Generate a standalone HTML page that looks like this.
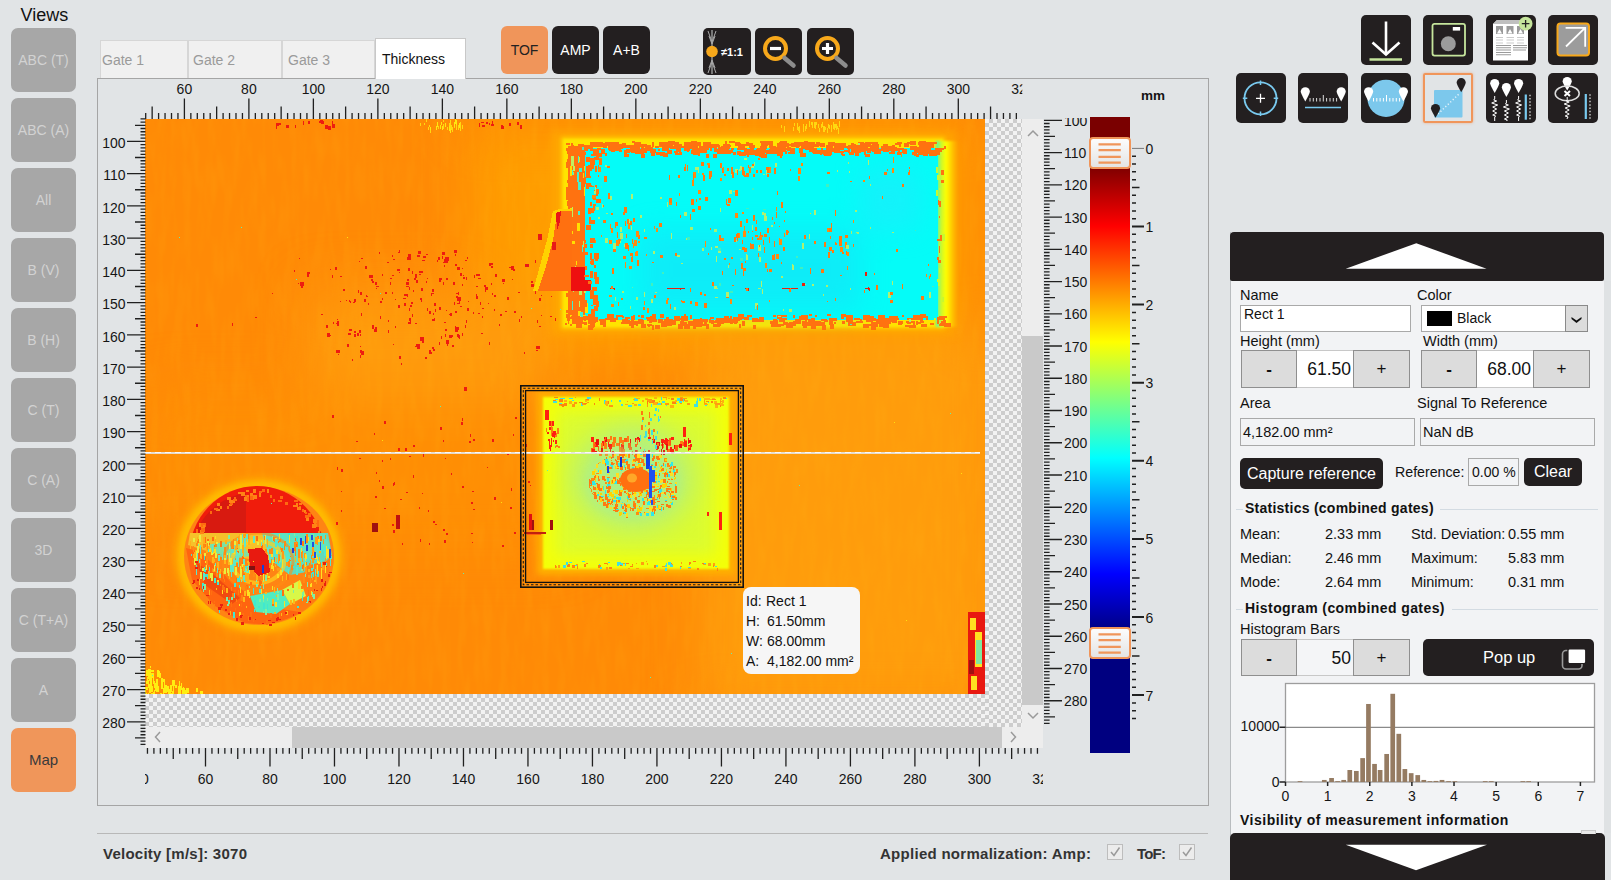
<!DOCTYPE html><html><head><meta charset="utf-8"><style>html,body{margin:0;padding:0}body{width:1611px;height:880px;overflow:hidden;position:relative;background:#e1e4e6;font-family:"Liberation Sans", sans-serif;color:#111}.a{position:absolute}.vb{position:absolute;left:11px;width:65px;height:64px;border-radius:7px;background:#a7a7a7;color:#d2d2d2;font-size:14px;text-align:center;line-height:64px}.tab{position:absolute;top:40px;height:38px;background:#f0f0f0;border:1px solid #d6d6d6;border-bottom:none;box-sizing:border-box;color:#9a9a9a;font-size:14px;line-height:38px;padding-left:1px}.dbtn{position:absolute;background:#231f20;border-radius:6px;color:#fff;text-align:center}svg text{font-family:"Liberation Sans",sans-serif;font-size:14px;fill:#151515}.lbl{position:absolute;font-size:14.5px;color:#111;white-space:nowrap}.box{position:absolute;box-sizing:border-box;border:1px solid #a9a9a9}.sp{position:absolute;box-sizing:border-box;background:#dcdcdc;border:1px solid #8f8f8f;font-size:17px;text-align:center;color:#111}</style></head><body>
<div class="a" style="left:20.5px;top:5px;font-size:18px;color:#111">Views</div>
<div class="vb" style="top:28px">ABC (T)</div>
<div class="vb" style="top:98px">ABC (A)</div>
<div class="vb" style="top:168px">All</div>
<div class="vb" style="top:238px">B (V)</div>
<div class="vb" style="top:308px">B (H)</div>
<div class="vb" style="top:378px">C (T)</div>
<div class="vb" style="top:448px">C (A)</div>
<div class="vb" style="top:518px">3D</div>
<div class="vb" style="top:588px">C (T+A)</div>
<div class="vb" style="top:658px">A</div>
<div class="vb" style="top:728px;background:#f0965a;color:#3a3a3a;font-size:15px">Map</div>
<div class="tab" style="left:100px;width:88px">Gate 1</div>
<div class="tab" style="left:188px;width:94px;padding-left:4px">Gate 2</div>
<div class="tab" style="left:282px;width:93px;padding-left:5px">Gate 3</div>
<div class="tab" style="left:375px;top:38px;height:41px;width:91px;background:#fff;border-color:#c8c8c8;color:#111;line-height:41px;padding-left:6px;z-index:2">Thickness</div>
<div class="a" style="left:97px;top:78px;width:1110px;height:726px;border:1px solid #a5a5a5;box-sizing:content-box"></div>
<div class="a" style="left:501px;top:26px;width:47px;height:48px;border-radius:6px;background:#f0955a;color:#222;font-size:14px;text-align:center;line-height:48px">TOF</div>
<div class="dbtn" style="left:552px;top:26px;width:47px;height:48px;font-size:14px;line-height:48px">AMP</div>
<div class="dbtn" style="left:603px;top:26px;width:47px;height:48px;font-size:14px;line-height:48px">A+B</div>
<div style="position:absolute;left:703px;top:28px;width:48px;height:47px;background:#231f20;border-radius:5px;"><svg width="48" height="47" viewBox="0 0 48 47" style="position:absolute;left:0;top:0"><path d="M9 2 L9 46" stroke="#777" stroke-width="2"/><path d="M5 3 L9 14 L13 3 M6 8 L9 16 L12 8 M5 45 L9 34 L13 45 M6 40 L9 32 L12 40" stroke="#aaa" stroke-width="1" fill="none"/><circle cx="9" cy="23.5" r="5.8" fill="#f7a81b"/><text x="18" y="27.5" style="font-size:11px;font-weight:bold;fill:#fff">≠1:1</text></svg></div>
<div style="position:absolute;left:755px;top:28px;width:47px;height:47px;background:#231f20;border-radius:5px;"><svg width="47" height="47" viewBox="0 0 47 47" style="position:absolute;left:0;top:0"><circle cx="20.5" cy="20.5" r="10.5" stroke="#f7a81b" stroke-width="4" fill="none"/><path d="M29.5 30 L38.5 37.5" stroke="#8d8d8d" stroke-width="4.5" stroke-linecap="round"/><path d="M15 20.5H26" stroke="#fff" stroke-width="3.2"/></svg></div>
<div style="position:absolute;left:807px;top:28px;width:47px;height:47px;background:#231f20;border-radius:5px;"><svg width="47" height="47" viewBox="0 0 47 47" style="position:absolute;left:0;top:0"><circle cx="20.5" cy="20.5" r="10.5" stroke="#f7a81b" stroke-width="4" fill="none"/><path d="M29.5 30 L38.5 37.5" stroke="#8d8d8d" stroke-width="4.5" stroke-linecap="round"/><path d="M15 20.5H26 M20.5 15V26" stroke="#fff" stroke-width="3.2"/></svg></div>
<div class="a" style="left:985px;top:119px;width:37px;height:608px;background-color:#f2f2f2;background-image:linear-gradient(45deg,#cdcdcd 25%,transparent 25%,transparent 75%,#cdcdcd 75%),linear-gradient(45deg,#cdcdcd 25%,transparent 25%,transparent 75%,#cdcdcd 75%);background-size:8px 8px;background-position:0 0,4px 4px"></div>
<div class="a" style="left:145px;top:694px;width:840px;height:33px;background-color:#f2f2f2;background-image:linear-gradient(45deg,#cdcdcd 25%,transparent 25%,transparent 75%,#cdcdcd 75%),linear-gradient(45deg,#cdcdcd 25%,transparent 25%,transparent 75%,#cdcdcd 75%);background-size:8px 8px;background-position:0 0,4px 4px"></div>
<svg style="position:absolute;left:145px;top:119px" width="840" height="575" viewBox="145 119 840 575" shape-rendering="crispEdges">
<defs><filter id="b1" color-interpolation-filters="sRGB" x="-20%" y="-20%" width="140%" height="140%"><feGaussianBlur stdDeviation="1"/></filter><filter id="b2" color-interpolation-filters="sRGB" x="-20%" y="-20%" width="140%" height="140%"><feGaussianBlur stdDeviation="2"/></filter><filter id="b3" color-interpolation-filters="sRGB" x="-20%" y="-20%" width="140%" height="140%"><feGaussianBlur stdDeviation="3"/></filter><filter id="b5" color-interpolation-filters="sRGB" x="-20%" y="-20%" width="140%" height="140%"><feGaussianBlur stdDeviation="5"/></filter><filter id="b8" color-interpolation-filters="sRGB" x="-30%" y="-30%" width="160%" height="160%"><feGaussianBlur stdDeviation="8"/></filter><filter id="b14" color-interpolation-filters="sRGB" x="-50%" y="-50%" width="200%" height="200%"><feGaussianBlur stdDeviation="14"/></filter><filter id="b25" color-interpolation-filters="sRGB" x="-50%" y="-50%" width="200%" height="200%"><feGaussianBlur stdDeviation="25"/></filter></defs>
<rect x="145" y="119" width="840" height="575" fill="#ff8a06"/>
<filter id="tex" color-interpolation-filters="sRGB" x="0" y="0" width="100%" height="100%"><feTurbulence type="fractalNoise" baseFrequency="0.12 0.025" numOctaves="2" seed="4"/><feColorMatrix type="matrix" values="0 0 0 0 1  0 0 0 0 0.78  0 0 0 0 0.1  1.2 0 0 0 -0.45"/></filter>
<g filter="url(#b25)" shape-rendering="auto"><rect x="470" y="125" width="500" height="230" fill="#ff9c00"/><rect x="150" y="390" width="420" height="160" fill="#ff8e04"/><rect x="310" y="290" width="240" height="110" fill="#ff9a0c"/><rect x="700" y="330" width="300" height="380" fill="#ff9c0c"/></g>
<rect x="145" y="119" width="840" height="575" filter="url(#tex)" opacity="0.18" shape-rendering="auto"/>
<g shape-rendering="auto">
<rect x="552" y="132" width="402" height="202" fill="#ffa600" filter="url(#b5)"/>
<rect x="561" y="137" width="384" height="192" fill="#ffcc00" filter="url(#b2)"/>
<rect x="563" y="139" width="380" height="188" fill="#ffe400" filter="url(#b1)"/>
<linearGradient id="rg" x1="0" x2="1" y1="0" y2="0"><stop offset="0" stop-color="#40f8c0"/><stop offset="0.2" stop-color="#c8f830"/><stop offset="0.42" stop-color="#ffff00"/><stop offset="0.7" stop-color="#ffc000"/><stop offset="1" stop-color="#ffa000" stop-opacity="0"/></linearGradient>
<rect x="936" y="141" width="24" height="186" fill="url(#rg)" filter="url(#b1)"/>
</g>
<rect x="585" y="148" width="353" height="172" fill="#04fcf8"/>
<g filter="url(#b14)" shape-rendering="auto" opacity="0.35"><rect x="640" y="230" width="220" height="80" fill="#20d0f8"/><rect x="860" y="170" width="60" height="60" fill="#30e0ff"/></g>
<rect x="568" y="146" width="17" height="178" fill="#ff7210"/>
<rect x="568" y="246" width="5" height="5" fill="#ff7210"/><rect x="565" y="237" width="3" height="2" fill="#ff7210"/><rect x="566" y="162" width="2" height="6" fill="#ff7210"/><rect x="572" y="262" width="3" height="6" fill="#ff7210"/><rect x="571" y="157" width="2" height="3" fill="#ff7210"/><rect x="569" y="285" width="4" height="5" fill="#ff7210"/><rect x="568" y="260" width="5" height="2" fill="#ff7210"/><rect x="568" y="196" width="2" height="7" fill="#ff7210"/><rect x="567" y="187" width="4" height="2" fill="#ff7210"/><rect x="569" y="165" width="2" height="8" fill="#ff7210"/><rect x="567" y="317" width="2" height="3" fill="#ff7210"/><rect x="571" y="155" width="5" height="7" fill="#ff7210"/><rect x="567" y="247" width="3" height="8" fill="#ff7210"/><rect x="567" y="201" width="2" height="5" fill="#ff7210"/><rect x="565" y="272" width="2" height="2" fill="#ff7210"/><rect x="570" y="178" width="3" height="5" fill="#ff7210"/><rect x="572" y="283" width="5" height="7" fill="#ff7210"/><rect x="565" y="221" width="3" height="2" fill="#ff7210"/><rect x="571" y="320" width="4" height="2" fill="#ff7210"/><rect x="565" y="323" width="2" height="2" fill="#ff7210"/><rect x="566" y="192" width="4" height="8" fill="#ff7210"/><rect x="567" y="159" width="3" height="6" fill="#ff7210"/><rect x="564" y="212" width="5" height="3" fill="#ff7210"/><rect x="571" y="170" width="5" height="3" fill="#ff7210"/><rect x="566" y="187" width="3" height="7" fill="#ff7210"/><rect x="565" y="258" width="3" height="7" fill="#ff7210"/><rect x="571" y="253" width="5" height="2" fill="#ff7210"/><rect x="565" y="237" width="4" height="3" fill="#ff7210"/><rect x="566" y="293" width="5" height="4" fill="#ff7210"/><rect x="571" y="320" width="3" height="3" fill="#ff7210"/><rect x="568" y="298" width="2" height="4" fill="#ff7210"/><rect x="571" y="182" width="2" height="2" fill="#ff7210"/><rect x="567" y="190" width="2" height="3" fill="#ff7210"/><rect x="567" y="248" width="3" height="2" fill="#ff7210"/><rect x="565" y="226" width="4" height="7" fill="#ff7210"/><rect x="569" y="310" width="5" height="4" fill="#ff7210"/><rect x="572" y="150" width="2" height="5" fill="#ff7210"/><rect x="570" y="203" width="2" height="2" fill="#ff7210"/><rect x="568" y="277" width="3" height="8" fill="#ff7210"/><rect x="567" y="268" width="2" height="8" fill="#ff7210"/><rect x="572" y="151" width="5" height="6" fill="#ff7210"/><rect x="569" y="214" width="2" height="6" fill="#ff7210"/><rect x="565" y="260" width="4" height="5" fill="#ff7210"/><rect x="567" y="277" width="5" height="5" fill="#ff7210"/><rect x="571" y="161" width="2" height="4" fill="#ff7210"/><rect x="568" y="187" width="2" height="5" fill="#ff7210"/><rect x="566" y="148" width="4" height="3" fill="#ff7210"/><rect x="568" y="280" width="4" height="7" fill="#ff7210"/><rect x="568" y="189" width="5" height="7" fill="#ff7210"/><rect x="566" y="223" width="3" height="3" fill="#ff7210"/><rect x="566" y="310" width="3" height="3" fill="#ff7210"/><rect x="568" y="295" width="2" height="7" fill="#ff7210"/><rect x="572" y="195" width="3" height="2" fill="#ff7210"/><rect x="568" y="311" width="5" height="5" fill="#ff7210"/><rect x="569" y="273" width="5" height="4" fill="#ff7210"/><rect x="571" y="196" width="2" height="7" fill="#ff7210"/><rect x="569" y="201" width="2" height="7" fill="#ff7210"/><rect x="567" y="180" width="4" height="3" fill="#ff7210"/><rect x="570" y="321" width="2" height="5" fill="#ff7210"/><rect x="569" y="263" width="4" height="2" fill="#ff7210"/>
<rect x="572" y="231" width="1" height="3" fill="#ffe000"/><rect x="578" y="156" width="1" height="7" fill="#40f0d0"/><rect x="578" y="311" width="3" height="5" fill="#ffe000"/><rect x="583" y="269" width="1" height="4" fill="#ffe000"/><rect x="584" y="273" width="1" height="10" fill="#ffe000"/><rect x="572" y="301" width="1" height="9" fill="#40f0d0"/><rect x="576" y="261" width="1" height="4" fill="#ffe000"/><rect x="572" y="303" width="1" height="7" fill="#40f0d0"/><rect x="573" y="272" width="1" height="8" fill="#ffe000"/><rect x="570" y="208" width="2" height="7" fill="#ffe000"/><rect x="584" y="187" width="1" height="9" fill="#ffe000"/><rect x="572" y="207" width="1" height="10" fill="#c0f060"/><rect x="585" y="303" width="3" height="10" fill="#ffe000"/><rect x="578" y="267" width="1" height="10" fill="#40f0d0"/><rect x="582" y="245" width="1" height="7" fill="#40f0d0"/><rect x="580" y="312" width="3" height="6" fill="#40f0d0"/><rect x="583" y="315" width="3" height="7" fill="#ffe000"/><rect x="572" y="241" width="3" height="3" fill="#ffe000"/><rect x="569" y="315" width="3" height="9" fill="#ffe000"/><rect x="577" y="267" width="1" height="10" fill="#ffe000"/><rect x="584" y="286" width="2" height="7" fill="#c0f060"/><rect x="577" y="172" width="2" height="10" fill="#40f0d0"/><rect x="571" y="221" width="1" height="7" fill="#c0f060"/><rect x="580" y="316" width="1" height="6" fill="#c0f060"/><rect x="573" y="267" width="2" height="8" fill="#c0f060"/><rect x="579" y="168" width="3" height="4" fill="#40f0d0"/><rect x="580" y="269" width="2" height="3" fill="#ffe000"/><rect x="579" y="290" width="3" height="5" fill="#c0f060"/><rect x="583" y="241" width="1" height="6" fill="#c0f060"/><rect x="573" y="276" width="2" height="5" fill="#40f0d0"/><rect x="579" y="301" width="1" height="6" fill="#c0f060"/><rect x="583" y="173" width="1" height="5" fill="#ffe000"/><rect x="573" y="166" width="2" height="5" fill="#c0f060"/><rect x="575" y="266" width="1" height="4" fill="#c0f060"/><rect x="578" y="211" width="2" height="4" fill="#40f0d0"/><rect x="577" y="267" width="1" height="4" fill="#ffe000"/><rect x="571" y="156" width="3" height="10" fill="#c0f060"/><rect x="572" y="170" width="1" height="5" fill="#40f0d0"/><rect x="584" y="166" width="1" height="5" fill="#ffe000"/><rect x="570" y="166" width="2" height="10" fill="#ffe000"/><rect x="577" y="223" width="3" height="8" fill="#ffe000"/><rect x="579" y="157" width="1" height="5" fill="#ffe000"/><rect x="576" y="276" width="2" height="6" fill="#c0f060"/><rect x="571" y="285" width="2" height="4" fill="#ffe000"/><rect x="578" y="182" width="3" height="8" fill="#40f0d0"/>
<path d="M533 291 L541 262 L548 236 L553 211 L560 209 L572 209 L572 291Z" fill="#ffd200"/>
<path d="M538 291 L545 270 L553 240 L557 214 L561 211 L572 211 L572 291Z" fill="#ff7010"/>
<path d="M556 213 L561 211 L560 222 L557 230Z" fill="#e81818"/><rect x="552" y="242" width="4" height="8" fill="#e81818"/>
<rect x="538" y="234" width="4" height="6" fill="#e81818"/><rect x="525" y="264" width="4" height="3" fill="#e81818"/>
<rect x="571" y="267" width="14" height="24" fill="#ee1010"/><rect x="585" y="280" width="6" height="11" fill="#ee1010"/>
<rect x="672" y="142" width="7" height="3" fill="#ff7210"/><rect x="616" y="144" width="6" height="4" fill="#ff7210"/><rect x="855" y="145" width="7" height="3" fill="#ff7210"/><rect x="867" y="144" width="2" height="2" fill="#ff7210"/><rect x="940" y="149" width="2" height="3" fill="#ff7210"/><rect x="923" y="147" width="4" height="3" fill="#ff7210"/><rect x="781" y="146" width="5" height="5" fill="#ff7210"/><rect x="831" y="148" width="6" height="2" fill="#ff7210"/><rect x="799" y="148" width="4" height="5" fill="#ff7210"/><rect x="757" y="148" width="7" height="5" fill="#ff7210"/><rect x="603" y="143" width="4" height="5" fill="#ff7210"/><rect x="807" y="148" width="2" height="2" fill="#ff7210"/><rect x="918" y="142" width="5" height="3" fill="#ff7210"/><rect x="771" y="146" width="5" height="5" fill="#ff7210"/><rect x="674" y="145" width="4" height="4" fill="#ff7210"/><rect x="749" y="143" width="4" height="4" fill="#ff7210"/><rect x="571" y="143" width="2" height="3" fill="#ff7210"/><rect x="851" y="145" width="4" height="5" fill="#ff7210"/><rect x="786" y="148" width="4" height="2" fill="#ff7210"/><rect x="728" y="145" width="3" height="2" fill="#ff7210"/><rect x="920" y="148" width="5" height="3" fill="#ff7210"/><rect x="794" y="142" width="6" height="5" fill="#ff7210"/><rect x="611" y="149" width="4" height="3" fill="#ff7210"/><rect x="703" y="142" width="5" height="5" fill="#ff7210"/><rect x="808" y="147" width="4" height="3" fill="#ff7210"/><rect x="844" y="143" width="2" height="4" fill="#ff7210"/><rect x="670" y="146" width="7" height="3" fill="#ff7210"/><rect x="851" y="143" width="3" height="3" fill="#ff7210"/><rect x="804" y="141" width="4" height="5" fill="#ff7210"/><rect x="802" y="142" width="6" height="4" fill="#ff7210"/><rect x="852" y="149" width="3" height="3" fill="#ff7210"/><rect x="749" y="144" width="4" height="4" fill="#ff7210"/><rect x="848" y="149" width="2" height="2" fill="#ff7210"/><rect x="872" y="147" width="3" height="5" fill="#ff7210"/><rect x="848" y="145" width="3" height="4" fill="#ff7210"/><rect x="813" y="150" width="4" height="4" fill="#ff7210"/><rect x="728" y="144" width="2" height="5" fill="#ff7210"/><rect x="596" y="142" width="6" height="5" fill="#ff7210"/><rect x="679" y="148" width="2" height="4" fill="#ff7210"/><rect x="910" y="146" width="7" height="4" fill="#ff7210"/><rect x="840" y="147" width="4" height="3" fill="#ff7210"/><rect x="701" y="148" width="4" height="2" fill="#ff7210"/><rect x="834" y="146" width="7" height="4" fill="#ff7210"/><rect x="766" y="150" width="5" height="4" fill="#ff7210"/><rect x="717" y="149" width="6" height="3" fill="#ff7210"/><rect x="703" y="144" width="4" height="5" fill="#ff7210"/><rect x="867" y="148" width="4" height="5" fill="#ff7210"/><rect x="882" y="146" width="3" height="2" fill="#ff7210"/><rect x="899" y="144" width="2" height="3" fill="#ff7210"/><rect x="772" y="146" width="2" height="5" fill="#ff7210"/><rect x="786" y="144" width="6" height="2" fill="#ff7210"/><rect x="597" y="148" width="4" height="2" fill="#ff7210"/><rect x="806" y="142" width="7" height="5" fill="#ff7210"/><rect x="835" y="145" width="6" height="4" fill="#ff7210"/><rect x="715" y="144" width="4" height="3" fill="#ff7210"/><rect x="750" y="148" width="2" height="2" fill="#ff7210"/><rect x="852" y="150" width="4" height="2" fill="#ff7210"/><rect x="881" y="149" width="6" height="2" fill="#ff7210"/><rect x="834" y="148" width="5" height="5" fill="#ff7210"/><rect x="659" y="142" width="7" height="5" fill="#ff7210"/><rect x="687" y="145" width="6" height="4" fill="#ff7210"/><rect x="933" y="142" width="4" height="2" fill="#ff7210"/><rect x="811" y="148" width="3" height="2" fill="#ff7210"/><rect x="572" y="145" width="2" height="4" fill="#ff7210"/><rect x="641" y="144" width="6" height="3" fill="#ff7210"/><rect x="791" y="143" width="3" height="4" fill="#ff7210"/><rect x="631" y="148" width="4" height="5" fill="#ff7210"/><rect x="749" y="145" width="4" height="2" fill="#ff7210"/><rect x="892" y="145" width="3" height="3" fill="#ff7210"/><rect x="935" y="148" width="4" height="2" fill="#ff7210"/><rect x="903" y="149" width="4" height="5" fill="#ff7210"/><rect x="836" y="146" width="3" height="5" fill="#ff7210"/><rect x="858" y="142" width="6" height="3" fill="#ff7210"/><rect x="761" y="141" width="6" height="3" fill="#ff7210"/><rect x="643" y="149" width="3" height="3" fill="#ff7210"/><rect x="699" y="147" width="6" height="2" fill="#ff7210"/><rect x="828" y="142" width="7" height="4" fill="#ff7210"/><rect x="864" y="145" width="7" height="2" fill="#ff7210"/><rect x="645" y="146" width="6" height="5" fill="#ff7210"/><rect x="924" y="150" width="4" height="4" fill="#ff7210"/><rect x="595" y="144" width="5" height="2" fill="#ff7210"/><rect x="594" y="142" width="7" height="5" fill="#ff7210"/><rect x="848" y="148" width="2" height="5" fill="#ff7210"/><rect x="892" y="147" width="5" height="3" fill="#ff7210"/><rect x="779" y="145" width="2" height="3" fill="#ff7210"/><rect x="676" y="144" width="6" height="4" fill="#ff7210"/><rect x="851" y="146" width="2" height="4" fill="#ff7210"/><rect x="642" y="148" width="4" height="4" fill="#ff7210"/><rect x="779" y="148" width="4" height="5" fill="#ff7210"/><rect x="601" y="142" width="2" height="3" fill="#ff7210"/><rect x="634" y="145" width="5" height="2" fill="#ff7210"/><rect x="652" y="142" width="2" height="5" fill="#ff7210"/><rect x="858" y="144" width="5" height="3" fill="#ff7210"/><rect x="856" y="148" width="5" height="5" fill="#ff7210"/><rect x="914" y="147" width="7" height="5" fill="#ff7210"/><rect x="937" y="148" width="7" height="2" fill="#ff7210"/><rect x="691" y="144" width="7" height="5" fill="#ff7210"/><rect x="777" y="143" width="4" height="4" fill="#ff7210"/><rect x="797" y="142" width="6" height="4" fill="#ff7210"/><rect x="699" y="146" width="3" height="3" fill="#ff7210"/><rect x="780" y="141" width="7" height="3" fill="#ff7210"/><rect x="618" y="145" width="5" height="4" fill="#ff7210"/><rect x="601" y="149" width="4" height="5" fill="#ff7210"/><rect x="737" y="148" width="3" height="2" fill="#ff7210"/><rect x="630" y="148" width="4" height="3" fill="#ff7210"/><rect x="919" y="141" width="7" height="4" fill="#ff7210"/><rect x="853" y="144" width="3" height="3" fill="#ff7210"/><rect x="738" y="145" width="7" height="3" fill="#ff7210"/><rect x="852" y="149" width="5" height="2" fill="#ff7210"/><rect x="641" y="145" width="3" height="5" fill="#ff7210"/><rect x="781" y="143" width="6" height="3" fill="#ff7210"/><rect x="658" y="149" width="2" height="2" fill="#ff7210"/><rect x="718" y="145" width="2" height="5" fill="#ff7210"/><rect x="722" y="147" width="7" height="5" fill="#ff7210"/><rect x="750" y="150" width="7" height="5" fill="#ff7210"/><rect x="610" y="142" width="6" height="4" fill="#ff7210"/><rect x="725" y="141" width="2" height="4" fill="#ff7210"/><rect x="843" y="146" width="4" height="2" fill="#ff7210"/><rect x="613" y="145" width="6" height="5" fill="#ff7210"/><rect x="746" y="142" width="3" height="4" fill="#ff7210"/><rect x="921" y="149" width="7" height="4" fill="#ff7210"/><rect x="779" y="142" width="7" height="5" fill="#ff7210"/><rect x="907" y="142" width="3" height="2" fill="#ff7210"/><rect x="566" y="143" width="4" height="2" fill="#ff7210"/><rect x="631" y="145" width="5" height="5" fill="#ff7210"/><rect x="701" y="146" width="2" height="4" fill="#ff7210"/><rect x="738" y="144" width="4" height="5" fill="#ff7210"/><rect x="919" y="150" width="5" height="3" fill="#ff7210"/><rect x="678" y="149" width="2" height="3" fill="#ff7210"/><rect x="883" y="144" width="5" height="2" fill="#ff7210"/><rect x="806" y="147" width="6" height="3" fill="#ff7210"/><rect x="638" y="149" width="2" height="2" fill="#ff7210"/><rect x="840" y="144" width="4" height="5" fill="#ff7210"/><rect x="693" y="150" width="5" height="5" fill="#ff7210"/><rect x="630" y="149" width="2" height="3" fill="#ff7210"/><rect x="634" y="143" width="7" height="4" fill="#ff7210"/><rect x="707" y="147" width="2" height="3" fill="#ff7210"/><rect x="904" y="143" width="3" height="4" fill="#ff7210"/><rect x="808" y="142" width="2" height="5" fill="#ff7210"/><rect x="767" y="141" width="6" height="4" fill="#ff7210"/><rect x="726" y="146" width="3" height="4" fill="#ff7210"/><rect x="659" y="144" width="6" height="2" fill="#ff7210"/><rect x="865" y="142" width="2" height="5" fill="#ff7210"/><rect x="567" y="149" width="2" height="3" fill="#ff7210"/><rect x="776" y="147" width="4" height="4" fill="#ff7210"/><rect x="862" y="146" width="6" height="3" fill="#ff7210"/><rect x="608" y="145" width="7" height="5" fill="#ff7210"/><rect x="863" y="148" width="3" height="4" fill="#ff7210"/><rect x="772" y="149" width="6" height="5" fill="#ff7210"/><rect x="579" y="146" width="7" height="2" fill="#ff7210"/><rect x="896" y="143" width="3" height="2" fill="#ff7210"/><rect x="871" y="146" width="7" height="4" fill="#ff7210"/><rect x="593" y="149" width="6" height="3" fill="#ff7210"/><rect x="586" y="145" width="7" height="4" fill="#ff7210"/><rect x="855" y="145" width="7" height="3" fill="#ff7210"/><rect x="662" y="142" width="7" height="5" fill="#ff7210"/><rect x="685" y="145" width="7" height="3" fill="#ff7210"/><rect x="615" y="148" width="6" height="3" fill="#ff7210"/><rect x="847" y="146" width="2" height="2" fill="#ff7210"/><rect x="721" y="146" width="2" height="5" fill="#ff7210"/><rect x="744" y="149" width="2" height="3" fill="#ff7210"/><rect x="662" y="146" width="3" height="5" fill="#ff7210"/><rect x="599" y="143" width="4" height="4" fill="#ff7210"/><rect x="581" y="145" width="7" height="2" fill="#ff7210"/><rect x="780" y="149" width="6" height="3" fill="#ff7210"/><rect x="891" y="149" width="3" height="5" fill="#ff7210"/><rect x="861" y="143" width="4" height="3" fill="#ff7210"/><rect x="866" y="148" width="5" height="3" fill="#ff7210"/><rect x="647" y="145" width="4" height="5" fill="#ff7210"/><rect x="751" y="147" width="3" height="5" fill="#ff7210"/><rect x="770" y="145" width="2" height="4" fill="#ff7210"/><rect x="925" y="147" width="6" height="3" fill="#ff7210"/><rect x="760" y="146" width="7" height="3" fill="#ff7210"/><rect x="605" y="142" width="7" height="4" fill="#ff7210"/><rect x="855" y="148" width="2" height="2" fill="#ff7210"/><rect x="883" y="145" width="5" height="4" fill="#ff7210"/><rect x="857" y="146" width="2" height="4" fill="#ff7210"/><rect x="796" y="145" width="3" height="3" fill="#ff7210"/><rect x="578" y="144" width="5" height="5" fill="#ff7210"/><rect x="761" y="146" width="4" height="5" fill="#ff7210"/><rect x="622" y="143" width="4" height="5" fill="#ff7210"/><rect x="618" y="146" width="4" height="3" fill="#ff7210"/><rect x="676" y="144" width="3" height="3" fill="#ff7210"/><rect x="887" y="148" width="5" height="2" fill="#ff7210"/><rect x="816" y="142" width="3" height="4" fill="#ff7210"/><rect x="927" y="149" width="3" height="4" fill="#ff7210"/><rect x="868" y="142" width="5" height="2" fill="#ff7210"/><rect x="711" y="144" width="5" height="4" fill="#ff7210"/><rect x="626" y="145" width="5" height="3" fill="#ff7210"/><rect x="817" y="143" width="2" height="4" fill="#ff7210"/><rect x="870" y="145" width="4" height="4" fill="#ff7210"/><rect x="907" y="142" width="2" height="5" fill="#ff7210"/><rect x="587" y="145" width="6" height="4" fill="#ff7210"/><rect x="838" y="149" width="2" height="2" fill="#ff7210"/><rect x="697" y="149" width="6" height="4" fill="#ff7210"/><rect x="874" y="149" width="7" height="5" fill="#ff7210"/><rect x="799" y="150" width="4" height="2" fill="#ff7210"/><rect x="858" y="147" width="6" height="5" fill="#ff7210"/><rect x="590" y="142" width="5" height="5" fill="#ff7210"/><rect x="931" y="144" width="3" height="4" fill="#ff7210"/><rect x="753" y="145" width="2" height="3" fill="#ff7210"/><rect x="668" y="143" width="3" height="3" fill="#ff7210"/><rect x="916" y="150" width="2" height="3" fill="#ff7210"/><rect x="887" y="148" width="2" height="4" fill="#ff7210"/><rect x="697" y="149" width="4" height="3" fill="#ff7210"/><rect x="826" y="150" width="3" height="3" fill="#ff7210"/><rect x="801" y="145" width="6" height="4" fill="#ff7210"/><rect x="723" y="144" width="7" height="5" fill="#ff7210"/><rect x="810" y="144" width="7" height="3" fill="#ff7210"/><rect x="898" y="150" width="2" height="4" fill="#ff7210"/><rect x="887" y="146" width="7" height="5" fill="#ff7210"/><rect x="627" y="149" width="5" height="2" fill="#ff7210"/><rect x="662" y="146" width="7" height="5" fill="#ff7210"/><rect x="837" y="143" width="7" height="4" fill="#ff7210"/><rect x="692" y="148" width="6" height="3" fill="#ff7210"/><rect x="808" y="142" width="7" height="4" fill="#ff7210"/><rect x="613" y="144" width="7" height="4" fill="#ff7210"/><rect x="812" y="150" width="5" height="3" fill="#ff7210"/><rect x="826" y="145" width="7" height="5" fill="#ff7210"/><rect x="919" y="150" width="2" height="3" fill="#ff7210"/><rect x="895" y="143" width="4" height="2" fill="#ff7210"/><rect x="691" y="141" width="6" height="5" fill="#ff7210"/><rect x="707" y="144" width="7" height="4" fill="#ff7210"/><rect x="714" y="147" width="3" height="5" fill="#ff7210"/><rect x="772" y="148" width="3" height="5" fill="#ff7210"/><rect x="881" y="146" width="4" height="5" fill="#ff7210"/><rect x="611" y="144" width="2" height="4" fill="#ff7210"/><rect x="669" y="145" width="4" height="3" fill="#ff7210"/><rect x="748" y="144" width="4" height="2" fill="#ff7210"/><rect x="590" y="149" width="4" height="2" fill="#ff7210"/><rect x="635" y="145" width="3" height="5" fill="#ff7210"/><rect x="578" y="144" width="6" height="5" fill="#ff7210"/><rect x="647" y="147" width="6" height="4" fill="#ff7210"/><rect x="637" y="144" width="3" height="5" fill="#ff7210"/><rect x="632" y="141" width="3" height="2" fill="#ff7210"/><rect x="668" y="141" width="6" height="4" fill="#ff7210"/><rect x="760" y="141" width="3" height="2" fill="#ff7210"/><rect x="570" y="146" width="3" height="5" fill="#ff7210"/><rect x="682" y="146" width="7" height="2" fill="#ff7210"/><rect x="718" y="147" width="4" height="2" fill="#ff7210"/><rect x="784" y="143" width="5" height="4" fill="#ff7210"/><rect x="872" y="144" width="7" height="5" fill="#ff7210"/><rect x="684" y="142" width="7" height="4" fill="#ff7210"/><rect x="666" y="143" width="3" height="3" fill="#ff7210"/><rect x="847" y="146" width="7" height="3" fill="#ff7210"/><rect x="697" y="142" width="4" height="4" fill="#ff7210"/><rect x="729" y="141" width="6" height="2" fill="#ff7210"/><rect x="602" y="150" width="3" height="2" fill="#ff7210"/><rect x="687" y="148" width="2" height="4" fill="#ff7210"/><rect x="745" y="149" width="5" height="5" fill="#ff7210"/><rect x="873" y="142" width="5" height="4" fill="#ff7210"/><rect x="860" y="146" width="2" height="3" fill="#ff7210"/><rect x="910" y="141" width="6" height="4" fill="#ff7210"/><rect x="890" y="147" width="6" height="2" fill="#ff7210"/><rect x="883" y="147" width="5" height="5" fill="#ff7210"/><rect x="725" y="144" width="3" height="5" fill="#ff7210"/><rect x="761" y="141" width="7" height="5" fill="#ff7210"/><rect x="673" y="141" width="2" height="4" fill="#ff7210"/><rect x="769" y="144" width="4" height="4" fill="#ff7210"/><rect x="844" y="150" width="5" height="2" fill="#ff7210"/><rect x="851" y="149" width="2" height="3" fill="#ff7210"/><rect x="884" y="147" width="3" height="2" fill="#ff7210"/><rect x="759" y="150" width="2" height="3" fill="#ff7210"/><rect x="835" y="143" width="4" height="5" fill="#ff7210"/><rect x="769" y="149" width="3" height="5" fill="#ff7210"/><rect x="930" y="143" width="2" height="5" fill="#ff7210"/><rect x="897" y="142" width="5" height="2" fill="#ff7210"/><rect x="867" y="142" width="4" height="3" fill="#ff7210"/><rect x="692" y="149" width="3" height="4" fill="#ff7210"/><rect x="723" y="147" width="2" height="5" fill="#ff7210"/><rect x="593" y="150" width="3" height="4" fill="#ff7210"/><rect x="778" y="150" width="5" height="2" fill="#ff7210"/><rect x="831" y="149" width="4" height="3" fill="#ff7210"/><rect x="634" y="142" width="7" height="5" fill="#ff7210"/><rect x="615" y="142" width="4" height="4" fill="#ff7210"/><rect x="640" y="150" width="7" height="3" fill="#ff7210"/><rect x="895" y="148" width="3" height="3" fill="#ff7210"/><rect x="805" y="145" width="6" height="5" fill="#ff7210"/><rect x="739" y="146" width="2" height="4" fill="#ff7210"/><rect x="655" y="146" width="4" height="2" fill="#ff7210"/><rect x="926" y="142" width="7" height="5" fill="#ff7210"/><rect x="919" y="144" width="7" height="5" fill="#ff7210"/><rect x="735" y="142" width="5" height="4" fill="#ff7210"/><rect x="787" y="147" width="4" height="4" fill="#ff7210"/><rect x="820" y="143" width="5" height="4" fill="#ff7210"/><rect x="790" y="149" width="5" height="5" fill="#ff7210"/><rect x="695" y="148" width="6" height="2" fill="#ff7210"/><rect x="737" y="143" width="4" height="2" fill="#ff7210"/><rect x="577" y="146" width="7" height="4" fill="#ff7210"/><rect x="818" y="142" width="2" height="4" fill="#ff7210"/><rect x="742" y="144" width="7" height="2" fill="#ff7210"/><rect x="935" y="150" width="5" height="5" fill="#ff7210"/><rect x="812" y="147" width="2" height="2" fill="#ff7210"/><rect x="814" y="148" width="3" height="3" fill="#ff7210"/><rect x="706" y="142" width="5" height="2" fill="#ff7210"/><rect x="567" y="150" width="7" height="4" fill="#ff7210"/><rect x="859" y="142" width="5" height="3" fill="#ff7210"/><rect x="706" y="144" width="2" height="2" fill="#ff7210"/><rect x="722" y="146" width="2" height="2" fill="#ff7210"/><rect x="944" y="146" width="2" height="3" fill="#ff7210"/>
<rect x="819" y="151" width="4" height="3" fill="#ff7210"/><rect x="859" y="149" width="5" height="3" fill="#ff7210"/><rect x="934" y="152" width="3" height="4" fill="#ff7210"/><rect x="747" y="153" width="2" height="4" fill="#ff7210"/><rect x="636" y="151" width="3" height="3" fill="#ff7210"/><rect x="731" y="148" width="3" height="2" fill="#ff7210"/><rect x="640" y="151" width="2" height="3" fill="#ff7210"/><rect x="759" y="153" width="6" height="4" fill="#ff7210"/><rect x="723" y="150" width="3" height="3" fill="#ff7210"/><rect x="817" y="151" width="5" height="2" fill="#ff7210"/><rect x="785" y="151" width="2" height="3" fill="#ff7210"/><rect x="679" y="152" width="3" height="3" fill="#ff7210"/><rect x="737" y="151" width="4" height="4" fill="#ff7210"/><rect x="703" y="149" width="4" height="4" fill="#ff7210"/><rect x="643" y="150" width="4" height="3" fill="#ff7210"/><rect x="823" y="152" width="2" height="3" fill="#ff7210"/><rect x="756" y="149" width="6" height="3" fill="#ff7210"/><rect x="717" y="152" width="2" height="2" fill="#ff7210"/><rect x="924" y="150" width="6" height="4" fill="#ff7210"/><rect x="882" y="149" width="6" height="2" fill="#ff7210"/><rect x="650" y="149" width="4" height="2" fill="#ff7210"/><rect x="660" y="152" width="5" height="4" fill="#ff7210"/><rect x="727" y="150" width="2" height="2" fill="#ff7210"/><rect x="932" y="153" width="4" height="2" fill="#ff7210"/><rect x="638" y="149" width="4" height="4" fill="#ff7210"/><rect x="605" y="153" width="2" height="3" fill="#ff7210"/><rect x="780" y="154" width="2" height="4" fill="#ff7210"/><rect x="790" y="148" width="5" height="3" fill="#ff7210"/><rect x="825" y="154" width="2" height="2" fill="#ff7210"/><rect x="741" y="153" width="5" height="3" fill="#ff7210"/><rect x="868" y="151" width="2" height="2" fill="#ff7210"/><rect x="820" y="151" width="2" height="4" fill="#ff7210"/><rect x="725" y="152" width="6" height="2" fill="#ff7210"/><rect x="619" y="150" width="3" height="2" fill="#ff7210"/><rect x="893" y="151" width="2" height="3" fill="#ff7210"/><rect x="656" y="152" width="5" height="3" fill="#ff7210"/><rect x="828" y="150" width="5" height="2" fill="#ff7210"/><rect x="858" y="150" width="2" height="3" fill="#ff7210"/><rect x="815" y="150" width="6" height="4" fill="#ff7210"/><rect x="745" y="152" width="5" height="3" fill="#ff7210"/><rect x="755" y="154" width="4" height="2" fill="#ff7210"/><rect x="667" y="150" width="5" height="4" fill="#ff7210"/><rect x="676" y="148" width="4" height="3" fill="#ff7210"/><rect x="838" y="151" width="6" height="2" fill="#ff7210"/><rect x="929" y="153" width="5" height="3" fill="#ff7210"/><rect x="626" y="149" width="6" height="2" fill="#ff7210"/><rect x="762" y="149" width="4" height="4" fill="#ff7210"/><rect x="780" y="150" width="3" height="3" fill="#ff7210"/><rect x="869" y="149" width="3" height="2" fill="#ff7210"/><rect x="889" y="152" width="4" height="2" fill="#ff7210"/><rect x="855" y="151" width="4" height="4" fill="#ff7210"/><rect x="713" y="154" width="4" height="4" fill="#ff7210"/><rect x="624" y="150" width="3" height="4" fill="#ff7210"/><rect x="821" y="150" width="6" height="2" fill="#ff7210"/><rect x="756" y="150" width="4" height="3" fill="#ff7210"/><rect x="893" y="149" width="6" height="2" fill="#ff7210"/><rect x="777" y="152" width="6" height="4" fill="#ff7210"/><rect x="693" y="151" width="4" height="4" fill="#ff7210"/><rect x="755" y="152" width="4" height="4" fill="#ff7210"/><rect x="918" y="151" width="6" height="4" fill="#ff7210"/><rect x="898" y="148" width="6" height="2" fill="#ff7210"/><rect x="692" y="148" width="6" height="2" fill="#ff7210"/><rect x="934" y="150" width="3" height="2" fill="#ff7210"/><rect x="635" y="150" width="3" height="4" fill="#ff7210"/><rect x="739" y="152" width="2" height="4" fill="#ff7210"/><rect x="801" y="154" width="2" height="3" fill="#ff7210"/><rect x="757" y="148" width="5" height="2" fill="#ff7210"/><rect x="633" y="150" width="4" height="2" fill="#ff7210"/><rect x="916" y="154" width="3" height="3" fill="#ff7210"/><rect x="800" y="153" width="6" height="4" fill="#ff7210"/><rect x="914" y="149" width="6" height="2" fill="#ff7210"/><rect x="624" y="150" width="4" height="2" fill="#ff7210"/><rect x="596" y="153" width="6" height="4" fill="#ff7210"/><rect x="585" y="148" width="3" height="3" fill="#ff7210"/><rect x="729" y="150" width="4" height="3" fill="#ff7210"/><rect x="902" y="149" width="2" height="4" fill="#ff7210"/><rect x="771" y="150" width="4" height="3" fill="#ff7210"/><rect x="914" y="150" width="3" height="2" fill="#ff7210"/><rect x="674" y="151" width="4" height="2" fill="#ff7210"/><rect x="824" y="152" width="6" height="4" fill="#ff7210"/><rect x="787" y="148" width="4" height="2" fill="#ff7210"/><rect x="691" y="150" width="3" height="4" fill="#ff7210"/><rect x="864" y="151" width="2" height="4" fill="#ff7210"/><rect x="741" y="148" width="6" height="2" fill="#ff7210"/><rect x="821" y="148" width="2" height="3" fill="#ff7210"/><rect x="733" y="152" width="3" height="3" fill="#ff7210"/><rect x="719" y="150" width="6" height="4" fill="#ff7210"/><rect x="753" y="153" width="2" height="2" fill="#ff7210"/><rect x="597" y="154" width="5" height="2" fill="#ff7210"/><rect x="609" y="149" width="5" height="2" fill="#ff7210"/><rect x="706" y="154" width="3" height="4" fill="#ff7210"/><rect x="919" y="149" width="3" height="4" fill="#ff7210"/><rect x="897" y="152" width="5" height="3" fill="#ff7210"/><rect x="842" y="154" width="3" height="2" fill="#ff7210"/><rect x="841" y="152" width="2" height="3" fill="#ff7210"/><rect x="650" y="149" width="6" height="4" fill="#ff7210"/><rect x="854" y="151" width="2" height="2" fill="#ff7210"/><rect x="591" y="154" width="6" height="2" fill="#ff7210"/><rect x="926" y="152" width="2" height="3" fill="#ff7210"/><rect x="865" y="154" width="5" height="3" fill="#ff7210"/><rect x="749" y="149" width="5" height="4" fill="#ff7210"/><rect x="740" y="152" width="6" height="2" fill="#ff7210"/><rect x="642" y="149" width="3" height="2" fill="#ff7210"/><rect x="663" y="153" width="5" height="4" fill="#ff7210"/><rect x="749" y="149" width="2" height="2" fill="#ff7210"/><rect x="928" y="150" width="6" height="4" fill="#ff7210"/><rect x="828" y="150" width="4" height="2" fill="#ff7210"/><rect x="636" y="151" width="6" height="3" fill="#ff7210"/><rect x="776" y="151" width="4" height="3" fill="#ff7210"/><rect x="824" y="152" width="3" height="3" fill="#ff7210"/><rect x="855" y="154" width="4" height="2" fill="#ff7210"/><rect x="641" y="154" width="4" height="4" fill="#ff7210"/><rect x="809" y="148" width="5" height="4" fill="#ff7210"/><rect x="761" y="154" width="6" height="4" fill="#ff7210"/><rect x="827" y="152" width="5" height="3" fill="#ff7210"/><rect x="788" y="152" width="5" height="2" fill="#ff7210"/><rect x="698" y="152" width="2" height="4" fill="#ff7210"/><rect x="927" y="150" width="5" height="2" fill="#ff7210"/><rect x="684" y="148" width="6" height="3" fill="#ff7210"/><rect x="675" y="153" width="6" height="2" fill="#ff7210"/><rect x="710" y="148" width="2" height="3" fill="#ff7210"/><rect x="638" y="150" width="6" height="4" fill="#ff7210"/><rect x="912" y="152" width="5" height="3" fill="#ff7210"/><rect x="827" y="153" width="4" height="3" fill="#ff7210"/><rect x="627" y="151" width="3" height="2" fill="#ff7210"/><rect x="923" y="152" width="5" height="4" fill="#ff7210"/><rect x="914" y="152" width="2" height="4" fill="#ff7210"/><rect x="624" y="154" width="5" height="3" fill="#ff7210"/><rect x="651" y="152" width="4" height="4" fill="#ff7210"/><rect x="849" y="152" width="5" height="3" fill="#ff7210"/>
<rect x="863" y="324" width="6" height="4" fill="#ff7210"/><rect x="808" y="319" width="5" height="4" fill="#ff7210"/><rect x="575" y="316" width="3" height="3" fill="#ff7210"/><rect x="829" y="320" width="4" height="5" fill="#ff7210"/><rect x="827" y="314" width="4" height="2" fill="#ff7210"/><rect x="690" y="315" width="2" height="4" fill="#ff7210"/><rect x="930" y="323" width="4" height="2" fill="#ff7210"/><rect x="648" y="325" width="2" height="2" fill="#ff7210"/><rect x="892" y="320" width="5" height="3" fill="#ff7210"/><rect x="641" y="320" width="3" height="5" fill="#ff7210"/><rect x="717" y="318" width="4" height="4" fill="#ff7210"/><rect x="647" y="324" width="5" height="2" fill="#ff7210"/><rect x="728" y="319" width="5" height="4" fill="#ff7210"/><rect x="943" y="320" width="3" height="3" fill="#ff7210"/><rect x="799" y="316" width="4" height="4" fill="#ff7210"/><rect x="856" y="321" width="7" height="2" fill="#ff7210"/><rect x="589" y="325" width="5" height="3" fill="#ff7210"/><rect x="902" y="315" width="2" height="2" fill="#ff7210"/><rect x="742" y="321" width="3" height="5" fill="#ff7210"/><rect x="783" y="322" width="5" height="3" fill="#ff7210"/><rect x="584" y="322" width="3" height="3" fill="#ff7210"/><rect x="782" y="318" width="5" height="2" fill="#ff7210"/><rect x="842" y="321" width="3" height="3" fill="#ff7210"/><rect x="939" y="324" width="7" height="2" fill="#ff7210"/><rect x="681" y="316" width="7" height="5" fill="#ff7210"/><rect x="895" y="316" width="2" height="2" fill="#ff7210"/><rect x="735" y="318" width="5" height="3" fill="#ff7210"/><rect x="730" y="316" width="2" height="5" fill="#ff7210"/><rect x="801" y="315" width="7" height="5" fill="#ff7210"/><rect x="815" y="321" width="6" height="5" fill="#ff7210"/><rect x="846" y="317" width="7" height="5" fill="#ff7210"/><rect x="646" y="317" width="6" height="2" fill="#ff7210"/><rect x="779" y="318" width="5" height="4" fill="#ff7210"/><rect x="664" y="321" width="3" height="5" fill="#ff7210"/><rect x="942" y="316" width="5" height="2" fill="#ff7210"/><rect x="786" y="323" width="7" height="5" fill="#ff7210"/><rect x="789" y="322" width="4" height="4" fill="#ff7210"/><rect x="661" y="322" width="6" height="5" fill="#ff7210"/><rect x="939" y="316" width="6" height="4" fill="#ff7210"/><rect x="670" y="320" width="6" height="5" fill="#ff7210"/><rect x="629" y="321" width="5" height="5" fill="#ff7210"/><rect x="909" y="325" width="7" height="3" fill="#ff7210"/><rect x="795" y="319" width="6" height="5" fill="#ff7210"/><rect x="926" y="318" width="2" height="2" fill="#ff7210"/><rect x="680" y="322" width="7" height="4" fill="#ff7210"/><rect x="710" y="317" width="4" height="2" fill="#ff7210"/><rect x="716" y="318" width="4" height="3" fill="#ff7210"/><rect x="633" y="315" width="2" height="2" fill="#ff7210"/><rect x="666" y="319" width="7" height="2" fill="#ff7210"/><rect x="891" y="316" width="7" height="4" fill="#ff7210"/><rect x="693" y="324" width="3" height="5" fill="#ff7210"/><rect x="576" y="324" width="6" height="4" fill="#ff7210"/><rect x="650" y="316" width="6" height="4" fill="#ff7210"/><rect x="811" y="324" width="5" height="5" fill="#ff7210"/><rect x="879" y="324" width="7" height="3" fill="#ff7210"/><rect x="700" y="322" width="3" height="4" fill="#ff7210"/><rect x="747" y="315" width="5" height="2" fill="#ff7210"/><rect x="856" y="321" width="6" height="2" fill="#ff7210"/><rect x="688" y="321" width="5" height="5" fill="#ff7210"/><rect x="866" y="319" width="7" height="3" fill="#ff7210"/><rect x="583" y="316" width="7" height="4" fill="#ff7210"/><rect x="743" y="317" width="6" height="2" fill="#ff7210"/><rect x="660" y="314" width="4" height="4" fill="#ff7210"/><rect x="572" y="318" width="5" height="3" fill="#ff7210"/><rect x="631" y="316" width="2" height="5" fill="#ff7210"/><rect x="684" y="324" width="6" height="5" fill="#ff7210"/><rect x="722" y="318" width="6" height="4" fill="#ff7210"/><rect x="734" y="320" width="3" height="4" fill="#ff7210"/><rect x="678" y="318" width="7" height="2" fill="#ff7210"/><rect x="674" y="316" width="6" height="5" fill="#ff7210"/><rect x="847" y="319" width="5" height="3" fill="#ff7210"/><rect x="594" y="317" width="4" height="5" fill="#ff7210"/><rect x="581" y="317" width="4" height="2" fill="#ff7210"/><rect x="571" y="316" width="5" height="2" fill="#ff7210"/><rect x="779" y="324" width="5" height="2" fill="#ff7210"/><rect x="592" y="322" width="3" height="5" fill="#ff7210"/><rect x="920" y="321" width="4" height="2" fill="#ff7210"/><rect x="649" y="321" width="3" height="2" fill="#ff7210"/><rect x="854" y="318" width="6" height="2" fill="#ff7210"/><rect x="665" y="323" width="7" height="3" fill="#ff7210"/><rect x="588" y="314" width="7" height="3" fill="#ff7210"/><rect x="806" y="322" width="5" height="4" fill="#ff7210"/><rect x="907" y="322" width="4" height="2" fill="#ff7210"/><rect x="920" y="314" width="6" height="4" fill="#ff7210"/><rect x="898" y="321" width="5" height="3" fill="#ff7210"/><rect x="753" y="325" width="3" height="4" fill="#ff7210"/><rect x="913" y="321" width="2" height="4" fill="#ff7210"/><rect x="829" y="318" width="7" height="2" fill="#ff7210"/><rect x="919" y="318" width="2" height="2" fill="#ff7210"/><rect x="752" y="318" width="6" height="4" fill="#ff7210"/><rect x="610" y="318" width="6" height="4" fill="#ff7210"/><rect x="713" y="324" width="7" height="3" fill="#ff7210"/><rect x="755" y="319" width="7" height="3" fill="#ff7210"/><rect x="638" y="322" width="2" height="2" fill="#ff7210"/><rect x="638" y="319" width="5" height="5" fill="#ff7210"/><rect x="854" y="322" width="2" height="4" fill="#ff7210"/><rect x="622" y="316" width="2" height="2" fill="#ff7210"/><rect x="897" y="318" width="2" height="2" fill="#ff7210"/><rect x="886" y="321" width="2" height="2" fill="#ff7210"/><rect x="674" y="316" width="2" height="5" fill="#ff7210"/><rect x="594" y="320" width="2" height="3" fill="#ff7210"/><rect x="721" y="318" width="7" height="2" fill="#ff7210"/><rect x="568" y="317" width="6" height="2" fill="#ff7210"/><rect x="871" y="324" width="5" height="5" fill="#ff7210"/><rect x="771" y="324" width="3" height="3" fill="#ff7210"/><rect x="868" y="324" width="7" height="2" fill="#ff7210"/><rect x="666" y="317" width="3" height="2" fill="#ff7210"/><rect x="803" y="324" width="4" height="4" fill="#ff7210"/><rect x="777" y="315" width="5" height="4" fill="#ff7210"/><rect x="944" y="323" width="7" height="4" fill="#ff7210"/><rect x="664" y="319" width="2" height="3" fill="#ff7210"/><rect x="730" y="320" width="3" height="4" fill="#ff7210"/><rect x="638" y="319" width="2" height="4" fill="#ff7210"/><rect x="704" y="322" width="3" height="4" fill="#ff7210"/><rect x="710" y="321" width="7" height="2" fill="#ff7210"/><rect x="566" y="314" width="4" height="4" fill="#ff7210"/><rect x="941" y="321" width="2" height="5" fill="#ff7210"/><rect x="869" y="316" width="5" height="5" fill="#ff7210"/><rect x="667" y="320" width="3" height="4" fill="#ff7210"/><rect x="770" y="321" width="7" height="3" fill="#ff7210"/><rect x="799" y="316" width="2" height="5" fill="#ff7210"/><rect x="885" y="320" width="3" height="4" fill="#ff7210"/><rect x="706" y="324" width="3" height="5" fill="#ff7210"/><rect x="824" y="320" width="4" height="2" fill="#ff7210"/><rect x="809" y="314" width="3" height="2" fill="#ff7210"/><rect x="788" y="323" width="3" height="4" fill="#ff7210"/><rect x="601" y="322" width="4" height="2" fill="#ff7210"/><rect x="820" y="322" width="5" height="3" fill="#ff7210"/><rect x="822" y="325" width="4" height="5" fill="#ff7210"/><rect x="805" y="319" width="2" height="5" fill="#ff7210"/><rect x="888" y="319" width="6" height="3" fill="#ff7210"/><rect x="588" y="315" width="6" height="4" fill="#ff7210"/><rect x="940" y="323" width="4" height="2" fill="#ff7210"/><rect x="796" y="319" width="4" height="5" fill="#ff7210"/><rect x="917" y="322" width="4" height="2" fill="#ff7210"/><rect x="584" y="318" width="2" height="3" fill="#ff7210"/><rect x="622" y="319" width="6" height="3" fill="#ff7210"/><rect x="734" y="317" width="4" height="5" fill="#ff7210"/><rect x="841" y="314" width="3" height="5" fill="#ff7210"/><rect x="616" y="315" width="7" height="2" fill="#ff7210"/><rect x="647" y="319" width="6" height="2" fill="#ff7210"/><rect x="920" y="318" width="3" height="5" fill="#ff7210"/><rect x="607" y="314" width="7" height="4" fill="#ff7210"/><rect x="718" y="324" width="3" height="2" fill="#ff7210"/><rect x="744" y="317" width="5" height="3" fill="#ff7210"/><rect x="724" y="316" width="5" height="3" fill="#ff7210"/><rect x="589" y="319" width="2" height="3" fill="#ff7210"/><rect x="885" y="320" width="6" height="4" fill="#ff7210"/><rect x="631" y="320" width="3" height="4" fill="#ff7210"/><rect x="693" y="319" width="7" height="3" fill="#ff7210"/><rect x="590" y="320" width="3" height="3" fill="#ff7210"/><rect x="878" y="319" width="7" height="5" fill="#ff7210"/><rect x="641" y="315" width="3" height="3" fill="#ff7210"/><rect x="600" y="320" width="6" height="5" fill="#ff7210"/><rect x="655" y="325" width="5" height="4" fill="#ff7210"/><rect x="811" y="318" width="4" height="4" fill="#ff7210"/><rect x="885" y="318" width="7" height="2" fill="#ff7210"/><rect x="711" y="320" width="3" height="4" fill="#ff7210"/><rect x="806" y="322" width="7" height="2" fill="#ff7210"/><rect x="860" y="319" width="2" height="2" fill="#ff7210"/><rect x="830" y="324" width="4" height="5" fill="#ff7210"/><rect x="681" y="319" width="3" height="4" fill="#ff7210"/><rect x="638" y="315" width="2" height="2" fill="#ff7210"/><rect x="658" y="319" width="5" height="4" fill="#ff7210"/><rect x="579" y="319" width="4" height="4" fill="#ff7210"/><rect x="702" y="324" width="7" height="2" fill="#ff7210"/><rect x="695" y="321" width="3" height="2" fill="#ff7210"/><rect x="634" y="321" width="4" height="4" fill="#ff7210"/><rect x="905" y="325" width="5" height="2" fill="#ff7210"/><rect x="616" y="317" width="2" height="3" fill="#ff7210"/><rect x="871" y="322" width="7" height="5" fill="#ff7210"/><rect x="875" y="322" width="3" height="4" fill="#ff7210"/><rect x="732" y="319" width="6" height="4" fill="#ff7210"/><rect x="605" y="318" width="5" height="2" fill="#ff7210"/><rect x="773" y="315" width="3" height="2" fill="#ff7210"/><rect x="667" y="322" width="6" height="3" fill="#ff7210"/><rect x="690" y="321" width="5" height="5" fill="#ff7210"/><rect x="663" y="321" width="2" height="3" fill="#ff7210"/><rect x="780" y="320" width="5" height="2" fill="#ff7210"/><rect x="882" y="318" width="3" height="5" fill="#ff7210"/><rect x="633" y="322" width="5" height="3" fill="#ff7210"/><rect x="704" y="319" width="2" height="2" fill="#ff7210"/><rect x="885" y="324" width="2" height="3" fill="#ff7210"/><rect x="811" y="322" width="4" height="5" fill="#ff7210"/><rect x="576" y="323" width="5" height="4" fill="#ff7210"/><rect x="624" y="320" width="6" height="4" fill="#ff7210"/><rect x="774" y="324" width="7" height="3" fill="#ff7210"/><rect x="577" y="317" width="4" height="2" fill="#ff7210"/><rect x="863" y="315" width="7" height="5" fill="#ff7210"/><rect x="633" y="315" width="2" height="5" fill="#ff7210"/><rect x="636" y="323" width="2" height="3" fill="#ff7210"/><rect x="709" y="319" width="2" height="4" fill="#ff7210"/><rect x="737" y="318" width="5" height="2" fill="#ff7210"/><rect x="919" y="315" width="4" height="4" fill="#ff7210"/><rect x="631" y="325" width="3" height="3" fill="#ff7210"/><rect x="739" y="324" width="2" height="4" fill="#ff7210"/><rect x="599" y="319" width="6" height="2" fill="#ff7210"/><rect x="678" y="324" width="5" height="5" fill="#ff7210"/><rect x="791" y="323" width="2" height="5" fill="#ff7210"/><rect x="719" y="321" width="5" height="3" fill="#ff7210"/><rect x="590" y="315" width="5" height="4" fill="#ff7210"/><rect x="717" y="320" width="4" height="4" fill="#ff7210"/><rect x="738" y="314" width="6" height="5" fill="#ff7210"/><rect x="601" y="321" width="2" height="4" fill="#ff7210"/><rect x="625" y="317" width="5" height="2" fill="#ff7210"/><rect x="702" y="319" width="6" height="3" fill="#ff7210"/><rect x="724" y="318" width="6" height="5" fill="#ff7210"/><rect x="696" y="322" width="6" height="5" fill="#ff7210"/><rect x="821" y="319" width="6" height="2" fill="#ff7210"/><rect x="793" y="315" width="2" height="3" fill="#ff7210"/><rect x="621" y="322" width="5" height="2" fill="#ff7210"/><rect x="876" y="319" width="4" height="3" fill="#ff7210"/><rect x="898" y="323" width="4" height="2" fill="#ff7210"/><rect x="834" y="322" width="2" height="2" fill="#ff7210"/><rect x="733" y="317" width="3" height="2" fill="#ff7210"/><rect x="919" y="315" width="5" height="3" fill="#ff7210"/><rect x="775" y="320" width="3" height="4" fill="#ff7210"/><rect x="721" y="319" width="5" height="3" fill="#ff7210"/><rect x="921" y="324" width="6" height="3" fill="#ff7210"/><rect x="641" y="324" width="5" height="4" fill="#ff7210"/><rect x="684" y="314" width="2" height="3" fill="#ff7210"/><rect x="815" y="315" width="2" height="2" fill="#ff7210"/><rect x="773" y="319" width="4" height="5" fill="#ff7210"/><rect x="848" y="322" width="6" height="4" fill="#ff7210"/><rect x="846" y="315" width="4" height="3" fill="#ff7210"/><rect x="652" y="325" width="2" height="5" fill="#ff7210"/><rect x="780" y="315" width="7" height="2" fill="#ff7210"/><rect x="715" y="320" width="5" height="2" fill="#ff7210"/><rect x="889" y="316" width="4" height="5" fill="#ff7210"/><rect x="588" y="325" width="5" height="5" fill="#ff7210"/><rect x="923" y="316" width="5" height="2" fill="#ff7210"/><rect x="567" y="318" width="3" height="3" fill="#ff7210"/><rect x="650" y="319" width="7" height="3" fill="#ff7210"/><rect x="819" y="322" width="3" height="4" fill="#ff7210"/><rect x="700" y="318" width="2" height="4" fill="#ff7210"/><rect x="887" y="320" width="2" height="5" fill="#ff7210"/><rect x="871" y="325" width="5" height="5" fill="#ff7210"/><rect x="793" y="321" width="3" height="4" fill="#ff7210"/><rect x="590" y="321" width="4" height="5" fill="#ff7210"/><rect x="790" y="323" width="6" height="3" fill="#ff7210"/><rect x="906" y="321" width="7" height="2" fill="#ff7210"/><rect x="913" y="315" width="6" height="5" fill="#ff7210"/><rect x="670" y="322" width="2" height="4" fill="#ff7210"/><rect x="847" y="315" width="6" height="5" fill="#ff7210"/><rect x="869" y="318" width="7" height="3" fill="#ff7210"/><rect x="652" y="314" width="4" height="5" fill="#ff7210"/><rect x="694" y="323" width="6" height="4" fill="#ff7210"/><rect x="591" y="318" width="4" height="3" fill="#ff7210"/><rect x="846" y="315" width="3" height="3" fill="#ff7210"/><rect x="883" y="325" width="6" height="3" fill="#ff7210"/><rect x="802" y="321" width="3" height="5" fill="#ff7210"/><rect x="759" y="317" width="5" height="5" fill="#ff7210"/><rect x="844" y="314" width="2" height="3" fill="#ff7210"/><rect x="680" y="321" width="4" height="3" fill="#ff7210"/><rect x="907" y="318" width="6" height="2" fill="#ff7210"/><rect x="603" y="324" width="3" height="3" fill="#ff7210"/><rect x="878" y="315" width="7" height="5" fill="#ff7210"/><rect x="753" y="319" width="4" height="2" fill="#ff7210"/><rect x="916" y="321" width="2" height="4" fill="#ff7210"/><rect x="831" y="318" width="6" height="3" fill="#ff7210"/>
<rect x="590" y="292" width="4" height="7" fill="#ff7210"/><rect x="588" y="281" width="4" height="3" fill="#ff7210"/><rect x="595" y="166" width="2" height="6" fill="#ff7210"/><rect x="584" y="177" width="2" height="7" fill="#ff7210"/><rect x="591" y="312" width="4" height="4" fill="#ff7210"/><rect x="584" y="152" width="2" height="3" fill="#ff7210"/><rect x="591" y="220" width="4" height="4" fill="#ff7210"/><rect x="590" y="167" width="2" height="4" fill="#ff7210"/><rect x="586" y="171" width="4" height="7" fill="#ff7210"/><rect x="586" y="176" width="5" height="2" fill="#ff7210"/><rect x="590" y="158" width="4" height="3" fill="#ff7210"/><rect x="585" y="266" width="2" height="4" fill="#ff7210"/><rect x="594" y="157" width="5" height="3" fill="#ff7210"/><rect x="584" y="240" width="2" height="3" fill="#ff7210"/><rect x="584" y="275" width="5" height="2" fill="#ff7210"/><rect x="590" y="290" width="4" height="2" fill="#ff7210"/><rect x="590" y="271" width="3" height="7" fill="#ff7210"/><rect x="586" y="183" width="5" height="4" fill="#ff7210"/><rect x="590" y="164" width="4" height="5" fill="#ff7210"/><rect x="590" y="158" width="5" height="7" fill="#ff7210"/><rect x="596" y="189" width="2" height="7" fill="#ff7210"/><rect x="595" y="185" width="2" height="3" fill="#ff7210"/><rect x="589" y="208" width="5" height="5" fill="#ff7210"/><rect x="595" y="151" width="4" height="3" fill="#ff7210"/><rect x="591" y="259" width="3" height="6" fill="#ff7210"/><rect x="589" y="217" width="2" height="7" fill="#ff7210"/><rect x="592" y="287" width="5" height="3" fill="#ff7210"/><rect x="594" y="287" width="3" height="4" fill="#ff7210"/><rect x="586" y="225" width="5" height="5" fill="#ff7210"/><rect x="596" y="199" width="5" height="4" fill="#ff7210"/><rect x="594" y="307" width="4" height="4" fill="#ff7210"/><rect x="596" y="301" width="3" height="6" fill="#ff7210"/><rect x="588" y="319" width="5" height="5" fill="#ff7210"/><rect x="593" y="295" width="5" height="6" fill="#ff7210"/><rect x="593" y="311" width="2" height="6" fill="#ff7210"/><rect x="594" y="265" width="2" height="3" fill="#ff7210"/><rect x="590" y="261" width="2" height="3" fill="#ff7210"/><rect x="594" y="253" width="5" height="6" fill="#ff7210"/><rect x="594" y="306" width="2" height="2" fill="#ff7210"/><rect x="588" y="165" width="3" height="6" fill="#ff7210"/><rect x="586" y="157" width="4" height="5" fill="#ff7210"/><rect x="589" y="185" width="5" height="2" fill="#ff7210"/><rect x="593" y="298" width="3" height="7" fill="#ff7210"/><rect x="588" y="208" width="3" height="6" fill="#ff7210"/><rect x="595" y="277" width="4" height="7" fill="#ff7210"/><rect x="586" y="183" width="3" height="6" fill="#ff7210"/><rect x="585" y="244" width="2" height="4" fill="#ff7210"/><rect x="587" y="168" width="2" height="6" fill="#ff7210"/><rect x="586" y="166" width="3" height="5" fill="#ff7210"/><rect x="585" y="300" width="2" height="7" fill="#ff7210"/><rect x="591" y="309" width="3" height="6" fill="#ff7210"/><rect x="584" y="252" width="4" height="3" fill="#ff7210"/><rect x="594" y="272" width="3" height="7" fill="#ff7210"/><rect x="586" y="169" width="3" height="6" fill="#ff7210"/><rect x="590" y="253" width="2" height="7" fill="#ff7210"/><rect x="590" y="244" width="3" height="4" fill="#ff7210"/><rect x="590" y="202" width="2" height="4" fill="#ff7210"/><rect x="590" y="238" width="5" height="5" fill="#ff7210"/><rect x="595" y="254" width="3" height="7" fill="#ff7210"/><rect x="594" y="150" width="2" height="3" fill="#ff7210"/>
<rect x="939" y="268" width="3" height="5" fill="#c8f830"/><rect x="939" y="201" width="2" height="6" fill="#ff7210"/><rect x="936" y="167" width="2" height="6" fill="#c8f830"/><rect x="938" y="282" width="2" height="4" fill="#c8f830"/><rect x="940" y="235" width="3" height="6" fill="#ff7210"/><rect x="937" y="175" width="3" height="5" fill="#c8f830"/><rect x="939" y="216" width="1" height="2" fill="#ff7210"/><rect x="937" y="279" width="3" height="3" fill="#c8f830"/><rect x="942" y="234" width="3" height="7" fill="#c8f830"/><rect x="939" y="246" width="1" height="7" fill="#ff7210"/><rect x="937" y="317" width="2" height="7" fill="#ff7210"/><rect x="937" y="257" width="2" height="3" fill="#ff7210"/><rect x="941" y="180" width="3" height="3" fill="#ff7210"/><rect x="939" y="188" width="2" height="2" fill="#c8f830"/><rect x="934" y="318" width="2" height="2" fill="#c8f830"/><rect x="942" y="297" width="2" height="5" fill="#c8f830"/><rect x="941" y="170" width="3" height="5" fill="#ff7210"/><rect x="940" y="253" width="2" height="3" fill="#c8f830"/><rect x="937" y="239" width="3" height="2" fill="#ff7210"/><rect x="938" y="200" width="1" height="5" fill="#ff7210"/><rect x="936" y="190" width="2" height="6" fill="#c8f830"/><rect x="938" y="260" width="3" height="3" fill="#ff7210"/>
<rect x="800" y="267" width="3" height="2" fill="#40f0c0"/><rect x="662" y="272" width="2" height="2" fill="#40f0c0"/><rect x="796" y="256" width="2" height="2" fill="#40f0c0"/><rect x="718" y="248" width="3" height="3" fill="#40f0c0"/><rect x="778" y="316" width="3" height="1" fill="#a8f070"/><rect x="701" y="165" width="3" height="1" fill="#40f0c0"/><rect x="932" y="286" width="2" height="1" fill="#40f0c0"/><rect x="573" y="172" width="1" height="3" fill="#a8f070"/><rect x="714" y="229" width="3" height="3" fill="#a8f070"/><rect x="789" y="309" width="3" height="3" fill="#a8f070"/><rect x="746" y="208" width="3" height="1" fill="#40f0c0"/><rect x="915" y="230" width="1" height="1" fill="#40f0c0"/><rect x="851" y="231" width="1" height="3" fill="#a8f070"/><rect x="601" y="186" width="1" height="2" fill="#40f0c0"/><rect x="826" y="184" width="3" height="3" fill="#40f0c0"/><rect x="850" y="324" width="2" height="1" fill="#40f0c0"/><rect x="738" y="235" width="1" height="2" fill="#a8f070"/><rect x="847" y="323" width="1" height="1" fill="#a8f070"/><rect x="582" y="147" width="2" height="3" fill="#40f0c0"/><rect x="690" y="227" width="3" height="3" fill="#a8f070"/><rect x="734" y="240" width="3" height="2" fill="#a8f070"/><rect x="573" y="291" width="1" height="1" fill="#a8f070"/><rect x="636" y="245" width="2" height="1" fill="#40f0c0"/><rect x="730" y="291" width="3" height="2" fill="#40f0c0"/><rect x="857" y="232" width="2" height="2" fill="#a8f070"/><rect x="719" y="283" width="2" height="3" fill="#40f0c0"/><rect x="686" y="238" width="2" height="2" fill="#a8f070"/><rect x="858" y="143" width="2" height="2" fill="#a8f070"/><rect x="739" y="249" width="2" height="1" fill="#a8f070"/><rect x="687" y="237" width="3" height="3" fill="#40f0c0"/><rect x="763" y="209" width="3" height="1" fill="#40f0c0"/><rect x="752" y="188" width="2" height="2" fill="#40f0c0"/><rect x="596" y="207" width="3" height="3" fill="#a8f070"/><rect x="715" y="297" width="3" height="1" fill="#a8f070"/><rect x="909" y="319" width="2" height="3" fill="#a8f070"/><rect x="855" y="233" width="1" height="1" fill="#40f0c0"/><rect x="592" y="185" width="3" height="1" fill="#40f0c0"/><rect x="758" y="288" width="3" height="1" fill="#a8f070"/><rect x="651" y="283" width="2" height="3" fill="#40f0c0"/><rect x="740" y="258" width="3" height="3" fill="#40f0c0"/>
<rect x="693" y="174" width="3" height="4" fill="#ff7a10"/>
<rect x="798" y="168" width="3" height="6" fill="#ff8a10"/>
<rect x="742" y="171" width="3" height="4" fill="#ff7a10"/>
<rect x="731" y="167" width="2" height="6" fill="#ff7a10"/>
<rect x="722" y="171" width="2" height="2" fill="#ff7a10"/>
<rect x="731" y="173" width="2" height="2" fill="#b0f070"/>
<rect x="685" y="164" width="1" height="6" fill="#ff8a10"/>
<rect x="774" y="168" width="2" height="6" fill="#ff7a10"/>
<rect x="720" y="178" width="2" height="3" fill="#ff8a10"/>
<rect x="752" y="164" width="2" height="2" fill="#ff7a10"/>
<rect x="721" y="164" width="1" height="2" fill="#ff7a10"/>
<rect x="748" y="165" width="1" height="3" fill="#ff7a10"/>
<rect x="768" y="167" width="3" height="6" fill="#ff8a10"/>
<rect x="751" y="166" width="3" height="2" fill="#b0f070"/>
<rect x="746" y="173" width="3" height="4" fill="#ff7a10"/>
<rect x="693" y="172" width="3" height="6" fill="#ff8a10"/>
<rect x="720" y="163" width="2" height="5" fill="#ff7a10"/>
<rect x="687" y="165" width="1" height="6" fill="#ff7a10"/>
<rect x="742" y="167" width="2" height="5" fill="#ff7a10"/>
<rect x="769" y="169" width="1" height="3" fill="#ff8a10"/>
<rect x="701" y="162" width="3" height="4" fill="#ff7a10"/>
<rect x="723" y="167" width="1" height="4" fill="#ff8a10"/>
<rect x="727" y="168" width="2" height="3" fill="#ff7a10"/>
<rect x="709" y="174" width="2" height="5" fill="#ff7a10"/>
<rect x="708" y="164" width="2" height="4" fill="#ff7a10"/>
<rect x="753" y="174" width="2" height="3" fill="#ff7a10"/>
<rect x="740" y="166" width="2" height="4" fill="#b0f070"/>
<rect x="743" y="173" width="1" height="3" fill="#ff7a10"/>
<rect x="731" y="170" width="2" height="4" fill="#ff7a10"/>
<rect x="669" y="175" width="1" height="5" fill="#ff7a10"/>
<rect x="801" y="163" width="2" height="3" fill="#ff8a10"/>
<rect x="735" y="169" width="3" height="4" fill="#b0f070"/>
<rect x="739" y="169" width="2" height="2" fill="#b0f070"/>
<rect x="790" y="169" width="1" height="2" fill="#ff7a10"/>
<rect x="766" y="167" width="3" height="6" fill="#ff7a10"/>
<rect x="678" y="175" width="2" height="3" fill="#ff7a10"/>
<rect x="684" y="167" width="2" height="4" fill="#ff7a10"/>
<rect x="744" y="175" width="3" height="2" fill="#ff7a10"/>
<rect x="707" y="163" width="3" height="2" fill="#ff8a10"/>
<rect x="760" y="170" width="2" height="3" fill="#ff7a10"/>
<rect x="702" y="173" width="2" height="2" fill="#ff8a10"/>
<rect x="744" y="158" width="3" height="2" fill="#b0f070"/>
<rect x="756" y="170" width="2" height="3" fill="#ff7a10"/>
<rect x="709" y="171" width="3" height="6" fill="#ff7a10"/>
<rect x="737" y="170" width="1" height="5" fill="#ff7a10"/>
<rect x="749" y="167" width="2" height="6" fill="#ff8a10"/>
<rect x="775" y="163" width="2" height="4" fill="#b0f070"/>
<rect x="695" y="167" width="3" height="3" fill="#b0f070"/>
<rect x="798" y="176" width="2" height="5" fill="#ff8a10"/>
<rect x="766" y="170" width="1" height="5" fill="#b0f070"/>
<rect x="732" y="172" width="2" height="6" fill="#ff7a10"/>
<rect x="724" y="174" width="2" height="2" fill="#ff7a10"/>
<rect x="703" y="175" width="2" height="6" fill="#ff7a10"/>
<rect x="698" y="167" width="1" height="6" fill="#b0f070"/>
<rect x="754" y="162" width="1" height="4" fill="#b0f070"/>
<rect x="620" y="227" width="2" height="5" fill="#b0f070"/>
<rect x="629" y="266" width="3" height="3" fill="#ff8a10"/>
<rect x="635" y="252" width="3" height="4" fill="#ff8a10"/>
<rect x="631" y="194" width="2" height="5" fill="#b0f070"/>
<rect x="627" y="219" width="3" height="5" fill="#ff7a10"/>
<rect x="623" y="256" width="3" height="3" fill="#ff7a10"/>
<rect x="601" y="235" width="1" height="2" fill="#ff8a10"/>
<rect x="629" y="223" width="1" height="5" fill="#ff7a10"/>
<rect x="612" y="268" width="2" height="6" fill="#ff7a10"/>
<rect x="640" y="215" width="2" height="3" fill="#b0f070"/>
<rect x="636" y="233" width="3" height="3" fill="#b0f070"/>
<rect x="630" y="253" width="2" height="3" fill="#ff7a10"/>
<rect x="612" y="268" width="1" height="3" fill="#ff7a10"/>
<rect x="623" y="212" width="2" height="3" fill="#ff7a10"/>
<rect x="615" y="222" width="3" height="4" fill="#ff7a10"/>
<rect x="625" y="243" width="3" height="6" fill="#ff7a10"/>
<rect x="646" y="254" width="1" height="2" fill="#ff8a10"/>
<rect x="637" y="260" width="2" height="6" fill="#ff7a10"/>
<rect x="615" y="225" width="1" height="3" fill="#ff7a10"/>
<rect x="653" y="251" width="2" height="3" fill="#b0f070"/>
<rect x="626" y="234" width="1" height="4" fill="#ff7a10"/>
<rect x="625" y="221" width="1" height="5" fill="#ff7a10"/>
<rect x="636" y="251" width="1" height="4" fill="#ff7a10"/>
<rect x="620" y="233" width="3" height="6" fill="#b0f070"/>
<rect x="609" y="240" width="3" height="4" fill="#ff8a10"/>
<rect x="618" y="239" width="2" height="5" fill="#ff7a10"/>
<rect x="628" y="223" width="2" height="6" fill="#ff8a10"/>
<rect x="644" y="229" width="1" height="3" fill="#b0f070"/>
<rect x="656" y="228" width="2" height="4" fill="#ff8a10"/>
<rect x="660" y="255" width="3" height="3" fill="#ff7a10"/>
<rect x="602" y="204" width="1" height="4" fill="#b0f070"/>
<rect x="631" y="226" width="1" height="4" fill="#b0f070"/>
<rect x="616" y="240" width="3" height="6" fill="#ff8a10"/>
<rect x="610" y="224" width="1" height="5" fill="#ff8a10"/>
<rect x="620" y="239" width="1" height="3" fill="#ff8a10"/>
<rect x="636" y="251" width="2" height="5" fill="#ff8a10"/>
<rect x="671" y="233" width="1" height="6" fill="#b0f070"/>
<rect x="625" y="262" width="1" height="6" fill="#ff8a10"/>
<rect x="624" y="207" width="3" height="6" fill="#ff7a10"/>
<rect x="630" y="221" width="2" height="4" fill="#ff7a10"/>
<rect x="633" y="243" width="1" height="5" fill="#ff8a10"/>
<rect x="633" y="218" width="2" height="4" fill="#ff7a10"/>
<rect x="638" y="235" width="2" height="4" fill="#ff7a10"/>
<rect x="611" y="228" width="2" height="5" fill="#ff8a10"/>
<rect x="629" y="219" width="1" height="4" fill="#b0f070"/>
<rect x="638" y="241" width="2" height="2" fill="#ff8a10"/>
<rect x="632" y="239" width="1" height="5" fill="#ff7a10"/>
<rect x="659" y="223" width="3" height="4" fill="#ff7a10"/>
<rect x="624" y="244" width="1" height="3" fill="#b0f070"/>
<rect x="617" y="232" width="1" height="6" fill="#ff7a10"/>
<rect x="613" y="246" width="3" height="6" fill="#ff7a10"/>
<rect x="620" y="241" width="1" height="2" fill="#b0f070"/>
<rect x="636" y="231" width="3" height="6" fill="#ff8a10"/>
<rect x="628" y="245" width="1" height="6" fill="#ff7a10"/>
<rect x="644" y="237" width="3" height="2" fill="#ff7a10"/>
<rect x="613" y="243" width="3" height="6" fill="#b0f070"/>
<rect x="632" y="253" width="1" height="6" fill="#ff7a10"/>
<rect x="634" y="240" width="3" height="6" fill="#ff8a10"/>
<rect x="631" y="257" width="2" height="5" fill="#ff7a10"/>
<rect x="711" y="247" width="1" height="3" fill="#b0f070"/>
<rect x="743" y="271" width="1" height="5" fill="#ff7a10"/>
<rect x="728" y="198" width="3" height="5" fill="#ff7a10"/>
<rect x="774" y="241" width="1" height="6" fill="#ff7a10"/>
<rect x="743" y="235" width="1" height="2" fill="#ff8a10"/>
<rect x="769" y="269" width="3" height="3" fill="#ff7a10"/>
<rect x="776" y="207" width="1" height="4" fill="#ff8a10"/>
<rect x="719" y="235" width="2" height="6" fill="#ff7a10"/>
<rect x="724" y="258" width="2" height="2" fill="#ff7a10"/>
<rect x="742" y="240" width="1" height="4" fill="#ff7a10"/>
<rect x="718" y="251" width="3" height="2" fill="#b0f070"/>
<rect x="731" y="257" width="2" height="2" fill="#ff7a10"/>
<rect x="751" y="244" width="3" height="5" fill="#ff7a10"/>
<rect x="762" y="289" width="1" height="5" fill="#b0f070"/>
<rect x="722" y="271" width="1" height="4" fill="#ff7a10"/>
<rect x="752" y="225" width="1" height="5" fill="#b0f070"/>
<rect x="792" y="265" width="2" height="5" fill="#b0f070"/>
<rect x="757" y="238" width="3" height="2" fill="#ff7a10"/>
<rect x="735" y="213" width="3" height="5" fill="#ff8a10"/>
<rect x="781" y="202" width="2" height="6" fill="#ff7a10"/>
<rect x="779" y="238" width="1" height="2" fill="#ff8a10"/>
<rect x="734" y="237" width="2" height="5" fill="#ff7a10"/>
<rect x="746" y="255" width="2" height="5" fill="#b0f070"/>
<rect x="712" y="282" width="2" height="4" fill="#ff7a10"/>
<rect x="721" y="238" width="3" height="3" fill="#ff8a10"/>
<rect x="737" y="233" width="3" height="5" fill="#ff7a10"/>
<rect x="772" y="217" width="1" height="3" fill="#ff7a10"/>
<rect x="761" y="281" width="1" height="6" fill="#b0f070"/>
<rect x="769" y="237" width="1" height="6" fill="#ff7a10"/>
<rect x="764" y="247" width="1" height="6" fill="#ff7a10"/>
<rect x="755" y="227" width="2" height="4" fill="#ff7a10"/>
<rect x="777" y="191" width="1" height="4" fill="#ff7a10"/>
<rect x="804" y="235" width="2" height="4" fill="#ff7a10"/>
<rect x="779" y="239" width="3" height="6" fill="#ff8a10"/>
<rect x="746" y="254" width="1" height="5" fill="#b0f070"/>
<rect x="760" y="235" width="3" height="2" fill="#ff7a10"/>
<rect x="729" y="263" width="1" height="2" fill="#ff8a10"/>
<rect x="762" y="212" width="2" height="3" fill="#b0f070"/>
<rect x="786" y="231" width="3" height="2" fill="#ff7a10"/>
<rect x="654" y="226" width="1" height="3" fill="#ff8a10"/>
<rect x="743" y="268" width="3" height="3" fill="#ff7a10"/>
<rect x="710" y="228" width="1" height="2" fill="#ff7a10"/>
<rect x="741" y="263" width="2" height="6" fill="#ff7a10"/>
<rect x="750" y="243" width="1" height="6" fill="#ff7a10"/>
<rect x="705" y="241" width="1" height="6" fill="#ff8a10"/>
<rect x="764" y="234" width="3" height="3" fill="#ff7a10"/>
<rect x="742" y="247" width="3" height="3" fill="#ff7a10"/>
<rect x="744" y="226" width="1" height="5" fill="#ff8a10"/>
<rect x="772" y="255" width="3" height="5" fill="#ff7a10"/>
<rect x="792" y="264" width="1" height="6" fill="#b0f070"/>
<rect x="781" y="262" width="1" height="2" fill="#ff7a10"/>
<rect x="786" y="230" width="2" height="5" fill="#ff7a10"/>
<rect x="756" y="220" width="1" height="4" fill="#ff7a10"/>
<rect x="759" y="257" width="2" height="5" fill="#b0f070"/>
<rect x="737" y="235" width="1" height="6" fill="#ff7a10"/>
<rect x="771" y="225" width="2" height="2" fill="#b0f070"/>
<rect x="758" y="253" width="1" height="4" fill="#ff7a10"/>
<rect x="767" y="269" width="1" height="3" fill="#ff7a10"/>
<rect x="784" y="220" width="1" height="2" fill="#ff7a10"/>
<rect x="758" y="245" width="3" height="6" fill="#b0f070"/>
<rect x="785" y="211" width="1" height="2" fill="#ff7a10"/>
<rect x="783" y="247" width="2" height="4" fill="#ff7a10"/>
<rect x="735" y="269" width="1" height="6" fill="#ff7a10"/>
<rect x="744" y="248" width="3" height="4" fill="#ff7a10"/>
<rect x="745" y="261" width="1" height="2" fill="#ff7a10"/>
<rect x="742" y="212" width="2" height="2" fill="#ff8a10"/>
<rect x="739" y="233" width="1" height="5" fill="#ff8a10"/>
<rect x="774" y="254" width="1" height="6" fill="#ff7a10"/>
<rect x="759" y="245" width="1" height="2" fill="#ff7a10"/>
<rect x="705" y="197" width="3" height="4" fill="#ff7a10"/>
<rect x="802" y="243" width="2" height="6" fill="#b0f070"/>
<rect x="715" y="246" width="3" height="2" fill="#b0f070"/>
<rect x="736" y="234" width="2" height="4" fill="#ff7a10"/>
<rect x="764" y="216" width="3" height="5" fill="#b0f070"/>
<rect x="812" y="284" width="2" height="2" fill="#b0f070"/>
<rect x="716" y="256" width="1" height="6" fill="#b0f070"/>
<rect x="767" y="228" width="2" height="5" fill="#ff7a10"/>
<rect x="740" y="221" width="2" height="6" fill="#ff7a10"/>
<rect x="728" y="265" width="1" height="3" fill="#b0f070"/>
<rect x="814" y="210" width="2" height="5" fill="#b0f070"/>
<rect x="746" y="219" width="2" height="4" fill="#ff7a10"/>
<rect x="776" y="212" width="1" height="6" fill="#ff7a10"/>
<rect x="748" y="231" width="1" height="2" fill="#ff7a10"/>
<rect x="764" y="213" width="2" height="6" fill="#b0f070"/>
<rect x="809" y="234" width="1" height="5" fill="#b0f070"/>
<rect x="677" y="255" width="3" height="2" fill="#b0f070"/>
<rect x="765" y="263" width="2" height="5" fill="#ff8a10"/>
<rect x="824" y="242" width="2" height="5" fill="#ff7a10"/>
<rect x="752" y="237" width="1" height="3" fill="#ff7a10"/>
<rect x="810" y="268" width="1" height="6" fill="#ff7a10"/>
<rect x="714" y="286" width="3" height="3" fill="#b0f070"/>
<rect x="784" y="233" width="1" height="4" fill="#ff8a10"/>
<rect x="760" y="232" width="1" height="5" fill="#ff7a10"/>
<rect x="763" y="240" width="1" height="5" fill="#ff7a10"/>
<rect x="759" y="236" width="3" height="4" fill="#ff8a10"/>
<rect x="755" y="235" width="3" height="2" fill="#ff7a10"/>
<rect x="743" y="231" width="3" height="6" fill="#ff8a10"/>
<rect x="776" y="254" width="3" height="5" fill="#ff8a10"/>
<rect x="753" y="215" width="2" height="6" fill="#ff7a10"/>
<rect x="774" y="222" width="1" height="2" fill="#ff7a10"/>
<rect x="847" y="252" width="2" height="4" fill="#ff8a10"/>
<rect x="827" y="228" width="3" height="4" fill="#ff8a10"/>
<rect x="821" y="269" width="3" height="4" fill="#ff7a10"/>
<rect x="853" y="220" width="1" height="3" fill="#ff8a10"/>
<rect x="829" y="228" width="3" height="4" fill="#ff7a10"/>
<rect x="846" y="251" width="1" height="4" fill="#ff7a10"/>
<rect x="845" y="235" width="3" height="3" fill="#ff7a10"/>
<rect x="847" y="266" width="1" height="4" fill="#ff8a10"/>
<rect x="839" y="242" width="3" height="4" fill="#ff7a10"/>
<rect x="845" y="242" width="2" height="6" fill="#ff8a10"/>
<rect x="839" y="236" width="3" height="6" fill="#ff7a10"/>
<rect x="832" y="250" width="2" height="3" fill="#ff7a10"/>
<rect x="840" y="247" width="3" height="5" fill="#ff8a10"/>
<rect x="831" y="223" width="1" height="6" fill="#ff7a10"/>
<rect x="847" y="245" width="1" height="2" fill="#b0f070"/>
<rect x="842" y="252" width="2" height="2" fill="#ff7a10"/>
<rect x="835" y="242" width="1" height="3" fill="#ff7a10"/>
<rect x="836" y="243" width="1" height="2" fill="#ff7a10"/>
<rect x="829" y="247" width="3" height="4" fill="#ff7a10"/>
<rect x="835" y="210" width="1" height="6" fill="#ff7a10"/>
<rect x="828" y="252" width="2" height="6" fill="#ff7a10"/>
<rect x="846" y="245" width="3" height="4" fill="#b0f070"/>
<rect x="849" y="171" width="1" height="2" fill="#b0f070"/>
<rect x="909" y="167" width="1" height="2" fill="#ff7a10"/>
<rect x="869" y="176" width="1" height="3" fill="#ff7a10"/>
<rect x="892" y="168" width="2" height="5" fill="#ff8a10"/>
<rect x="893" y="157" width="1" height="6" fill="#ff8a10"/>
<rect x="827" y="172" width="3" height="2" fill="#ff7a10"/>
<rect x="884" y="172" width="3" height="3" fill="#ff7a10"/>
<rect x="902" y="184" width="2" height="3" fill="#ff7a10"/>
<rect x="909" y="170" width="1" height="5" fill="#ff7a10"/>
<rect x="837" y="170" width="1" height="2" fill="#b0f070"/>
<rect x="868" y="160" width="1" height="5" fill="#b0f070"/>
<rect x="901" y="153" width="1" height="4" fill="#ff8a10"/>
<rect x="887" y="169" width="1" height="2" fill="#ff7a10"/>
<rect x="863" y="180" width="2" height="2" fill="#ff8a10"/>
<rect x="605" y="165" width="2" height="2" fill="#b0f070"/>
<rect x="603" y="205" width="1" height="2" fill="#ff7a10"/>
<rect x="608" y="193" width="2" height="6" fill="#ff7a10"/>
<rect x="604" y="176" width="3" height="6" fill="#ff7a10"/>
<rect x="593" y="204" width="3" height="2" fill="#ff7a10"/>
<rect x="592" y="195" width="2" height="4" fill="#ff8a10"/>
<rect x="593" y="195" width="3" height="5" fill="#ff7a10"/>
<rect x="598" y="175" width="1" height="2" fill="#ff7a10"/>
<rect x="605" y="238" width="3" height="5" fill="#b0f070"/>
<rect x="598" y="167" width="3" height="5" fill="#ff8a10"/>
<rect x="599" y="158" width="3" height="3" fill="#ff8a10"/>
<rect x="603" y="220" width="3" height="3" fill="#ff7a10"/>
<rect x="610" y="196" width="2" height="4" fill="#b0f070"/>
<rect x="595" y="240" width="1" height="3" fill="#ff8a10"/>
<rect x="598" y="217" width="2" height="2" fill="#b0f070"/>
<rect x="593" y="206" width="2" height="5" fill="#ff7a10"/>
<rect x="595" y="187" width="1" height="6" fill="#b0f070"/>
<rect x="594" y="190" width="1" height="2" fill="#ff7a10"/>
<rect x="594" y="191" width="3" height="3" fill="#b0f070"/>
<rect x="599" y="159" width="3" height="6" fill="#ff7a10"/>
<rect x="596" y="189" width="3" height="5" fill="#ff7a10"/>
<rect x="598" y="165" width="1" height="4" fill="#ff7a10"/>
<rect x="607" y="166" width="3" height="2" fill="#ff7a10"/>
<rect x="593" y="195" width="3" height="3" fill="#ff8a10"/>
<rect x="618" y="302" width="1" height="4" fill="#ff8a10"/>
<rect x="700" y="292" width="2" height="3" fill="#ff7a10"/>
<rect x="755" y="303" width="1" height="6" fill="#b0f070"/>
<rect x="654" y="295" width="2" height="3" fill="#ff7a10"/>
<rect x="611" y="304" width="3" height="3" fill="#ff8a10"/>
<rect x="674" y="307" width="2" height="3" fill="#b0f070"/>
<rect x="647" y="308" width="2" height="5" fill="#ff8a10"/>
<rect x="651" y="299" width="2" height="4" fill="#b0f070"/>
<rect x="682" y="301" width="3" height="2" fill="#ff7a10"/>
<rect x="621" y="298" width="2" height="2" fill="#ff7a10"/>
<rect x="615" y="297" width="1" height="4" fill="#b0f070"/>
<rect x="609" y="295" width="3" height="2" fill="#ff8a10"/>
<rect x="704" y="294" width="2" height="2" fill="#ff7a10"/>
<rect x="769" y="300" width="1" height="2" fill="#ff8a10"/>
<rect x="704" y="303" width="3" height="5" fill="#ff7a10"/>
<rect x="695" y="302" width="3" height="4" fill="#ff8a10"/>
<rect x="730" y="299" width="2" height="5" fill="#ff8a10"/>
<rect x="726" y="294" width="3" height="4" fill="#ff7a10"/>
<rect x="681" y="300" width="1" height="2" fill="#ff7a10"/>
<rect x="726" y="292" width="3" height="5" fill="#b0f070"/>
<rect x="666" y="300" width="2" height="4" fill="#ff8a10"/>
<rect x="670" y="304" width="1" height="5" fill="#ff7a10"/>
<rect x="667" y="298" width="2" height="2" fill="#ff8a10"/>
<rect x="756" y="303" width="2" height="3" fill="#b0f070"/>
<rect x="644" y="292" width="1" height="5" fill="#b0f070"/>
<rect x="690" y="301" width="2" height="3" fill="#ff7a10"/>
<rect x="690" y="288" width="1" height="4" fill="#ff7a10"/>
<rect x="644" y="301" width="1" height="4" fill="#ff8a10"/>
<rect x="783" y="309" width="1" height="2" fill="#b0f070"/>
<rect x="757" y="305" width="1" height="5" fill="#ff7a10"/>
<rect x="926" y="274" width="1" height="3" fill="#ff8a10"/>
<rect x="890" y="300" width="3" height="3" fill="#ff7a10"/>
<rect x="888" y="292" width="3" height="6" fill="#b0f070"/>
<rect x="921" y="296" width="3" height="4" fill="#ff7a10"/>
<rect x="876" y="285" width="2" height="5" fill="#ff7a10"/>
<rect x="850" y="288" width="1" height="2" fill="#b0f070"/>
<rect x="902" y="284" width="1" height="5" fill="#ff7a10"/>
<rect x="892" y="281" width="1" height="4" fill="#b0f070"/>
<rect x="929" y="276" width="1" height="3" fill="#ff8a10"/>
<rect x="929" y="292" width="2" height="6" fill="#b0f070"/>
<rect x="890" y="292" width="3" height="3" fill="#ff7a10"/>
<rect x="684" y="212" width="3" height="4" fill="#b0f070"/>
<rect x="698" y="206" width="3" height="4" fill="#ff7a10"/>
<rect x="690" y="214" width="1" height="6" fill="#ff7a10"/>
<rect x="667" y="202" width="1" height="5" fill="#b0f070"/>
<rect x="726" y="199" width="1" height="6" fill="#ff7a10"/>
<rect x="727" y="204" width="3" height="2" fill="#ff7a10"/>
<rect x="679" y="193" width="1" height="3" fill="#ff8a10"/>
<rect x="698" y="190" width="3" height="4" fill="#ff8a10"/>
<rect x="735" y="190" width="3" height="6" fill="#ff7a10"/>
<rect x="676" y="202" width="1" height="4" fill="#ff7a10"/>
<rect x="692" y="209" width="3" height="3" fill="#ff7a10"/>
<rect x="696" y="199" width="1" height="3" fill="#ff7a10"/>
<rect x="693" y="174" width="1" height="6" fill="#ff7a10"/>
<rect x="669" y="200" width="3" height="5" fill="#ff8a10"/>
<rect x="692" y="180" width="2" height="6" fill="#ff8a10"/>
<rect x="692" y="210" width="3" height="2" fill="#ff7a10"/>
<rect x="669" y="198" width="3" height="5" fill="#ff7a10"/>
<rect x="720" y="208" width="1" height="4" fill="#b0f070"/>
<rect x="729" y="190" width="3" height="4" fill="#b0f070"/>
<rect x="691" y="199" width="3" height="6" fill="#ff7a10"/>
<rect x="758" y="158" width="2" height="2" fill="#ff7a10"/><rect x="681" y="263" width="2" height="1" fill="#a8f070"/><rect x="699" y="198" width="2" height="2" fill="#ff7a10"/><rect x="695" y="302" width="1" height="1" fill="#ff7a10"/><rect x="870" y="184" width="1" height="2" fill="#a8f070"/><rect x="767" y="174" width="2" height="3" fill="#ff7a10"/><rect x="882" y="196" width="1" height="3" fill="#ff7a10"/><rect x="892" y="232" width="2" height="1" fill="#a8f070"/><rect x="814" y="241" width="2" height="3" fill="#ff7a10"/><rect x="680" y="215" width="1" height="3" fill="#ff7a10"/><rect x="874" y="273" width="1" height="2" fill="#ff7a10"/><rect x="908" y="172" width="1" height="3" fill="#ff7a10"/><rect x="840" y="275" width="2" height="1" fill="#ff7a10"/><rect x="655" y="292" width="2" height="1" fill="#a8f070"/><rect x="930" y="274" width="1" height="3" fill="#ff7a10"/><rect x="591" y="305" width="2" height="1" fill="#ff7a10"/><rect x="853" y="244" width="1" height="3" fill="#ff7a10"/><rect x="826" y="285" width="2" height="2" fill="#a8f070"/><rect x="896" y="249" width="2" height="3" fill="#ff7a10"/><rect x="716" y="288" width="2" height="1" fill="#a8f070"/><rect x="779" y="226" width="1" height="1" fill="#ff7a10"/><rect x="708" y="253" width="1" height="2" fill="#ff7a10"/><rect x="928" y="264" width="1" height="2" fill="#ff7a10"/><rect x="752" y="231" width="1" height="1" fill="#ff7a10"/><rect x="636" y="297" width="2" height="3" fill="#a8f070"/><rect x="781" y="276" width="2" height="2" fill="#a8f070"/><rect x="722" y="168" width="1" height="3" fill="#ff7a10"/><rect x="732" y="285" width="2" height="1" fill="#ff7a10"/><rect x="870" y="227" width="1" height="2" fill="#a8f070"/><rect x="675" y="253" width="2" height="3" fill="#ff7a10"/><rect x="823" y="294" width="1" height="2" fill="#a8f070"/><rect x="855" y="210" width="2" height="2" fill="#a8f070"/><rect x="660" y="197" width="2" height="2" fill="#a8f070"/><rect x="733" y="191" width="2" height="1" fill="#a8f070"/><rect x="622" y="291" width="2" height="2" fill="#a8f070"/><rect x="848" y="162" width="1" height="2" fill="#a8f070"/><rect x="830" y="236" width="1" height="3" fill="#ff7a10"/><rect x="856" y="232" width="1" height="1" fill="#a8f070"/><rect x="850" y="181" width="2" height="1" fill="#ff7a10"/><rect x="702" y="248" width="2" height="3" fill="#a8f070"/><rect x="835" y="298" width="1" height="3" fill="#ff7a10"/><rect x="827" y="301" width="1" height="1" fill="#ff7a10"/><rect x="643" y="307" width="2" height="3" fill="#ff7a10"/><rect x="763" y="174" width="2" height="1" fill="#a8f070"/><rect x="611" y="213" width="2" height="2" fill="#ff7a10"/><rect x="606" y="213" width="2" height="1" fill="#a8f070"/><rect x="864" y="290" width="1" height="3" fill="#ff7a10"/><rect x="630" y="306" width="1" height="3" fill="#a8f070"/><rect x="804" y="284" width="2" height="1" fill="#a8f070"/><rect x="652" y="262" width="2" height="1" fill="#ff7a10"/>
<rect x="610" y="288" width="4" height="1" fill="#e82010"/>
<rect x="614" y="288" width="1" height="2" fill="#e82010"/><rect x="611" y="286" width="2" height="3" fill="#ff7a10"/>
<rect x="667" y="288" width="18" height="1" fill="#e82010"/>
<rect x="680" y="289" width="1" height="1" fill="#e82010"/><rect x="683" y="288" width="2" height="1" fill="#e82010"/>
<rect x="745" y="288" width="4" height="1" fill="#e82010"/>
<rect x="747" y="289" width="2" height="2" fill="#e82010"/><rect x="746" y="288" width="2" height="3" fill="#ff7a10"/>
<rect x="782" y="288" width="16" height="1" fill="#e82010"/>
<rect x="790" y="288" width="1" height="2" fill="#ff7a10"/><rect x="789" y="289" width="2" height="3" fill="#ff7a10"/>
<rect x="865" y="288" width="5" height="1" fill="#e82010"/>
<rect x="869" y="288" width="1" height="3" fill="#e82010"/><rect x="868" y="287" width="1" height="3" fill="#e82010"/>
<rect x="865" y="272" width="2" height="4" fill="#e82010"/><rect x="802" y="283" width="3" height="3" fill="#e82010"/>
<g shape-rendering="auto">
<rect x="537" y="391" width="198" height="184" fill="#ffb000" filter="url(#b3)"/>
<rect x="543" y="397" width="186" height="172" fill="#f4ff08" filter="url(#b1)"/>
<rect x="556" y="410" width="160" height="146" fill="#dcfc30" filter="url(#b8)"/>
<ellipse cx="633" cy="478" rx="60" ry="52" fill="#b4f07c" filter="url(#b14)"/>
</g>
<rect x="661" y="403" width="1" height="2" fill="#ff9a10"/><rect x="666" y="404" width="1" height="2" fill="#40e0e0"/><rect x="704" y="400" width="1" height="3" fill="#ff9a10"/><rect x="555" y="399" width="3" height="1" fill="#40e0e0"/><rect x="581" y="403" width="2" height="3" fill="#40e0e0"/><rect x="575" y="397" width="1" height="1" fill="#ff9a10"/><rect x="720" y="398" width="2" height="2" fill="#ffb010"/><rect x="720" y="401" width="2" height="1" fill="#ff9a10"/><rect x="721" y="404" width="3" height="1" fill="#ffb010"/><rect x="625" y="404" width="3" height="1" fill="#ffb010"/><rect x="605" y="402" width="1" height="3" fill="#ffb010"/><rect x="564" y="400" width="3" height="2" fill="#ffb010"/><rect x="585" y="401" width="2" height="1" fill="#ffb010"/><rect x="723" y="397" width="3" height="2" fill="#ff8410"/><rect x="649" y="400" width="4" height="3" fill="#ff8410"/><rect x="632" y="403" width="2" height="1" fill="#ff9a10"/><rect x="715" y="405" width="3" height="3" fill="#ffb010"/><rect x="708" y="399" width="4" height="1" fill="#ffb010"/><rect x="703" y="397" width="1" height="1" fill="#ffb010"/><rect x="642" y="400" width="2" height="2" fill="#ffb010"/><rect x="714" y="401" width="3" height="3" fill="#ffb010"/><rect x="606" y="403" width="2" height="3" fill="#ffb010"/><rect x="726" y="398" width="1" height="1" fill="#40e0e0"/><rect x="559" y="403" width="3" height="2" fill="#40e0e0"/><rect x="666" y="398" width="1" height="2" fill="#ffb010"/><rect x="699" y="398" width="2" height="3" fill="#40e0e0"/><rect x="572" y="400" width="2" height="1" fill="#40e0e0"/><rect x="604" y="401" width="2" height="3" fill="#40e0e0"/><rect x="720" y="403" width="3" height="2" fill="#ffb010"/><rect x="604" y="400" width="2" height="1" fill="#40e0e0"/><rect x="696" y="401" width="2" height="3" fill="#40e0e0"/><rect x="704" y="398" width="4" height="2" fill="#ffb010"/><rect x="564" y="403" width="3" height="3" fill="#ff8410"/><rect x="685" y="400" width="3" height="2" fill="#ffb010"/><rect x="687" y="403" width="3" height="2" fill="#ff9a10"/><rect x="654" y="397" width="3" height="2" fill="#ffb010"/><rect x="634" y="404" width="3" height="2" fill="#ffb010"/><rect x="665" y="403" width="4" height="2" fill="#ff9a10"/><rect x="704" y="403" width="3" height="2" fill="#ff9a10"/><rect x="645" y="398" width="3" height="2" fill="#ffb010"/><rect x="673" y="403" width="4" height="1" fill="#40e0e0"/><rect x="606" y="401" width="3" height="3" fill="#ff8410"/><rect x="587" y="402" width="2" height="1" fill="#ff9a10"/><rect x="663" y="397" width="4" height="1" fill="#ff9a10"/><rect x="562" y="398" width="3" height="1" fill="#40e0e0"/><rect x="587" y="397" width="4" height="2" fill="#40e0e0"/><rect x="668" y="398" width="2" height="1" fill="#ffb010"/><rect x="553" y="400" width="3" height="2" fill="#ff8410"/><rect x="673" y="401" width="1" height="3" fill="#ffb010"/><rect x="569" y="401" width="3" height="3" fill="#ffb010"/><rect x="720" y="404" width="4" height="2" fill="#ffb010"/><rect x="634" y="398" width="4" height="3" fill="#40e0e0"/><rect x="720" y="405" width="1" height="2" fill="#ff8410"/><rect x="619" y="400" width="2" height="2" fill="#40e0e0"/><rect x="628" y="405" width="4" height="2" fill="#40e0e0"/><rect x="722" y="400" width="2" height="3" fill="#ffb010"/><rect x="682" y="399" width="3" height="2" fill="#ff8410"/><rect x="609" y="405" width="4" height="2" fill="#ff9a10"/><rect x="636" y="398" width="4" height="1" fill="#ffb010"/><rect x="560" y="398" width="4" height="1" fill="#40e0e0"/><rect x="646" y="399" width="4" height="1" fill="#ff9a10"/><rect x="638" y="404" width="3" height="2" fill="#40e0e0"/><rect x="659" y="401" width="1" height="1" fill="#ff9a10"/><rect x="605" y="401" width="3" height="3" fill="#ffb010"/><rect x="680" y="397" width="3" height="2" fill="#ff9a10"/><rect x="559" y="399" width="4" height="3" fill="#ff8410"/><rect x="708" y="401" width="1" height="2" fill="#40e0e0"/><rect x="657" y="403" width="4" height="2" fill="#40e0e0"/><rect x="621" y="404" width="2" height="2" fill="#40e0e0"/><rect x="697" y="398" width="1" height="3" fill="#40e0e0"/><rect x="654" y="402" width="4" height="2" fill="#ff9a10"/><rect x="582" y="403" width="4" height="2" fill="#ff9a10"/><rect x="627" y="401" width="1" height="1" fill="#ff9a10"/><rect x="599" y="398" width="1" height="3" fill="#ff8410"/><rect x="611" y="400" width="1" height="2" fill="#40e0e0"/><rect x="562" y="404" width="2" height="3" fill="#ff8410"/><rect x="677" y="398" width="3" height="3" fill="#40e0e0"/><rect x="579" y="402" width="4" height="1" fill="#ff8410"/><rect x="661" y="397" width="1" height="3" fill="#40e0e0"/><rect x="683" y="399" width="1" height="3" fill="#40e0e0"/><rect x="706" y="398" width="4" height="1" fill="#ffb010"/><rect x="672" y="401" width="3" height="3" fill="#ffb010"/><rect x="712" y="398" width="3" height="1" fill="#ffb010"/><rect x="711" y="401" width="2" height="2" fill="#ff8410"/><rect x="649" y="399" width="3" height="3" fill="#ff9a10"/><rect x="694" y="404" width="4" height="3" fill="#40e0e0"/><rect x="584" y="403" width="3" height="1" fill="#ff8410"/><rect x="569" y="398" width="4" height="1" fill="#40e0e0"/><rect x="706" y="401" width="3" height="1" fill="#ff8410"/><rect x="647" y="400" width="2" height="2" fill="#ff9a10"/><rect x="683" y="398" width="4" height="1" fill="#ff9a10"/><rect x="675" y="400" width="2" height="2" fill="#ffb010"/><rect x="715" y="403" width="4" height="2" fill="#ff9a10"/><rect x="679" y="400" width="3" height="3" fill="#40e0e0"/><rect x="720" y="400" width="1" height="3" fill="#ff9a10"/><rect x="682" y="400" width="1" height="1" fill="#ff8410"/><rect x="585" y="399" width="4" height="2" fill="#ffb010"/><rect x="553" y="401" width="4" height="2" fill="#40e0e0"/><rect x="633" y="399" width="2" height="1" fill="#ffb010"/><rect x="704" y="404" width="4" height="1" fill="#ffb010"/><rect x="572" y="404" width="3" height="3" fill="#ff9a10"/><rect x="559" y="404" width="3" height="2" fill="#ffb010"/><rect x="716" y="403" width="4" height="2" fill="#ff9a10"/><rect x="574" y="402" width="3" height="2" fill="#ff9a10"/><rect x="680" y="398" width="2" height="3" fill="#ff8410"/><rect x="653" y="402" width="4" height="3" fill="#ffb010"/><rect x="671" y="398" width="3" height="2" fill="#ff8410"/><rect x="680" y="403" width="2" height="1" fill="#ff9a10"/><rect x="670" y="405" width="4" height="3" fill="#ffb010"/><rect x="554" y="397" width="4" height="1" fill="#ff8410"/><rect x="559" y="404" width="3" height="1" fill="#ff8410"/><rect x="594" y="403" width="1" height="2" fill="#ff8410"/><rect x="672" y="402" width="4" height="2" fill="#ff8410"/><rect x="561" y="404" width="4" height="2" fill="#ff8410"/><rect x="705" y="405" width="2" height="1" fill="#40e0e0"/><rect x="586" y="399" width="3" height="1" fill="#ff8410"/><rect x="647" y="404" width="1" height="3" fill="#ff9a10"/><rect x="662" y="401" width="3" height="2" fill="#40e0e0"/><rect x="652" y="400" width="2" height="3" fill="#ff8410"/><rect x="712" y="399" width="4" height="1" fill="#ff8410"/>
<rect x="576" y="564" width="2" height="2" fill="#ffa010"/><rect x="575" y="565" width="2" height="1" fill="#40e0e0"/><rect x="567" y="564" width="3" height="3" fill="#ff8410"/><rect x="599" y="564" width="1" height="1" fill="#40e0e0"/><rect x="586" y="563" width="2" height="1" fill="#ff8410"/><rect x="623" y="563" width="3" height="1" fill="#ffa010"/><rect x="662" y="566" width="3" height="1" fill="#ffa010"/><rect x="577" y="566" width="1" height="3" fill="#ff8410"/><rect x="670" y="563" width="2" height="3" fill="#ff8410"/><rect x="607" y="563" width="1" height="2" fill="#ffa010"/><rect x="666" y="563" width="1" height="3" fill="#40e0e0"/><rect x="646" y="561" width="1" height="1" fill="#ffa010"/><rect x="626" y="563" width="3" height="1" fill="#ff8410"/><rect x="641" y="562" width="1" height="2" fill="#ffa010"/><rect x="555" y="565" width="1" height="3" fill="#ff8410"/><rect x="598" y="565" width="3" height="3" fill="#ff8410"/><rect x="628" y="568" width="2" height="1" fill="#ffa010"/><rect x="606" y="567" width="2" height="3" fill="#ffa010"/><rect x="582" y="561" width="3" height="1" fill="#40e0e0"/><rect x="632" y="564" width="1" height="1" fill="#ff8410"/><rect x="689" y="564" width="1" height="1" fill="#ff8410"/><rect x="558" y="565" width="2" height="3" fill="#ffa010"/><rect x="619" y="563" width="2" height="1" fill="#ffa010"/><rect x="647" y="563" width="1" height="2" fill="#ffa010"/><rect x="688" y="567" width="3" height="1" fill="#40e0e0"/><rect x="636" y="563" width="1" height="1" fill="#ffa010"/><rect x="617" y="562" width="2" height="1" fill="#40e0e0"/><rect x="600" y="567" width="2" height="2" fill="#40e0e0"/><rect x="632" y="565" width="1" height="1" fill="#ffa010"/><rect x="668" y="562" width="3" height="3" fill="#40e0e0"/><rect x="584" y="564" width="2" height="3" fill="#ff8410"/><rect x="655" y="565" width="3" height="2" fill="#40e0e0"/><rect x="670" y="564" width="3" height="3" fill="#40e0e0"/><rect x="665" y="565" width="2" height="2" fill="#40e0e0"/><rect x="556" y="566" width="1" height="2" fill="#ffa010"/><rect x="566" y="562" width="2" height="3" fill="#40e0e0"/><rect x="697" y="568" width="2" height="2" fill="#ff8410"/><rect x="599" y="566" width="1" height="1" fill="#ff8410"/><rect x="665" y="568" width="2" height="3" fill="#40e0e0"/><rect x="654" y="565" width="2" height="3" fill="#ff8410"/><rect x="703" y="563" width="3" height="2" fill="#ffa010"/><rect x="715" y="566" width="2" height="1" fill="#40e0e0"/><rect x="641" y="562" width="3" height="3" fill="#ffa010"/><rect x="618" y="562" width="3" height="3" fill="#40e0e0"/><rect x="672" y="564" width="1" height="1" fill="#ffa010"/><rect x="604" y="563" width="3" height="1" fill="#ff8410"/><rect x="566" y="564" width="1" height="1" fill="#40e0e0"/><rect x="563" y="565" width="3" height="3" fill="#40e0e0"/><rect x="621" y="563" width="2" height="3" fill="#40e0e0"/><rect x="704" y="563" width="2" height="1" fill="#40e0e0"/><rect x="702" y="563" width="2" height="1" fill="#ff8410"/><rect x="572" y="565" width="3" height="3" fill="#ff8410"/><rect x="625" y="563" width="1" height="3" fill="#40e0e0"/><rect x="608" y="562" width="2" height="1" fill="#40e0e0"/><rect x="713" y="563" width="2" height="3" fill="#ffa010"/><rect x="708" y="563" width="3" height="3" fill="#ffa010"/><rect x="693" y="561" width="3" height="1" fill="#ff8410"/><rect x="569" y="562" width="3" height="1" fill="#40e0e0"/><rect x="680" y="566" width="1" height="3" fill="#40e0e0"/><rect x="713" y="565" width="1" height="2" fill="#ff8410"/><rect x="689" y="562" width="2" height="2" fill="#ff8410"/><rect x="630" y="566" width="3" height="1" fill="#ff8410"/><rect x="620" y="565" width="2" height="1" fill="#ff8410"/><rect x="717" y="568" width="1" height="3" fill="#ff8410"/><rect x="636" y="568" width="3" height="1" fill="#ffa010"/><rect x="680" y="566" width="2" height="1" fill="#ff8410"/><rect x="688" y="568" width="3" height="1" fill="#ffa010"/><rect x="617" y="563" width="2" height="3" fill="#40e0e0"/><rect x="681" y="562" width="1" height="2" fill="#ffa010"/><rect x="609" y="567" width="3" height="2" fill="#ff8410"/>
<rect x="612" y="451" width="2" height="7" fill="#ff2010"/><rect x="605" y="451" width="3" height="5" fill="#ff7a10"/><rect x="690" y="444" width="2" height="3" fill="#ff2010"/><rect x="636" y="438" width="1" height="2" fill="#ff5a10"/><rect x="627" y="436" width="2" height="6" fill="#ff7a10"/><rect x="688" y="449" width="1" height="2" fill="#ff5a10"/><rect x="610" y="448" width="1" height="5" fill="#ff2010"/><rect x="688" y="445" width="3" height="5" fill="#ff2010"/><rect x="595" y="442" width="3" height="5" fill="#ff2010"/><rect x="612" y="442" width="3" height="5" fill="#ff7a10"/><rect x="683" y="442" width="1" height="4" fill="#ff5a10"/><rect x="621" y="439" width="1" height="4" fill="#ff5a10"/><rect x="630" y="439" width="1" height="5" fill="#e81010"/><rect x="619" y="446" width="1" height="3" fill="#ff7a10"/><rect x="598" y="446" width="1" height="5" fill="#ff5a10"/><rect x="610" y="436" width="2" height="4" fill="#ff7a10"/><rect x="604" y="440" width="2" height="6" fill="#ff2010"/><rect x="591" y="448" width="1" height="4" fill="#ff5a10"/><rect x="667" y="442" width="1" height="3" fill="#e81010"/><rect x="643" y="451" width="3" height="6" fill="#ff2010"/><rect x="619" y="438" width="2" height="4" fill="#e81010"/><rect x="628" y="443" width="3" height="5" fill="#ff5a10"/><rect x="688" y="438" width="1" height="6" fill="#ff2010"/><rect x="665" y="438" width="2" height="7" fill="#ff2010"/><rect x="591" y="448" width="2" height="3" fill="#ff5a10"/><rect x="671" y="437" width="3" height="3" fill="#ff2010"/><rect x="661" y="449" width="1" height="6" fill="#e81010"/><rect x="635" y="438" width="1" height="4" fill="#e81010"/><rect x="663" y="450" width="2" height="5" fill="#e81010"/><rect x="676" y="445" width="3" height="2" fill="#ff7a10"/><rect x="596" y="439" width="3" height="5" fill="#ff2010"/><rect x="684" y="440" width="3" height="4" fill="#ff7a10"/><rect x="604" y="441" width="2" height="2" fill="#ff5a10"/><rect x="648" y="437" width="3" height="2" fill="#ff2010"/><rect x="625" y="438" width="2" height="4" fill="#e81010"/><rect x="639" y="438" width="1" height="4" fill="#e81010"/><rect x="675" y="445" width="2" height="3" fill="#ff5a10"/><rect x="662" y="445" width="2" height="3" fill="#ff5a10"/><rect x="648" y="450" width="2" height="6" fill="#ff2010"/><rect x="591" y="437" width="3" height="5" fill="#ff2010"/><rect x="593" y="442" width="2" height="7" fill="#ff7a10"/><rect x="652" y="439" width="3" height="2" fill="#ff2010"/><rect x="663" y="445" width="1" height="2" fill="#ff7a10"/><rect x="621" y="444" width="3" height="7" fill="#ff2010"/><rect x="688" y="446" width="2" height="2" fill="#ff7a10"/><rect x="667" y="440" width="2" height="4" fill="#ff2010"/><rect x="680" y="441" width="3" height="5" fill="#ff7a10"/><rect x="629" y="446" width="2" height="4" fill="#ff5a10"/><rect x="637" y="438" width="1" height="7" fill="#ff7a10"/><rect x="635" y="444" width="2" height="3" fill="#ff5a10"/><rect x="604" y="443" width="3" height="6" fill="#ff7a10"/><rect x="685" y="441" width="1" height="3" fill="#ff7a10"/><rect x="617" y="443" width="3" height="3" fill="#ff5a10"/><rect x="658" y="442" width="2" height="4" fill="#e81010"/><rect x="653" y="439" width="2" height="4" fill="#e81010"/><rect x="640" y="447" width="1" height="2" fill="#ff2010"/><rect x="624" y="438" width="3" height="4" fill="#ff5a10"/><rect x="595" y="451" width="2" height="3" fill="#e81010"/><rect x="664" y="440" width="2" height="4" fill="#ff2010"/><rect x="622" y="440" width="2" height="5" fill="#ff7a10"/><rect x="596" y="441" width="1" height="2" fill="#ff2010"/><rect x="671" y="449" width="3" height="5" fill="#ff2010"/><rect x="637" y="437" width="2" height="2" fill="#e81010"/><rect x="656" y="446" width="2" height="4" fill="#ff2010"/><rect x="638" y="438" width="1" height="2" fill="#ff2010"/><rect x="599" y="451" width="3" height="5" fill="#ff7a10"/><rect x="602" y="441" width="2" height="5" fill="#ff2010"/><rect x="611" y="444" width="1" height="5" fill="#ff5a10"/><rect x="684" y="441" width="3" height="6" fill="#ff2010"/><rect x="604" y="437" width="3" height="5" fill="#e81010"/><rect x="635" y="450" width="3" height="7" fill="#e81010"/><rect x="619" y="447" width="2" height="5" fill="#ff7a10"/><rect x="631" y="447" width="1" height="3" fill="#ff5a10"/><rect x="637" y="450" width="1" height="5" fill="#ff5a10"/><rect x="604" y="439" width="1" height="7" fill="#ff7a10"/><rect x="616" y="443" width="3" height="3" fill="#ff7a10"/><rect x="601" y="445" width="2" height="7" fill="#e81010"/><rect x="661" y="444" width="3" height="2" fill="#ff5a10"/><rect x="668" y="441" width="3" height="5" fill="#ff7a10"/><rect x="679" y="444" width="3" height="4" fill="#e81010"/><rect x="596" y="440" width="3" height="5" fill="#e81010"/><rect x="632" y="451" width="1" height="4" fill="#ff5a10"/><rect x="667" y="447" width="1" height="5" fill="#ff5a10"/><rect x="622" y="449" width="3" height="4" fill="#ff7a10"/><rect x="674" y="445" width="2" height="4" fill="#e81010"/><rect x="663" y="445" width="1" height="3" fill="#ff7a10"/><rect x="657" y="444" width="2" height="5" fill="#e81010"/><rect x="594" y="444" width="2" height="2" fill="#ff5a10"/><rect x="607" y="439" width="3" height="3" fill="#ff7a10"/><rect x="656" y="442" width="3" height="3" fill="#e81010"/><rect x="684" y="439" width="1" height="6" fill="#ff2010"/><rect x="666" y="444" width="2" height="6" fill="#e81010"/><rect x="613" y="437" width="3" height="6" fill="#ff7a10"/><rect x="670" y="447" width="2" height="6" fill="#ff2010"/><rect x="605" y="437" width="1" height="3" fill="#ff5a10"/><rect x="601" y="443" width="2" height="5" fill="#ff7a10"/><rect x="619" y="437" width="3" height="6" fill="#ff7a10"/><rect x="675" y="445" width="3" height="6" fill="#ff5a10"/><rect x="592" y="449" width="3" height="3" fill="#ff2010"/><rect x="661" y="439" width="3" height="4" fill="#ff2010"/><rect x="608" y="442" width="1" height="5" fill="#ff2010"/><rect x="621" y="447" width="2" height="5" fill="#ff5a10"/><rect x="669" y="438" width="2" height="7" fill="#ff5a10"/><rect x="612" y="442" width="2" height="3" fill="#ff7a10"/><rect x="688" y="440" width="3" height="3" fill="#e81010"/><rect x="668" y="449" width="2" height="5" fill="#ff7a10"/><rect x="665" y="439" width="3" height="4" fill="#ff2010"/><rect x="610" y="444" width="1" height="4" fill="#ff2010"/><rect x="662" y="442" width="1" height="7" fill="#e81010"/><rect x="609" y="444" width="3" height="5" fill="#ff2010"/>
<rect x="555" y="440" width="2" height="4" fill="#ff2010"/><rect x="551" y="430" width="1" height="6" fill="#ff7a10"/><rect x="555" y="433" width="2" height="4" fill="#ff7a10"/><rect x="547" y="432" width="2" height="2" fill="#ff2010"/><rect x="551" y="421" width="1" height="6" fill="#ff7a10"/><rect x="548" y="439" width="2" height="2" fill="#ff2010"/><rect x="554" y="431" width="2" height="4" fill="#ff2010"/><rect x="549" y="440" width="1" height="6" fill="#ff2010"/><rect x="555" y="446" width="1" height="2" fill="#ff7a10"/><rect x="552" y="433" width="2" height="4" fill="#ff2010"/><rect x="551" y="438" width="1" height="6" fill="#ff2010"/><rect x="556" y="445" width="2" height="2" fill="#ff7a10"/><rect x="549" y="421" width="2" height="5" fill="#ff2010"/><rect x="558" y="446" width="2" height="2" fill="#ff7a10"/><rect x="549" y="445" width="2" height="4" fill="#ff2010"/><rect x="554" y="432" width="1" height="6" fill="#ff2010"/><rect x="557" y="428" width="2" height="6" fill="#ff7a10"/><rect x="552" y="421" width="2" height="5" fill="#ff2010"/><rect x="553" y="431" width="2" height="2" fill="#ff2010"/><rect x="546" y="428" width="1" height="4" fill="#ff7a10"/><rect x="550" y="448" width="1" height="3" fill="#ff2010"/><rect x="551" y="441" width="1" height="6" fill="#ff2010"/><rect x="553" y="440" width="1" height="2" fill="#ff2010"/><rect x="549" y="427" width="2" height="3" fill="#ff2010"/><rect x="551" y="427" width="2" height="6" fill="#ff7a10"/>
<rect x="657" y="431" width="1" height="3" fill="#40e0e0"/><rect x="649" y="416" width="1" height="2" fill="#40e0e0"/><rect x="658" y="419" width="2" height="2" fill="#40e0e0"/><rect x="648" y="422" width="2" height="3" fill="#ff7a10"/><rect x="655" y="436" width="2" height="4" fill="#40e0e0"/><rect x="644" y="449" width="1" height="5" fill="#40e0e0"/><rect x="645" y="431" width="2" height="6" fill="#40e0e0"/><rect x="642" y="419" width="1" height="3" fill="#40e0e0"/><rect x="645" y="425" width="1" height="2" fill="#40e0e0"/><rect x="642" y="417" width="2" height="3" fill="#ff7a10"/><rect x="641" y="425" width="2" height="5" fill="#ff7a10"/><rect x="641" y="411" width="2" height="4" fill="#ff7a10"/><rect x="647" y="401" width="1" height="3" fill="#ff7a10"/><rect x="660" y="416" width="1" height="2" fill="#ff7a10"/><rect x="655" y="445" width="2" height="4" fill="#40e0e0"/><rect x="648" y="439" width="2" height="2" fill="#40e0e0"/><rect x="644" y="436" width="2" height="2" fill="#40e0e0"/><rect x="649" y="412" width="1" height="6" fill="#ff7a10"/><rect x="648" y="429" width="2" height="5" fill="#ff7a10"/><rect x="654" y="400" width="1" height="2" fill="#ff7a10"/><rect x="658" y="416" width="1" height="6" fill="#40e0e0"/><rect x="640" y="435" width="1" height="6" fill="#40e0e0"/><rect x="650" y="418" width="2" height="3" fill="#40e0e0"/><rect x="649" y="434" width="1" height="3" fill="#ff7a10"/><rect x="651" y="404" width="1" height="3" fill="#40e0e0"/><rect x="653" y="429" width="2" height="3" fill="#ff7a10"/><rect x="655" y="408" width="2" height="3" fill="#40e0e0"/><rect x="653" y="435" width="1" height="6" fill="#ff7a10"/><rect x="652" y="440" width="1" height="4" fill="#40e0e0"/><rect x="659" y="450" width="1" height="4" fill="#ff7a10"/><rect x="651" y="430" width="2" height="5" fill="#40e0e0"/><rect x="657" y="443" width="2" height="3" fill="#ff7a10"/><rect x="649" y="428" width="1" height="2" fill="#ff7a10"/><rect x="658" y="409" width="1" height="3" fill="#40e0e0"/><rect x="654" y="414" width="2" height="2" fill="#40e0e0"/>
<ellipse cx="633" cy="483" rx="48" ry="36" fill="#a8ee90" opacity="0.45" filter="url(#b5)" shape-rendering="auto"/>
<rect x="615" y="459" width="1" height="2" fill="#ff7a10"/><rect x="671" y="502" width="2" height="3" fill="#30e8e8"/><rect x="594" y="476" width="2" height="4" fill="#ff7a10"/><rect x="675" y="477" width="1" height="2" fill="#ffd400"/><rect x="632" y="493" width="3" height="2" fill="#ff7a10"/><rect x="620" y="490" width="3" height="2" fill="#ffd400"/><rect x="669" y="496" width="3" height="2" fill="#ffe020"/><rect x="638" y="501" width="1" height="3" fill="#ffe020"/><rect x="654" y="466" width="2" height="2" fill="#30e8e8"/><rect x="655" y="481" width="2" height="2" fill="#30e8e8"/><rect x="675" y="472" width="1" height="2" fill="#ffe020"/><rect x="645" y="485" width="1" height="2" fill="#ff8a10"/><rect x="648" y="461" width="1" height="1" fill="#ff7a10"/><rect x="662" y="479" width="1" height="1" fill="#ff7a10"/><rect x="617" y="500" width="3" height="3" fill="#ffd400"/><rect x="651" y="512" width="3" height="4" fill="#30e8e8"/><rect x="663" y="507" width="1" height="3" fill="#ff7a10"/><rect x="606" y="486" width="2" height="3" fill="#ff7a10"/><rect x="608" y="494" width="3" height="1" fill="#30e8e8"/><rect x="638" y="508" width="1" height="3" fill="#30e8e8"/><rect x="624" y="465" width="1" height="3" fill="#30e8e8"/><rect x="616" y="500" width="1" height="3" fill="#ff7a10"/><rect x="597" y="487" width="1" height="3" fill="#ff7a10"/><rect x="592" y="493" width="1" height="1" fill="#ff8a10"/><rect x="627" y="499" width="1" height="3" fill="#ffd400"/><rect x="617" y="463" width="3" height="4" fill="#30e8e8"/><rect x="622" y="459" width="3" height="4" fill="#ff8a10"/><rect x="653" y="502" width="2" height="3" fill="#ff7a10"/><rect x="637" y="461" width="3" height="2" fill="#ffe020"/><rect x="620" y="512" width="2" height="3" fill="#ff8a10"/><rect x="595" y="478" width="1" height="4" fill="#ffd400"/><rect x="630" y="498" width="1" height="3" fill="#30e8e8"/><rect x="634" y="457" width="1" height="1" fill="#30e8e8"/><rect x="639" y="492" width="3" height="4" fill="#ffd400"/><rect x="634" y="494" width="2" height="3" fill="#ffe020"/><rect x="606" y="496" width="1" height="4" fill="#ff7a10"/><rect x="624" y="512" width="2" height="2" fill="#30e8e8"/><rect x="611" y="466" width="2" height="3" fill="#30e8e8"/><rect x="666" y="488" width="3" height="4" fill="#ff7a10"/><rect x="670" y="493" width="1" height="4" fill="#ff7a10"/><rect x="634" y="506" width="1" height="3" fill="#ff7a10"/><rect x="609" y="456" width="2" height="2" fill="#ffd400"/><rect x="673" y="492" width="1" height="4" fill="#ffd400"/><rect x="630" y="507" width="1" height="4" fill="#ff7a10"/><rect x="616" y="509" width="3" height="2" fill="#ff8a10"/><rect x="594" y="469" width="2" height="3" fill="#ffe020"/><rect x="648" y="454" width="2" height="3" fill="#ff7a10"/><rect x="657" y="505" width="3" height="4" fill="#30e8e8"/><rect x="621" y="469" width="1" height="2" fill="#30e8e8"/><rect x="654" y="510" width="2" height="1" fill="#ff7a10"/><rect x="596" y="464" width="2" height="4" fill="#ffe020"/><rect x="647" y="459" width="2" height="2" fill="#ff7a10"/><rect x="623" y="487" width="2" height="2" fill="#30e8e8"/><rect x="619" y="478" width="2" height="4" fill="#ff7a10"/><rect x="617" y="466" width="2" height="3" fill="#ff7a10"/><rect x="607" y="492" width="2" height="1" fill="#ff7a10"/><rect x="615" y="490" width="3" height="4" fill="#ffd400"/><rect x="655" y="462" width="2" height="4" fill="#ff7a10"/><rect x="675" y="469" width="3" height="1" fill="#ffe020"/><rect x="657" y="496" width="1" height="4" fill="#ff7a10"/><rect x="654" y="484" width="3" height="3" fill="#ffe020"/><rect x="650" y="500" width="1" height="3" fill="#ff8a10"/><rect x="671" y="495" width="3" height="2" fill="#ff7a10"/><rect x="647" y="499" width="3" height="3" fill="#ffe020"/><rect x="613" y="507" width="2" height="2" fill="#ffd400"/><rect x="613" y="490" width="2" height="3" fill="#ffe020"/><rect x="651" y="471" width="2" height="4" fill="#ff7a10"/><rect x="629" y="487" width="1" height="3" fill="#ffe020"/><rect x="657" y="501" width="3" height="1" fill="#ff7a10"/><rect x="641" y="513" width="1" height="3" fill="#ffd400"/><rect x="675" y="483" width="1" height="4" fill="#30e8e8"/><rect x="641" y="472" width="3" height="3" fill="#ffe020"/><rect x="634" y="498" width="1" height="1" fill="#ffd400"/><rect x="632" y="508" width="2" height="3" fill="#ff7a10"/><rect x="599" y="503" width="1" height="1" fill="#ffe020"/><rect x="622" y="460" width="1" height="2" fill="#ff8a10"/><rect x="668" y="479" width="2" height="1" fill="#ff7a10"/><rect x="597" y="484" width="3" height="2" fill="#ff7a10"/><rect x="639" y="507" width="3" height="4" fill="#ffd400"/><rect x="615" y="466" width="2" height="3" fill="#ffd400"/><rect x="668" y="489" width="1" height="2" fill="#30e8e8"/><rect x="643" y="477" width="1" height="1" fill="#ff7a10"/><rect x="622" y="454" width="2" height="4" fill="#ff7a10"/><rect x="646" y="482" width="1" height="3" fill="#ff8a10"/><rect x="660" y="482" width="2" height="1" fill="#ffe020"/><rect x="635" y="505" width="1" height="4" fill="#ff7a10"/><rect x="670" y="472" width="3" height="4" fill="#ffe020"/><rect x="675" y="473" width="1" height="1" fill="#30e8e8"/><rect x="647" y="484" width="1" height="4" fill="#ff7a10"/><rect x="626" y="504" width="1" height="3" fill="#30e8e8"/><rect x="595" y="493" width="2" height="3" fill="#ffe020"/><rect x="591" y="478" width="3" height="4" fill="#ff8a10"/><rect x="607" y="490" width="3" height="2" fill="#ff7a10"/><rect x="589" y="479" width="1" height="1" fill="#ff7a10"/><rect x="648" y="501" width="2" height="4" fill="#30e8e8"/><rect x="594" y="487" width="2" height="2" fill="#ffe020"/><rect x="639" y="485" width="3" height="1" fill="#ff8a10"/><rect x="644" y="487" width="1" height="1" fill="#ff8a10"/><rect x="630" y="508" width="1" height="2" fill="#ff8a10"/><rect x="642" y="505" width="1" height="4" fill="#ffe020"/><rect x="619" y="454" width="3" height="2" fill="#ff7a10"/><rect x="629" y="469" width="3" height="4" fill="#ff7a10"/><rect x="640" y="467" width="1" height="2" fill="#ff7a10"/><rect x="599" y="489" width="2" height="1" fill="#ffe020"/><rect x="648" y="469" width="2" height="2" fill="#ffd400"/><rect x="654" y="510" width="1" height="4" fill="#ff7a10"/><rect x="669" y="468" width="3" height="1" fill="#ff7a10"/><rect x="649" y="468" width="2" height="3" fill="#ff7a10"/><rect x="604" y="479" width="2" height="2" fill="#ff7a10"/><rect x="659" y="455" width="3" height="3" fill="#ffe020"/><rect x="599" y="498" width="2" height="1" fill="#ff7a10"/><rect x="670" y="466" width="2" height="2" fill="#ff8a10"/><rect x="629" y="486" width="3" height="3" fill="#ff7a10"/><rect x="644" y="464" width="2" height="1" fill="#ffe020"/><rect x="592" y="473" width="2" height="1" fill="#ff7a10"/><rect x="639" y="452" width="3" height="3" fill="#30e8e8"/><rect x="649" y="495" width="1" height="3" fill="#ffd400"/><rect x="658" y="481" width="2" height="1" fill="#30e8e8"/><rect x="641" y="471" width="3" height="4" fill="#ffe020"/><rect x="661" y="465" width="2" height="1" fill="#30e8e8"/><rect x="668" y="474" width="2" height="3" fill="#30e8e8"/><rect x="656" y="468" width="1" height="2" fill="#ffe020"/><rect x="595" y="475" width="1" height="3" fill="#ff7a10"/><rect x="652" y="497" width="3" height="4" fill="#ff7a10"/><rect x="598" y="470" width="2" height="2" fill="#30e8e8"/><rect x="658" y="491" width="1" height="2" fill="#ff7a10"/><rect x="674" y="475" width="1" height="2" fill="#ff8a10"/><rect x="611" y="462" width="2" height="4" fill="#ff7a10"/><rect x="642" y="469" width="1" height="3" fill="#ff7a10"/><rect x="602" y="476" width="3" height="4" fill="#ff7a10"/><rect x="614" y="454" width="2" height="2" fill="#ffe020"/><rect x="589" y="483" width="3" height="3" fill="#ff7a10"/><rect x="617" y="467" width="2" height="1" fill="#ffe020"/><rect x="614" y="481" width="3" height="3" fill="#30e8e8"/><rect x="665" y="475" width="1" height="3" fill="#ffd400"/><rect x="609" y="467" width="3" height="2" fill="#ff7a10"/><rect x="611" y="482" width="3" height="2" fill="#30e8e8"/><rect x="674" y="478" width="1" height="2" fill="#ffd400"/><rect x="603" y="501" width="1" height="1" fill="#ffd400"/><rect x="606" y="496" width="3" height="1" fill="#30e8e8"/><rect x="600" y="479" width="1" height="1" fill="#ffe020"/><rect x="651" y="480" width="3" height="2" fill="#ff7a10"/><rect x="594" y="495" width="3" height="4" fill="#ff7a10"/><rect x="605" y="494" width="2" height="4" fill="#ff7a10"/><rect x="672" y="496" width="1" height="1" fill="#ff8a10"/><rect x="597" y="494" width="2" height="2" fill="#30e8e8"/><rect x="608" y="499" width="3" height="4" fill="#ff8a10"/><rect x="626" y="482" width="2" height="3" fill="#30e8e8"/><rect x="617" y="481" width="1" height="1" fill="#ff8a10"/><rect x="647" y="503" width="3" height="1" fill="#ff7a10"/><rect x="627" y="486" width="2" height="1" fill="#ff7a10"/><rect x="636" y="505" width="2" height="2" fill="#ffe020"/><rect x="617" y="479" width="1" height="3" fill="#ff7a10"/><rect x="659" y="488" width="1" height="4" fill="#ff7a10"/><rect x="635" y="457" width="3" height="4" fill="#ff7a10"/><rect x="636" y="470" width="2" height="3" fill="#ffd400"/><rect x="611" y="494" width="3" height="3" fill="#ffd400"/><rect x="600" y="493" width="2" height="2" fill="#ffd400"/><rect x="618" y="500" width="2" height="2" fill="#ff7a10"/><rect x="609" y="471" width="1" height="2" fill="#30e8e8"/><rect x="646" y="494" width="1" height="3" fill="#ff8a10"/><rect x="626" y="493" width="3" height="1" fill="#ff7a10"/><rect x="612" y="499" width="1" height="4" fill="#ff7a10"/><rect x="606" y="504" width="3" height="4" fill="#ff7a10"/><rect x="654" y="473" width="3" height="3" fill="#ff7a10"/><rect x="622" y="506" width="2" height="3" fill="#ff7a10"/><rect x="590" y="488" width="1" height="1" fill="#ff7a10"/><rect x="618" y="497" width="3" height="3" fill="#30e8e8"/><rect x="633" y="474" width="1" height="3" fill="#30e8e8"/><rect x="652" y="458" width="2" height="3" fill="#ff7a10"/><rect x="654" y="499" width="3" height="1" fill="#ff7a10"/><rect x="606" y="461" width="3" height="3" fill="#ffe020"/><rect x="663" y="463" width="1" height="3" fill="#ff7a10"/><rect x="610" y="464" width="3" height="2" fill="#30e8e8"/><rect x="609" y="492" width="3" height="4" fill="#ffd400"/><rect x="658" y="483" width="1" height="2" fill="#ffe020"/><rect x="608" y="505" width="1" height="3" fill="#ffd400"/><rect x="635" y="466" width="3" height="4" fill="#ff7a10"/><rect x="634" y="454" width="1" height="3" fill="#ffe020"/><rect x="631" y="480" width="2" height="3" fill="#ffe020"/><rect x="631" y="508" width="1" height="1" fill="#ff7a10"/><rect x="651" y="464" width="2" height="2" fill="#30e8e8"/><rect x="602" y="499" width="2" height="2" fill="#ff7a10"/><rect x="624" y="454" width="1" height="2" fill="#ff7a10"/><rect x="650" y="474" width="2" height="2" fill="#ffd400"/><rect x="625" y="467" width="3" height="1" fill="#ffe020"/><rect x="628" y="467" width="1" height="1" fill="#ffe020"/><rect x="601" y="489" width="3" height="2" fill="#ffe020"/><rect x="649" y="506" width="2" height="2" fill="#ffe020"/><rect x="623" y="512" width="1" height="2" fill="#30e8e8"/><rect x="660" y="492" width="1" height="3" fill="#ff7a10"/><rect x="612" y="498" width="2" height="1" fill="#ffd400"/><rect x="672" y="499" width="2" height="1" fill="#ff7a10"/><rect x="598" y="486" width="2" height="3" fill="#ff7a10"/><rect x="605" y="483" width="1" height="1" fill="#ff7a10"/><rect x="625" y="459" width="3" height="3" fill="#30e8e8"/><rect x="593" y="486" width="1" height="3" fill="#ff7a10"/><rect x="621" y="503" width="1" height="4" fill="#ffe020"/><rect x="619" y="490" width="1" height="2" fill="#ff7a10"/><rect x="659" y="506" width="3" height="4" fill="#ff7a10"/><rect x="671" y="491" width="3" height="4" fill="#ff7a10"/><rect x="611" y="480" width="3" height="4" fill="#ffd400"/><rect x="674" y="495" width="2" height="3" fill="#ffd400"/><rect x="633" y="464" width="2" height="2" fill="#ffe020"/><rect x="659" y="464" width="1" height="3" fill="#ffe020"/><rect x="620" y="512" width="2" height="3" fill="#ffd400"/><rect x="644" y="489" width="2" height="3" fill="#ffd400"/><rect x="635" y="483" width="3" height="3" fill="#ffd400"/><rect x="619" y="492" width="3" height="4" fill="#ff7a10"/><rect x="646" y="475" width="1" height="3" fill="#ff7a10"/><rect x="629" y="499" width="2" height="1" fill="#ff8a10"/><rect x="605" y="461" width="2" height="2" fill="#ff7a10"/><rect x="616" y="497" width="2" height="2" fill="#30e8e8"/><rect x="648" y="475" width="3" height="1" fill="#ffe020"/><rect x="637" y="454" width="3" height="4" fill="#ffe020"/><rect x="664" y="473" width="3" height="4" fill="#ff7a10"/><rect x="670" y="464" width="1" height="3" fill="#30e8e8"/><rect x="649" y="473" width="3" height="2" fill="#ffe020"/><rect x="597" y="486" width="3" height="2" fill="#ff7a10"/><rect x="634" y="493" width="3" height="1" fill="#ffe020"/><rect x="662" y="484" width="3" height="4" fill="#ffd400"/><rect x="633" y="474" width="1" height="1" fill="#ff8a10"/><rect x="605" y="462" width="1" height="4" fill="#ff8a10"/><rect x="627" y="473" width="3" height="2" fill="#ff7a10"/><rect x="639" y="509" width="1" height="4" fill="#ff7a10"/><rect x="676" y="486" width="1" height="4" fill="#30e8e8"/><rect x="622" y="487" width="3" height="1" fill="#ffe020"/><rect x="661" y="479" width="3" height="1" fill="#ffd400"/><rect x="652" y="477" width="2" height="3" fill="#ff7a10"/><rect x="626" y="484" width="3" height="4" fill="#ff7a10"/><rect x="656" y="456" width="3" height="3" fill="#ff7a10"/><rect x="598" y="488" width="1" height="1" fill="#ffd400"/><rect x="624" y="503" width="1" height="3" fill="#ff8a10"/><rect x="597" y="487" width="2" height="3" fill="#ff7a10"/><rect x="652" y="468" width="2" height="1" fill="#ffe020"/><rect x="675" y="486" width="2" height="4" fill="#ff7a10"/><rect x="615" y="508" width="3" height="4" fill="#ff7a10"/><rect x="596" y="475" width="2" height="3" fill="#ffe020"/><rect x="613" y="477" width="3" height="4" fill="#ff7a10"/><rect x="667" y="463" width="2" height="2" fill="#ff7a10"/><rect x="596" y="473" width="3" height="1" fill="#ff8a10"/><rect x="653" y="455" width="2" height="4" fill="#ff7a10"/><rect x="620" y="466" width="3" height="4" fill="#ff7a10"/><rect x="603" y="500" width="1" height="1" fill="#ff7a10"/><rect x="620" y="459" width="2" height="2" fill="#ff7a10"/><rect x="657" y="498" width="1" height="2" fill="#30e8e8"/><rect x="610" y="507" width="2" height="2" fill="#ffe020"/><rect x="640" y="489" width="1" height="2" fill="#ff8a10"/><rect x="600" y="496" width="3" height="2" fill="#ff7a10"/><rect x="614" y="507" width="3" height="2" fill="#ff7a10"/><rect x="632" y="467" width="2" height="3" fill="#30e8e8"/><rect x="602" y="486" width="2" height="3" fill="#ffd400"/><rect x="664" y="497" width="3" height="1" fill="#ff7a10"/><rect x="609" y="501" width="3" height="3" fill="#ff7a10"/><rect x="634" y="455" width="3" height="2" fill="#ff7a10"/><rect x="638" y="476" width="2" height="1" fill="#ff7a10"/><rect x="607" y="477" width="3" height="1" fill="#ff8a10"/><rect x="667" y="486" width="3" height="1" fill="#ff7a10"/><rect x="593" y="494" width="3" height="1" fill="#ff8a10"/><rect x="659" y="470" width="3" height="2" fill="#ffd400"/><rect x="648" y="498" width="1" height="2" fill="#ffe020"/><rect x="675" y="490" width="2" height="3" fill="#ff7a10"/><rect x="665" y="472" width="3" height="2" fill="#ff7a10"/><rect x="625" y="467" width="1" height="3" fill="#ff7a10"/><rect x="599" y="462" width="2" height="1" fill="#ffd400"/><rect x="658" y="505" width="2" height="4" fill="#ffd400"/><rect x="617" y="475" width="2" height="3" fill="#ffe020"/><rect x="643" y="487" width="2" height="1" fill="#ff7a10"/><rect x="625" y="508" width="2" height="4" fill="#ff7a10"/><rect x="648" y="502" width="2" height="2" fill="#30e8e8"/><rect x="661" y="466" width="1" height="2" fill="#ff7a10"/><rect x="665" y="500" width="2" height="1" fill="#30e8e8"/><rect x="613" y="500" width="3" height="2" fill="#30e8e8"/><rect x="608" y="472" width="2" height="1" fill="#ff7a10"/><rect x="638" y="496" width="2" height="1" fill="#ff7a10"/><rect x="651" y="465" width="2" height="1" fill="#ff7a10"/><rect x="635" y="474" width="1" height="3" fill="#ff7a10"/><rect x="616" y="463" width="3" height="3" fill="#30e8e8"/><rect x="595" y="483" width="3" height="1" fill="#ff7a10"/><rect x="671" y="493" width="3" height="2" fill="#ffe020"/><rect x="630" y="477" width="3" height="4" fill="#ffe020"/><rect x="622" y="473" width="1" height="3" fill="#ff8a10"/><rect x="608" y="481" width="2" height="3" fill="#ff8a10"/><rect x="640" y="455" width="3" height="1" fill="#ffe020"/><rect x="665" y="501" width="2" height="1" fill="#ff8a10"/><rect x="629" y="491" width="1" height="1" fill="#ff8a10"/><rect x="595" y="471" width="2" height="1" fill="#ffe020"/><rect x="660" y="480" width="3" height="2" fill="#ffe020"/><rect x="605" y="497" width="3" height="3" fill="#ff7a10"/><rect x="623" y="513" width="1" height="1" fill="#ff7a10"/><rect x="632" y="460" width="3" height="2" fill="#ffd400"/><rect x="645" y="453" width="3" height="3" fill="#ff8a10"/><rect x="670" y="488" width="2" height="3" fill="#ffd400"/><rect x="633" y="501" width="2" height="3" fill="#ff8a10"/><rect x="652" y="484" width="1" height="4" fill="#ffe020"/><rect x="638" y="478" width="1" height="4" fill="#ff8a10"/><rect x="624" y="510" width="2" height="1" fill="#ff7a10"/><rect x="653" y="455" width="2" height="1" fill="#ffd400"/><rect x="671" y="495" width="3" height="4" fill="#30e8e8"/><rect x="657" y="486" width="2" height="1" fill="#ffd400"/><rect x="661" y="507" width="1" height="4" fill="#30e8e8"/><rect x="665" y="464" width="1" height="3" fill="#30e8e8"/><rect x="640" y="458" width="1" height="1" fill="#ff7a10"/><rect x="636" y="512" width="3" height="2" fill="#ff7a10"/><rect x="647" y="502" width="1" height="3" fill="#30e8e8"/><rect x="639" y="465" width="2" height="4" fill="#ff7a10"/><rect x="649" y="467" width="3" height="3" fill="#ff7a10"/><rect x="646" y="490" width="1" height="4" fill="#30e8e8"/><rect x="623" y="488" width="3" height="2" fill="#ff7a10"/><rect x="652" y="508" width="1" height="3" fill="#30e8e8"/><rect x="635" y="476" width="3" height="1" fill="#ffe020"/><rect x="607" y="474" width="2" height="1" fill="#ffe020"/><rect x="628" y="454" width="2" height="4" fill="#ff8a10"/><rect x="640" y="513" width="2" height="3" fill="#30e8e8"/><rect x="628" y="484" width="3" height="3" fill="#ff7a10"/><rect x="596" y="488" width="2" height="2" fill="#ffd400"/><rect x="652" y="508" width="2" height="3" fill="#ffd400"/><rect x="634" y="503" width="2" height="3" fill="#ff7a10"/><rect x="616" y="509" width="3" height="1" fill="#30e8e8"/><rect x="668" y="505" width="3" height="3" fill="#ff7a10"/><rect x="626" y="505" width="1" height="2" fill="#ff7a10"/><rect x="595" y="493" width="1" height="1" fill="#ff7a10"/><rect x="646" y="481" width="2" height="1" fill="#ff7a10"/><rect x="632" y="464" width="3" height="2" fill="#ff7a10"/><rect x="659" y="496" width="1" height="3" fill="#ff7a10"/><rect x="625" y="462" width="2" height="1" fill="#ff8a10"/><rect x="661" y="468" width="3" height="3" fill="#ff7a10"/><rect x="664" y="497" width="3" height="1" fill="#ffe020"/><rect x="627" y="467" width="3" height="2" fill="#ff7a10"/><rect x="669" y="483" width="3" height="1" fill="#ff8a10"/><rect x="610" y="501" width="1" height="4" fill="#ff8a10"/><rect x="640" y="467" width="3" height="3" fill="#ff7a10"/><rect x="657" y="494" width="1" height="3" fill="#ffd400"/><rect x="627" y="492" width="1" height="4" fill="#ffd400"/><rect x="611" y="457" width="1" height="2" fill="#ff7a10"/><rect x="603" y="502" width="3" height="4" fill="#ff7a10"/><rect x="649" y="483" width="3" height="3" fill="#ff7a10"/><rect x="643" y="470" width="2" height="3" fill="#ff7a10"/><rect x="663" y="492" width="2" height="2" fill="#ff7a10"/><rect x="606" y="467" width="1" height="3" fill="#ffd400"/><rect x="604" y="459" width="2" height="1" fill="#ff7a10"/><rect x="646" y="512" width="3" height="4" fill="#ffe020"/><rect x="673" y="469" width="2" height="4" fill="#30e8e8"/><rect x="664" y="458" width="3" height="4" fill="#ff8a10"/><rect x="659" y="490" width="2" height="2" fill="#ff7a10"/><rect x="612" y="504" width="1" height="1" fill="#ff8a10"/><rect x="599" y="470" width="3" height="4" fill="#ffe020"/><rect x="676" y="469" width="2" height="4" fill="#ff8a10"/><rect x="620" y="467" width="2" height="1" fill="#ff7a10"/><rect x="591" y="489" width="1" height="3" fill="#ff8a10"/><rect x="616" y="460" width="1" height="3" fill="#ff7a10"/><rect x="642" y="477" width="3" height="3" fill="#ff7a10"/><rect x="636" y="512" width="3" height="3" fill="#ff8a10"/><rect x="607" y="484" width="3" height="3" fill="#30e8e8"/><rect x="665" y="459" width="2" height="2" fill="#ffd400"/><rect x="607" y="460" width="1" height="4" fill="#ffe020"/><rect x="633" y="504" width="1" height="4" fill="#30e8e8"/><rect x="627" y="504" width="3" height="4" fill="#ffd400"/><rect x="636" y="488" width="1" height="3" fill="#ffd400"/><rect x="636" y="466" width="3" height="2" fill="#ffd400"/><rect x="645" y="513" width="1" height="1" fill="#ff7a10"/><rect x="640" y="462" width="1" height="1" fill="#ff7a10"/><rect x="635" y="471" width="3" height="4" fill="#ff8a10"/><rect x="643" y="488" width="2" height="1" fill="#ff7a10"/><rect x="635" y="461" width="1" height="1" fill="#ff7a10"/><rect x="611" y="460" width="1" height="1" fill="#ff8a10"/><rect x="647" y="492" width="2" height="3" fill="#ff7a10"/><rect x="653" y="506" width="3" height="4" fill="#ff7a10"/><rect x="598" y="479" width="2" height="2" fill="#ff8a10"/><rect x="647" y="498" width="2" height="1" fill="#30e8e8"/><rect x="675" y="497" width="2" height="3" fill="#ff7a10"/><rect x="647" y="498" width="1" height="3" fill="#ff7a10"/><rect x="605" y="464" width="1" height="1" fill="#ff7a10"/><rect x="593" y="492" width="1" height="1" fill="#ff7a10"/><rect x="652" y="454" width="1" height="3" fill="#30e8e8"/><rect x="628" y="498" width="1" height="2" fill="#30e8e8"/><rect x="672" y="496" width="3" height="2" fill="#ff7a10"/><rect x="606" y="461" width="3" height="4" fill="#30e8e8"/><rect x="606" y="457" width="1" height="4" fill="#ff7a10"/><rect x="620" y="483" width="1" height="3" fill="#ff7a10"/><rect x="592" y="471" width="3" height="4" fill="#ffd400"/><rect x="608" y="486" width="3" height="3" fill="#ff7a10"/><rect x="609" y="500" width="1" height="1" fill="#ff7a10"/><rect x="593" y="487" width="3" height="3" fill="#ff7a10"/><rect x="661" y="504" width="3" height="1" fill="#ff7a10"/><rect x="647" y="485" width="3" height="4" fill="#ff7a10"/><rect x="642" y="486" width="3" height="2" fill="#ffd400"/><rect x="652" y="486" width="3" height="2" fill="#ff7a10"/><rect x="644" y="497" width="3" height="1" fill="#ff7a10"/><rect x="667" y="481" width="1" height="2" fill="#ff7a10"/><rect x="646" y="508" width="3" height="1" fill="#ff8a10"/><rect x="607" y="500" width="2" height="4" fill="#ff7a10"/><rect x="638" y="463" width="1" height="2" fill="#30e8e8"/><rect x="613" y="510" width="2" height="1" fill="#ff7a10"/><rect x="640" y="493" width="1" height="1" fill="#ff7a10"/><rect x="645" y="478" width="3" height="4" fill="#ffe020"/><rect x="626" y="514" width="2" height="4" fill="#ff7a10"/><rect x="608" y="502" width="3" height="1" fill="#30e8e8"/><rect x="630" y="488" width="3" height="4" fill="#ffe020"/><rect x="649" y="507" width="3" height="4" fill="#ffe020"/><rect x="638" y="492" width="1" height="1" fill="#ffe020"/><rect x="665" y="492" width="1" height="3" fill="#ff8a10"/><rect x="668" y="494" width="1" height="2" fill="#ffe020"/><rect x="598" y="463" width="1" height="1" fill="#ff8a10"/><rect x="627" y="463" width="1" height="2" fill="#ffd400"/><rect x="633" y="504" width="3" height="3" fill="#ff7a10"/><rect x="655" y="502" width="1" height="1" fill="#ff7a10"/><rect x="637" y="500" width="3" height="3" fill="#ff7a10"/><rect x="622" y="502" width="1" height="1" fill="#30e8e8"/><rect x="649" y="454" width="1" height="2" fill="#ffd400"/><rect x="668" y="489" width="2" height="1" fill="#ff7a10"/><rect x="608" y="500" width="3" height="2" fill="#ff7a10"/><rect x="652" y="491" width="3" height="1" fill="#ff7a10"/><rect x="642" y="480" width="3" height="1" fill="#ff7a10"/><rect x="625" y="511" width="1" height="1" fill="#ff7a10"/><rect x="646" y="476" width="3" height="3" fill="#ff7a10"/><rect x="605" y="490" width="1" height="4" fill="#30e8e8"/><rect x="658" y="494" width="3" height="3" fill="#ff7a10"/><rect x="647" y="464" width="3" height="3" fill="#ff7a10"/><rect x="645" y="471" width="2" height="2" fill="#ff7a10"/><rect x="633" y="490" width="1" height="2" fill="#ff7a10"/><rect x="662" y="473" width="2" height="1" fill="#ffd400"/><rect x="669" y="488" width="2" height="2" fill="#ff8a10"/><rect x="667" y="472" width="3" height="1" fill="#30e8e8"/><rect x="613" y="496" width="3" height="3" fill="#ffd400"/><rect x="590" y="483" width="1" height="2" fill="#30e8e8"/><rect x="643" y="475" width="1" height="3" fill="#ff7a10"/><rect x="651" y="502" width="2" height="2" fill="#ff7a10"/><rect x="641" y="491" width="2" height="2" fill="#ff7a10"/><rect x="656" y="489" width="3" height="1" fill="#ff7a10"/><rect x="637" y="508" width="3" height="4" fill="#ffd400"/><rect x="671" y="479" width="2" height="1" fill="#ff7a10"/><rect x="655" y="465" width="2" height="1" fill="#ff7a10"/><rect x="615" y="492" width="1" height="1" fill="#ffd400"/><rect x="670" y="469" width="1" height="4" fill="#ffd400"/><rect x="600" y="498" width="2" height="4" fill="#ffd400"/><rect x="628" y="494" width="3" height="4" fill="#ff7a10"/><rect x="633" y="463" width="1" height="1" fill="#ffe020"/><rect x="612" y="479" width="1" height="4" fill="#ff7a10"/><rect x="619" y="458" width="2" height="2" fill="#ff8a10"/><rect x="610" y="500" width="1" height="3" fill="#ffe020"/><rect x="671" y="478" width="1" height="1" fill="#ffd400"/><rect x="641" y="459" width="3" height="4" fill="#ff7a10"/><rect x="611" y="464" width="3" height="1" fill="#ff7a10"/><rect x="612" y="455" width="2" height="2" fill="#ff8a10"/><rect x="616" y="473" width="3" height="4" fill="#ffe020"/><rect x="664" y="486" width="3" height="1" fill="#ffd400"/><rect x="607" y="478" width="2" height="4" fill="#30e8e8"/><rect x="646" y="490" width="2" height="2" fill="#ff7a10"/><rect x="674" y="472" width="2" height="3" fill="#ff7a10"/><rect x="660" y="485" width="2" height="2" fill="#ff7a10"/><rect x="633" y="494" width="2" height="2" fill="#ffe020"/><rect x="648" y="496" width="3" height="1" fill="#ff7a10"/><rect x="632" y="491" width="1" height="2" fill="#ff7a10"/><rect x="619" y="512" width="2" height="4" fill="#ffd400"/><rect x="640" y="483" width="2" height="2" fill="#ff7a10"/><rect x="597" y="500" width="1" height="2" fill="#ff7a10"/><rect x="627" y="481" width="1" height="2" fill="#ff7a10"/><rect x="616" y="462" width="2" height="4" fill="#ff8a10"/><rect x="649" y="495" width="3" height="2" fill="#ff7a10"/><rect x="617" y="480" width="3" height="4" fill="#ff7a10"/><rect x="627" y="472" width="1" height="2" fill="#ff8a10"/><rect x="655" y="472" width="2" height="3" fill="#ffd400"/><rect x="616" y="465" width="1" height="3" fill="#ffe020"/><rect x="630" y="479" width="3" height="3" fill="#30e8e8"/><rect x="650" y="472" width="1" height="3" fill="#ff7a10"/><rect x="616" y="461" width="3" height="1" fill="#ff7a10"/><rect x="624" y="504" width="2" height="2" fill="#ff7a10"/><rect x="666" y="504" width="2" height="3" fill="#ff7a10"/><rect x="652" y="497" width="1" height="2" fill="#ff8a10"/><rect x="635" y="469" width="2" height="4" fill="#ff8a10"/><rect x="633" y="470" width="3" height="3" fill="#ffe020"/><rect x="649" y="474" width="1" height="2" fill="#ffe020"/><rect x="627" y="505" width="3" height="2" fill="#ffd400"/><rect x="654" y="495" width="1" height="4" fill="#ff8a10"/><rect x="655" y="508" width="3" height="1" fill="#ffe020"/><rect x="660" y="486" width="1" height="4" fill="#ff7a10"/><rect x="651" y="465" width="1" height="2" fill="#ff7a10"/><rect x="643" y="488" width="2" height="2" fill="#ff8a10"/><rect x="663" y="479" width="3" height="4" fill="#ff7a10"/><rect x="650" y="507" width="2" height="1" fill="#ffe020"/><rect x="589" y="480" width="3" height="4" fill="#ff7a10"/><rect x="658" y="475" width="1" height="3" fill="#30e8e8"/><rect x="617" y="456" width="3" height="4" fill="#ff8a10"/><rect x="666" y="475" width="1" height="2" fill="#30e8e8"/><rect x="625" y="459" width="1" height="1" fill="#ff7a10"/><rect x="659" y="489" width="3" height="4" fill="#30e8e8"/><rect x="668" y="478" width="1" height="1" fill="#ffe020"/><rect x="638" y="464" width="3" height="3" fill="#ffd400"/><rect x="616" y="508" width="1" height="1" fill="#ff7a10"/><rect x="624" y="491" width="2" height="2" fill="#ff7a10"/><rect x="642" y="498" width="2" height="3" fill="#30e8e8"/><rect x="589" y="486" width="1" height="2" fill="#ff8a10"/><rect x="599" y="496" width="1" height="4" fill="#ff7a10"/><rect x="637" y="458" width="3" height="3" fill="#ff7a10"/><rect x="661" y="492" width="3" height="2" fill="#ffe020"/><rect x="665" y="483" width="2" height="4" fill="#ffd400"/><rect x="648" y="494" width="2" height="3" fill="#ff7a10"/><rect x="659" y="506" width="2" height="3" fill="#ffe020"/><rect x="641" y="482" width="3" height="4" fill="#ff8a10"/><rect x="613" y="480" width="2" height="3" fill="#ffe020"/><rect x="667" y="474" width="1" height="3" fill="#ff7a10"/><rect x="633" y="459" width="3" height="2" fill="#ff8a10"/><rect x="632" y="460" width="1" height="3" fill="#ffe020"/><rect x="653" y="481" width="3" height="2" fill="#ff8a10"/><rect x="605" y="459" width="3" height="4" fill="#30e8e8"/><rect x="628" y="490" width="3" height="2" fill="#ff7a10"/><rect x="643" y="501" width="2" height="4" fill="#ff7a10"/><rect x="643" y="463" width="2" height="3" fill="#ff7a10"/><rect x="628" y="482" width="1" height="3" fill="#ffe020"/><rect x="639" y="508" width="1" height="1" fill="#30e8e8"/><rect x="629" y="452" width="1" height="4" fill="#ff7a10"/><rect x="654" y="489" width="3" height="2" fill="#ff7a10"/><rect x="602" y="460" width="3" height="4" fill="#ffe020"/><rect x="666" y="489" width="3" height="1" fill="#ff8a10"/><rect x="605" y="482" width="2" height="2" fill="#ff8a10"/><rect x="625" y="506" width="1" height="4" fill="#ff7a10"/><rect x="627" y="496" width="1" height="3" fill="#30e8e8"/><rect x="669" y="471" width="2" height="2" fill="#ff7a10"/><rect x="666" y="469" width="1" height="4" fill="#ffd400"/><rect x="653" y="501" width="2" height="1" fill="#ff7a10"/><rect x="644" y="512" width="2" height="3" fill="#ffe020"/><rect x="618" y="464" width="1" height="1" fill="#30e8e8"/><rect x="652" y="500" width="2" height="4" fill="#ff7a10"/><rect x="608" y="470" width="1" height="1" fill="#ffd400"/><rect x="670" y="502" width="2" height="1" fill="#ffd400"/><rect x="592" y="481" width="3" height="4" fill="#30e8e8"/><rect x="621" y="477" width="3" height="3" fill="#ff8a10"/><rect x="610" y="486" width="1" height="1" fill="#ff7a10"/><rect x="598" y="476" width="1" height="3" fill="#ff7a10"/><rect x="655" y="476" width="2" height="4" fill="#ffd400"/><rect x="621" y="503" width="2" height="1" fill="#ffe020"/><rect x="594" y="483" width="2" height="2" fill="#30e8e8"/><rect x="615" y="504" width="3" height="3" fill="#ff7a10"/><rect x="646" y="513" width="3" height="3" fill="#30e8e8"/><rect x="626" y="461" width="2" height="4" fill="#ff7a10"/><rect x="673" y="466" width="3" height="2" fill="#ff7a10"/><rect x="658" y="462" width="1" height="1" fill="#ffd400"/><rect x="670" y="495" width="1" height="1" fill="#ff8a10"/><rect x="638" y="459" width="2" height="4" fill="#ff7a10"/><rect x="614" y="496" width="1" height="2" fill="#30e8e8"/><rect x="613" y="463" width="2" height="1" fill="#ff8a10"/><rect x="639" y="512" width="2" height="1" fill="#30e8e8"/><rect x="603" y="486" width="1" height="4" fill="#30e8e8"/><rect x="659" y="473" width="1" height="3" fill="#ff7a10"/><rect x="630" y="495" width="2" height="3" fill="#ffe020"/><rect x="613" y="464" width="1" height="1" fill="#ff7a10"/><rect x="644" y="512" width="1" height="1" fill="#ff7a10"/><rect x="673" y="468" width="1" height="2" fill="#ff7a10"/><rect x="639" y="506" width="1" height="1" fill="#ff7a10"/><rect x="649" y="478" width="1" height="3" fill="#ff7a10"/><rect x="660" y="467" width="2" height="2" fill="#ffd400"/><rect x="598" y="492" width="1" height="2" fill="#ffd400"/><rect x="618" y="494" width="1" height="1" fill="#ff7a10"/><rect x="623" y="453" width="2" height="1" fill="#ff7a10"/><rect x="626" y="513" width="2" height="4" fill="#ffe020"/><rect x="623" y="484" width="3" height="1" fill="#ffd400"/><rect x="670" y="482" width="1" height="1" fill="#ffe020"/><rect x="641" y="458" width="1" height="4" fill="#ff8a10"/><rect x="616" y="502" width="1" height="4" fill="#ff8a10"/><rect x="657" y="458" width="3" height="2" fill="#ff7a10"/><rect x="627" y="486" width="2" height="2" fill="#ff7a10"/><rect x="601" y="496" width="3" height="1" fill="#30e8e8"/><rect x="627" y="463" width="1" height="2" fill="#ff7a10"/><rect x="671" y="462" width="2" height="4" fill="#30e8e8"/><rect x="599" y="488" width="3" height="3" fill="#ff7a10"/><rect x="635" y="497" width="2" height="3" fill="#ff7a10"/><rect x="618" y="499" width="2" height="1" fill="#30e8e8"/><rect x="625" y="454" width="2" height="3" fill="#ffd400"/><rect x="669" y="491" width="1" height="2" fill="#ff7a10"/><rect x="644" y="498" width="2" height="2" fill="#ffe020"/><rect x="633" y="481" width="1" height="2" fill="#ff7a10"/><rect x="652" y="509" width="1" height="3" fill="#ff7a10"/><rect x="675" y="482" width="2" height="2" fill="#ffe020"/><rect x="607" y="468" width="3" height="1" fill="#ff7a10"/><rect x="667" y="465" width="3" height="2" fill="#ff8a10"/><rect x="621" y="504" width="1" height="4" fill="#30e8e8"/><rect x="594" y="492" width="2" height="4" fill="#ff7a10"/><rect x="627" y="464" width="3" height="4" fill="#ff7a10"/><rect x="600" y="470" width="1" height="4" fill="#ffd400"/><rect x="608" y="489" width="2" height="2" fill="#ff8a10"/><rect x="634" y="491" width="2" height="3" fill="#ffd400"/><rect x="612" y="479" width="3" height="1" fill="#ffe020"/><rect x="640" y="512" width="1" height="1" fill="#ff7a10"/>
<ellipse cx="636" cy="480" rx="16" ry="12" fill="#ff7010" shape-rendering="auto"/>
<ellipse cx="632" cy="478" rx="5" ry="4.5" fill="#ffa828" shape-rendering="auto"/>
<rect x="646" y="453" width="4" height="16" fill="#1040e8"/><rect x="649" y="466" width="3" height="32" fill="#2050f0"/><rect x="652" y="470" width="3" height="12" fill="#2050f0"/><rect x="620" y="457" width="2" height="10" fill="#1030d0"/><rect x="607" y="466" width="2" height="7" fill="#2040e0"/><rect x="651" y="500" width="2" height="5" fill="#2050f0"/>
<rect x="683" y="427" width="3" height="10" fill="#ff2010"/><rect x="529" y="514" width="3" height="16" fill="#e01010"/><rect x="532" y="520" width="2" height="10" fill="#a01010"/><rect x="524" y="532" width="22" height="2" fill="#c02010"/><rect x="527" y="534" width="14" height="1" fill="#ff6010"/><rect x="719" y="512" width="3" height="18" fill="#ff2010"/><rect x="729" y="433" width="3" height="12" fill="#ff2010"/><rect x="545" y="410" width="4" height="10" fill="#ff2010"/><rect x="707" y="512" width="2" height="4" fill="#ff2010"/>
<g shape-rendering="auto">
<ellipse cx="259" cy="556" rx="83" ry="77" fill="#ffae00" filter="url(#b5)"/>
<ellipse cx="259" cy="556" rx="77" ry="71" fill="none" stroke="#ffd000" stroke-width="4" filter="url(#b3)" opacity="0.8"/>
<ellipse cx="259" cy="556" rx="75" ry="69" fill="#ff8414"/>
<clipPath id="ctop"><rect x="180" y="480" width="160" height="53"/></clipPath>
<ellipse cx="257" cy="556" rx="68" ry="70" fill="#f01c0c" clip-path="url(#ctop)"/>
<clipPath id="ctop2"><rect x="180" y="480" width="66" height="53"/></clipPath>
<ellipse cx="257" cy="556" rx="66" ry="64" fill="#d81a10" clip-path="url(#ctop2)"/>
<clipPath id="cbotc"><rect x="180" y="533" width="160" height="100"/></clipPath>
<clipPath id="cell"><ellipse cx="259" cy="556" rx="74" ry="68"/></clipPath>
<g clip-path="url(#cbotc)"><g clip-path="url(#cell)">
<path d="M190 533 L325 533 L330 548 L300 565 L255 560 L210 552 L188 545Z" fill="#f0e838" opacity="0.6"/>
<path d="M262 533 L328 533 L332 555 L318 570 L290 575 L270 560Z" fill="#48e8d8" opacity="0.85"/>
<path d="M205 545 L240 540 L250 556 L225 560Z" fill="#60e8c0" opacity="0.8"/>
<path d="M186 548 L200 552 L230 580 L262 606 L300 612 L288 624 L250 626 L215 606 L192 580Z" fill="#ff6410"/>
<path d="M196 562 L214 575 L240 598 L232 604 L205 585Z" fill="#f04a10"/>
<path d="M306 566 L330 560 L328 592 L310 612 L296 610Z" fill="#ff7c12"/>
<path d="M250 596 L282 590 L290 604 L276 614 L256 612Z" fill="#50ecc0"/>
<path d="M282 590 L300 580 L306 596 L290 604Z" fill="#d8f848"/>
<ellipse cx="258" cy="562" rx="26" ry="21" fill="none" stroke="#ffd020" stroke-width="4" opacity="0.7"/>
<ellipse cx="258" cy="562" rx="35" ry="29" fill="none" stroke="#ff8a14" stroke-width="3" opacity="0.6"/>
</g></g></g>
<rect x="263" y="603" width="2" height="6" fill="#40e8d0"/><rect x="266" y="559" width="2" height="6" fill="#ff7010"/><rect x="266" y="620" width="2" height="5" fill="#ff7010"/><rect x="242" y="537" width="1" height="6" fill="#ffb818"/><rect x="253" y="561" width="1" height="6" fill="#ff8010"/><rect x="317" y="571" width="2" height="6" fill="#40e8d0"/><rect x="211" y="591" width="1" height="4" fill="#ff7010"/><rect x="280" y="570" width="2" height="5" fill="#ffe020"/><rect x="204" y="584" width="2" height="6" fill="#80f0a0"/><rect x="315" y="553" width="2" height="6" fill="#ffe020"/><rect x="255" y="572" width="2" height="2" fill="#ffb818"/><rect x="249" y="570" width="1" height="4" fill="#ffe020"/><rect x="220" y="574" width="1" height="6" fill="#ff8010"/><rect x="248" y="547" width="2" height="6" fill="#ffb818"/><rect x="191" y="554" width="1" height="2" fill="#40e8d0"/><rect x="298" y="585" width="2" height="4" fill="#ffe020"/><rect x="238" y="540" width="2" height="4" fill="#ff8010"/><rect x="243" y="574" width="2" height="5" fill="#ff7010"/><rect x="313" y="594" width="2" height="5" fill="#80f0a0"/><rect x="300" y="540" width="2" height="6" fill="#40e8d0"/><rect x="227" y="604" width="2" height="2" fill="#80f0a0"/><rect x="222" y="590" width="1" height="4" fill="#ffe020"/><rect x="204" y="567" width="2" height="5" fill="#40e8d0"/><rect x="276" y="558" width="1" height="4" fill="#ffb818"/><rect x="259" y="599" width="2" height="3" fill="#80f0a0"/><rect x="234" y="583" width="2" height="4" fill="#40e8d0"/><rect x="264" y="536" width="1" height="4" fill="#ff8010"/><rect x="204" y="556" width="1" height="4" fill="#40e8d0"/><rect x="276" y="595" width="1" height="2" fill="#ffb818"/><rect x="310" y="583" width="2" height="4" fill="#ffe020"/><rect x="263" y="578" width="1" height="4" fill="#80f0a0"/><rect x="274" y="587" width="1" height="6" fill="#ffb818"/><rect x="245" y="575" width="2" height="5" fill="#40e8d0"/><rect x="234" y="590" width="2" height="2" fill="#ff7010"/><rect x="283" y="544" width="2" height="6" fill="#ff8010"/><rect x="304" y="553" width="1" height="2" fill="#ffb818"/><rect x="249" y="592" width="1" height="6" fill="#ffe020"/><rect x="282" y="552" width="1" height="2" fill="#ffe020"/><rect x="318" y="561" width="2" height="3" fill="#ffe020"/><rect x="203" y="588" width="1" height="4" fill="#80f0a0"/><rect x="306" y="601" width="2" height="2" fill="#80f0a0"/><rect x="241" y="579" width="1" height="3" fill="#80f0a0"/><rect x="261" y="589" width="1" height="5" fill="#ffe020"/><rect x="293" y="566" width="2" height="2" fill="#40e8d0"/><rect x="200" y="566" width="1" height="3" fill="#ff8010"/><rect x="274" y="560" width="1" height="2" fill="#ff7010"/><rect x="212" y="552" width="2" height="2" fill="#ffe020"/><rect x="226" y="597" width="2" height="4" fill="#80f0a0"/><rect x="253" y="619" width="1" height="3" fill="#ff7010"/><rect x="205" y="537" width="1" height="6" fill="#ff7010"/><rect x="277" y="591" width="2" height="2" fill="#80f0a0"/><rect x="226" y="588" width="2" height="5" fill="#ffb818"/><rect x="301" y="543" width="1" height="3" fill="#ff8010"/><rect x="204" y="544" width="2" height="3" fill="#ff8010"/><rect x="202" y="583" width="2" height="6" fill="#40e8d0"/><rect x="236" y="561" width="2" height="2" fill="#ffb818"/><rect x="301" y="586" width="2" height="3" fill="#ff8010"/><rect x="263" y="596" width="1" height="6" fill="#80f0a0"/><rect x="311" y="591" width="1" height="4" fill="#ffe020"/><rect x="272" y="537" width="2" height="4" fill="#ff8010"/><rect x="317" y="569" width="1" height="2" fill="#80f0a0"/><rect x="239" y="549" width="1" height="6" fill="#80f0a0"/><rect x="236" y="599" width="1" height="3" fill="#ff8010"/><rect x="258" y="606" width="2" height="2" fill="#40e8d0"/><rect x="236" y="578" width="1" height="5" fill="#ff7010"/><rect x="205" y="561" width="1" height="2" fill="#ffe020"/><rect x="212" y="557" width="2" height="6" fill="#ffb818"/><rect x="256" y="584" width="2" height="3" fill="#80f0a0"/><rect x="288" y="533" width="2" height="5" fill="#40e8d0"/><rect x="275" y="602" width="2" height="5" fill="#ffe020"/><rect x="306" y="554" width="1" height="5" fill="#80f0a0"/><rect x="252" y="547" width="1" height="5" fill="#ffb818"/><rect x="321" y="573" width="1" height="3" fill="#ffe020"/><rect x="272" y="586" width="1" height="4" fill="#ffe020"/><rect x="266" y="568" width="2" height="2" fill="#ffe020"/><rect x="256" y="537" width="2" height="4" fill="#ff8010"/><rect x="304" y="566" width="2" height="2" fill="#ffb818"/><rect x="297" y="563" width="2" height="2" fill="#ff7010"/><rect x="272" y="603" width="2" height="3" fill="#ff7010"/><rect x="236" y="550" width="1" height="5" fill="#40e8d0"/><rect x="308" y="595" width="1" height="6" fill="#40e8d0"/><rect x="298" y="542" width="2" height="4" fill="#40e8d0"/><rect x="317" y="536" width="2" height="6" fill="#ff8010"/><rect x="237" y="551" width="2" height="2" fill="#ff7010"/><rect x="232" y="545" width="1" height="3" fill="#ffb818"/><rect x="214" y="601" width="1" height="2" fill="#ff7010"/><rect x="282" y="546" width="2" height="6" fill="#40e8d0"/><rect x="250" y="582" width="2" height="3" fill="#ff7010"/><rect x="253" y="536" width="2" height="4" fill="#ffe020"/><rect x="288" y="576" width="1" height="2" fill="#ff8010"/><rect x="224" y="560" width="2" height="4" fill="#ffb818"/><rect x="302" y="541" width="2" height="5" fill="#ff8010"/><rect x="272" y="538" width="1" height="2" fill="#40e8d0"/><rect x="302" y="591" width="2" height="5" fill="#80f0a0"/><rect x="237" y="543" width="1" height="6" fill="#ff7010"/><rect x="209" y="548" width="2" height="4" fill="#ffe020"/><rect x="261" y="545" width="2" height="5" fill="#ff7010"/><rect x="233" y="612" width="2" height="6" fill="#40e8d0"/><rect x="319" y="557" width="1" height="5" fill="#ffb818"/><rect x="284" y="601" width="1" height="6" fill="#ffe020"/><rect x="274" y="612" width="2" height="2" fill="#ffb818"/><rect x="278" y="541" width="1" height="2" fill="#ff8010"/><rect x="238" y="580" width="2" height="6" fill="#ff8010"/><rect x="298" y="560" width="2" height="3" fill="#40e8d0"/><rect x="313" y="584" width="1" height="4" fill="#ff8010"/><rect x="290" y="556" width="1" height="5" fill="#ff8010"/><rect x="235" y="608" width="1" height="3" fill="#ff7010"/><rect x="242" y="559" width="1" height="5" fill="#ff7010"/><rect x="243" y="597" width="2" height="5" fill="#ffb818"/><rect x="286" y="611" width="2" height="4" fill="#ffb818"/><rect x="231" y="587" width="1" height="4" fill="#ff8010"/><rect x="230" y="563" width="1" height="3" fill="#ffe020"/><rect x="242" y="538" width="1" height="5" fill="#80f0a0"/><rect x="242" y="557" width="2" height="5" fill="#ff8010"/><rect x="254" y="567" width="1" height="3" fill="#ffb818"/><rect x="224" y="579" width="1" height="3" fill="#ff8010"/><rect x="298" y="581" width="2" height="6" fill="#ffe020"/><rect x="307" y="597" width="1" height="4" fill="#80f0a0"/><rect x="250" y="612" width="2" height="5" fill="#ff7010"/><rect x="259" y="589" width="2" height="4" fill="#40e8d0"/><rect x="306" y="585" width="1" height="2" fill="#ff8010"/><rect x="279" y="560" width="1" height="5" fill="#ffe020"/><rect x="311" y="573" width="1" height="5" fill="#40e8d0"/><rect x="234" y="593" width="1" height="5" fill="#40e8d0"/><rect x="241" y="603" width="1" height="4" fill="#ff7010"/><rect x="277" y="594" width="2" height="6" fill="#80f0a0"/><rect x="231" y="602" width="1" height="5" fill="#ff7010"/><rect x="295" y="538" width="2" height="3" fill="#ff7010"/><rect x="205" y="574" width="2" height="3" fill="#40e8d0"/><rect x="200" y="554" width="2" height="5" fill="#ffb818"/><rect x="286" y="563" width="2" height="2" fill="#ff8010"/><rect x="286" y="574" width="1" height="6" fill="#ffb818"/><rect x="238" y="590" width="1" height="5" fill="#ff8010"/><rect x="239" y="586" width="1" height="3" fill="#ff7010"/><rect x="260" y="570" width="1" height="6" fill="#ffe020"/><rect x="282" y="554" width="1" height="3" fill="#40e8d0"/><rect x="194" y="554" width="1" height="5" fill="#40e8d0"/><rect x="267" y="572" width="1" height="2" fill="#ff8010"/><rect x="279" y="613" width="1" height="5" fill="#ff8010"/><rect x="209" y="590" width="1" height="5" fill="#ffb818"/><rect x="229" y="597" width="1" height="4" fill="#ff7010"/><rect x="214" y="545" width="1" height="4" fill="#ffb818"/><rect x="232" y="593" width="2" height="5" fill="#ff8010"/><rect x="263" y="540" width="1" height="3" fill="#80f0a0"/><rect x="219" y="608" width="1" height="5" fill="#40e8d0"/><rect x="227" y="568" width="1" height="3" fill="#40e8d0"/><rect x="312" y="552" width="2" height="4" fill="#ffb818"/><rect x="320" y="536" width="2" height="5" fill="#ff7010"/><rect x="208" y="565" width="2" height="2" fill="#ff8010"/><rect x="267" y="574" width="1" height="4" fill="#ffb818"/><rect x="242" y="556" width="1" height="3" fill="#ff7010"/><rect x="223" y="571" width="1" height="4" fill="#ffb818"/><rect x="287" y="589" width="2" height="2" fill="#ff7010"/><rect x="272" y="599" width="2" height="5" fill="#ffb818"/><rect x="322" y="548" width="1" height="5" fill="#40e8d0"/><rect x="241" y="596" width="1" height="4" fill="#80f0a0"/><rect x="294" y="547" width="2" height="4" fill="#ff8010"/><rect x="249" y="586" width="1" height="2" fill="#80f0a0"/><rect x="293" y="590" width="1" height="3" fill="#80f0a0"/><rect x="262" y="555" width="2" height="4" fill="#ff7010"/><rect x="272" y="554" width="1" height="2" fill="#ffe020"/><rect x="248" y="616" width="1" height="5" fill="#ff8010"/><rect x="246" y="585" width="2" height="4" fill="#ff7010"/><rect x="253" y="565" width="1" height="6" fill="#ff8010"/><rect x="259" y="580" width="2" height="6" fill="#ff7010"/><rect x="265" y="562" width="1" height="5" fill="#ff8010"/><rect x="217" y="580" width="2" height="3" fill="#ffe020"/><rect x="282" y="567" width="1" height="5" fill="#80f0a0"/><rect x="253" y="588" width="1" height="6" fill="#40e8d0"/><rect x="240" y="598" width="2" height="3" fill="#ff7010"/><rect x="250" y="549" width="1" height="5" fill="#80f0a0"/><rect x="302" y="596" width="1" height="5" fill="#40e8d0"/><rect x="195" y="550" width="2" height="3" fill="#ffb818"/><rect x="244" y="591" width="2" height="5" fill="#ffb818"/><rect x="245" y="586" width="2" height="4" fill="#ff8010"/><rect x="302" y="565" width="1" height="5" fill="#ff7010"/><rect x="263" y="584" width="1" height="2" fill="#ff8010"/><rect x="295" y="557" width="1" height="5" fill="#ffb818"/><rect x="254" y="600" width="2" height="6" fill="#40e8d0"/><rect x="233" y="546" width="1" height="3" fill="#ff7010"/><rect x="293" y="599" width="2" height="5" fill="#ffb818"/><rect x="244" y="537" width="1" height="3" fill="#ff8010"/><rect x="239" y="604" width="1" height="2" fill="#ffe020"/><rect x="233" y="552" width="2" height="2" fill="#ffe020"/><rect x="233" y="567" width="2" height="2" fill="#ff8010"/><rect x="277" y="574" width="2" height="4" fill="#ffe020"/><rect x="308" y="537" width="1" height="4" fill="#ffe020"/><rect x="326" y="555" width="1" height="4" fill="#ffe020"/><rect x="197" y="539" width="2" height="5" fill="#ff8010"/><rect x="299" y="561" width="2" height="6" fill="#ffb818"/><rect x="217" y="582" width="2" height="3" fill="#40e8d0"/><rect x="198" y="543" width="2" height="3" fill="#ffe020"/><rect x="239" y="612" width="2" height="4" fill="#ffe020"/><rect x="272" y="536" width="1" height="5" fill="#80f0a0"/><rect x="237" y="538" width="1" height="3" fill="#80f0a0"/><rect x="315" y="553" width="2" height="2" fill="#80f0a0"/><rect x="209" y="567" width="1" height="6" fill="#40e8d0"/><rect x="228" y="535" width="2" height="4" fill="#80f0a0"/><rect x="228" y="600" width="2" height="4" fill="#40e8d0"/><rect x="256" y="578" width="1" height="4" fill="#80f0a0"/><rect x="227" y="569" width="2" height="4" fill="#ffe020"/><rect x="197" y="544" width="2" height="6" fill="#80f0a0"/><rect x="301" y="569" width="2" height="2" fill="#80f0a0"/><rect x="263" y="595" width="1" height="4" fill="#ffe020"/><rect x="243" y="555" width="1" height="5" fill="#ff7010"/><rect x="252" y="553" width="2" height="5" fill="#40e8d0"/><rect x="199" y="579" width="1" height="6" fill="#ffb818"/><rect x="220" y="557" width="2" height="2" fill="#ff8010"/><rect x="240" y="540" width="1" height="4" fill="#ff8010"/><rect x="231" y="567" width="2" height="6" fill="#ff8010"/><rect x="220" y="569" width="1" height="5" fill="#ffb818"/><rect x="231" y="597" width="2" height="3" fill="#80f0a0"/><rect x="196" y="565" width="1" height="2" fill="#40e8d0"/><rect x="269" y="561" width="2" height="2" fill="#40e8d0"/><rect x="192" y="560" width="2" height="3" fill="#ff7010"/><rect x="222" y="585" width="2" height="5" fill="#ff7010"/><rect x="246" y="606" width="1" height="2" fill="#ffb818"/><rect x="204" y="576" width="1" height="2" fill="#40e8d0"/><rect x="230" y="611" width="1" height="4" fill="#ffb818"/><rect x="265" y="592" width="2" height="2" fill="#ffb818"/><rect x="305" y="571" width="1" height="6" fill="#80f0a0"/><rect x="296" y="536" width="2" height="6" fill="#40e8d0"/><rect x="267" y="604" width="1" height="6" fill="#40e8d0"/><rect x="207" y="546" width="2" height="6" fill="#40e8d0"/><rect x="264" y="571" width="2" height="3" fill="#ff7010"/><rect x="196" y="558" width="1" height="5" fill="#ffe020"/><rect x="306" y="598" width="1" height="4" fill="#ff7010"/><rect x="264" y="567" width="1" height="5" fill="#ff7010"/><rect x="237" y="578" width="2" height="4" fill="#40e8d0"/><rect x="254" y="609" width="1" height="3" fill="#40e8d0"/><rect x="267" y="598" width="1" height="3" fill="#80f0a0"/><rect x="228" y="559" width="2" height="6" fill="#ffb818"/><rect x="265" y="609" width="2" height="6" fill="#80f0a0"/><rect x="208" y="544" width="2" height="5" fill="#ffb818"/><rect x="246" y="569" width="2" height="5" fill="#80f0a0"/><rect x="287" y="559" width="2" height="5" fill="#80f0a0"/><rect x="270" y="613" width="2" height="5" fill="#ff7010"/><rect x="306" y="555" width="1" height="5" fill="#ffe020"/><rect x="228" y="602" width="2" height="2" fill="#80f0a0"/><rect x="244" y="576" width="2" height="6" fill="#40e8d0"/><rect x="297" y="606" width="2" height="2" fill="#40e8d0"/><rect x="265" y="575" width="2" height="6" fill="#80f0a0"/><rect x="194" y="540" width="2" height="2" fill="#ffb818"/><rect x="214" y="578" width="2" height="5" fill="#40e8d0"/><rect x="239" y="576" width="1" height="6" fill="#40e8d0"/><rect x="247" y="579" width="2" height="3" fill="#ffb818"/><rect x="214" y="545" width="2" height="2" fill="#ff7010"/><rect x="247" y="537" width="1" height="5" fill="#80f0a0"/><rect x="245" y="566" width="2" height="3" fill="#40e8d0"/><rect x="281" y="548" width="2" height="4" fill="#ff8010"/><rect x="227" y="569" width="1" height="4" fill="#ffb818"/><rect x="215" y="536" width="1" height="3" fill="#ffe020"/><rect x="319" y="551" width="2" height="2" fill="#ffb818"/><rect x="305" y="587" width="1" height="5" fill="#ff8010"/><rect x="247" y="575" width="1" height="2" fill="#ffe020"/><rect x="218" y="554" width="2" height="6" fill="#ff7010"/><rect x="212" y="537" width="2" height="4" fill="#ff7010"/><rect x="209" y="543" width="1" height="2" fill="#ff7010"/><rect x="303" y="564" width="1" height="3" fill="#ff8010"/><rect x="193" y="554" width="2" height="4" fill="#ffb818"/><rect x="308" y="569" width="2" height="3" fill="#ffb818"/><rect x="282" y="576" width="1" height="5" fill="#ffb818"/><rect x="226" y="571" width="2" height="6" fill="#ff8010"/><rect x="275" y="565" width="1" height="2" fill="#ffb818"/><rect x="279" y="557" width="2" height="5" fill="#80f0a0"/><rect x="207" y="539" width="2" height="3" fill="#ff7010"/><rect x="258" y="553" width="2" height="3" fill="#40e8d0"/><rect x="298" y="558" width="2" height="4" fill="#ffb818"/><rect x="308" y="590" width="1" height="6" fill="#ff7010"/><rect x="207" y="574" width="1" height="5" fill="#40e8d0"/><rect x="201" y="573" width="1" height="3" fill="#40e8d0"/><rect x="282" y="590" width="2" height="6" fill="#ff7010"/><rect x="301" y="590" width="2" height="2" fill="#ffe020"/><rect x="270" y="558" width="1" height="3" fill="#40e8d0"/><rect x="212" y="569" width="2" height="3" fill="#ffb818"/><rect x="215" y="550" width="1" height="3" fill="#40e8d0"/><rect x="312" y="592" width="1" height="5" fill="#80f0a0"/><rect x="222" y="552" width="1" height="3" fill="#80f0a0"/><rect x="214" y="604" width="1" height="5" fill="#ff8010"/><rect x="314" y="580" width="2" height="2" fill="#ffb818"/><rect x="306" y="559" width="1" height="6" fill="#ff8010"/><rect x="312" y="572" width="2" height="5" fill="#40e8d0"/><rect x="247" y="590" width="2" height="6" fill="#ffe020"/><rect x="316" y="589" width="1" height="3" fill="#ff8010"/><rect x="261" y="581" width="1" height="3" fill="#ff7010"/><rect x="307" y="582" width="1" height="5" fill="#80f0a0"/><rect x="310" y="578" width="2" height="4" fill="#ff8010"/><rect x="220" y="541" width="2" height="6" fill="#ff7010"/><rect x="295" y="542" width="2" height="5" fill="#ff7010"/><rect x="287" y="575" width="2" height="5" fill="#ff7010"/><rect x="274" y="556" width="1" height="5" fill="#ff7010"/><rect x="268" y="574" width="2" height="4" fill="#ffe020"/><rect x="219" y="573" width="2" height="5" fill="#80f0a0"/><rect x="247" y="561" width="2" height="4" fill="#ffb818"/><rect x="294" y="533" width="1" height="3" fill="#80f0a0"/><rect x="263" y="584" width="1" height="5" fill="#80f0a0"/><rect x="256" y="536" width="2" height="5" fill="#ff7010"/><rect x="224" y="587" width="1" height="5" fill="#ff7010"/><rect x="216" y="588" width="1" height="2" fill="#ffb818"/><rect x="281" y="613" width="1" height="3" fill="#ffb818"/><rect x="220" y="584" width="1" height="2" fill="#ff8010"/><rect x="242" y="613" width="2" height="3" fill="#ff7010"/><rect x="290" y="600" width="2" height="5" fill="#ffb818"/><rect x="241" y="595" width="2" height="6" fill="#ff8010"/><rect x="325" y="563" width="2" height="3" fill="#40e8d0"/><rect x="295" y="551" width="1" height="5" fill="#ff8010"/><rect x="260" y="586" width="1" height="2" fill="#40e8d0"/><rect x="240" y="587" width="1" height="6" fill="#ffe020"/><rect x="259" y="553" width="2" height="3" fill="#ffb818"/><rect x="313" y="534" width="1" height="4" fill="#80f0a0"/><rect x="239" y="585" width="1" height="3" fill="#40e8d0"/><rect x="292" y="584" width="2" height="4" fill="#ff8010"/><rect x="214" y="549" width="2" height="4" fill="#ffe020"/><rect x="248" y="538" width="2" height="6" fill="#ff7010"/><rect x="263" y="611" width="1" height="2" fill="#80f0a0"/><rect x="277" y="588" width="1" height="3" fill="#80f0a0"/><rect x="248" y="575" width="1" height="5" fill="#40e8d0"/>
<rect x="317" y="557" width="1" height="6" fill="#ffe020"/><rect x="301" y="552" width="1" height="6" fill="#ff8a14"/><rect x="207" y="541" width="2" height="5" fill="#e8f040"/><rect x="310" y="542" width="2" height="6" fill="#50e8d0"/><rect x="241" y="549" width="1" height="7" fill="#60e8c8"/><rect x="258" y="554" width="2" height="3" fill="#e8f040"/><rect x="201" y="547" width="1" height="7" fill="#ff8a14"/><rect x="284" y="541" width="2" height="5" fill="#ff8a14"/><rect x="242" y="534" width="1" height="9" fill="#60e8c8"/><rect x="315" y="574" width="1" height="6" fill="#ff9a18"/><rect x="205" y="565" width="2" height="5" fill="#e8f040"/><rect x="303" y="575" width="2" height="8" fill="#ff8a14"/><rect x="205" y="565" width="1" height="4" fill="#ff8a14"/><rect x="230" y="561" width="1" height="9" fill="#ffb018"/><rect x="197" y="552" width="1" height="7" fill="#ffb018"/><rect x="236" y="552" width="2" height="9" fill="#60e8c8"/><rect x="289" y="535" width="1" height="8" fill="#ffe020"/><rect x="282" y="535" width="2" height="4" fill="#50e8d0"/><rect x="253" y="555" width="2" height="4" fill="#60e8c8"/><rect x="312" y="546" width="1" height="9" fill="#50e8d0"/><rect x="267" y="548" width="2" height="4" fill="#60e8c8"/><rect x="231" y="548" width="1" height="5" fill="#60e8c8"/><rect x="200" y="572" width="2" height="7" fill="#e8f040"/><rect x="247" y="573" width="2" height="9" fill="#ffb018"/><rect x="321" y="560" width="1" height="7" fill="#50e8d0"/><rect x="253" y="536" width="2" height="7" fill="#60e8c8"/><rect x="278" y="554" width="2" height="9" fill="#ff9a18"/><rect x="310" y="575" width="1" height="9" fill="#ff8a14"/><rect x="305" y="566" width="2" height="8" fill="#ff9a18"/><rect x="219" y="545" width="1" height="7" fill="#60e8c8"/><rect x="190" y="541" width="1" height="8" fill="#ffb018"/><rect x="255" y="557" width="2" height="5" fill="#ffb018"/><rect x="305" y="562" width="1" height="5" fill="#ffe020"/><rect x="233" y="559" width="2" height="9" fill="#60e8c8"/><rect x="215" y="553" width="2" height="5" fill="#e8f040"/><rect x="239" y="537" width="1" height="5" fill="#ff8a14"/><rect x="239" y="534" width="1" height="6" fill="#ffb018"/><rect x="236" y="541" width="2" height="7" fill="#ffb018"/><rect x="258" y="555" width="1" height="3" fill="#ffb018"/><rect x="286" y="547" width="2" height="7" fill="#50e8d0"/><rect x="240" y="566" width="2" height="7" fill="#e8f040"/><rect x="211" y="552" width="2" height="3" fill="#e8f040"/><rect x="321" y="568" width="1" height="5" fill="#ffe020"/><rect x="233" y="539" width="1" height="9" fill="#ff8a14"/><rect x="248" y="536" width="2" height="9" fill="#ffb018"/><rect x="288" y="569" width="1" height="5" fill="#50e8d0"/><rect x="216" y="571" width="2" height="6" fill="#ff8a14"/><rect x="322" y="563" width="2" height="7" fill="#ff9a18"/><rect x="296" y="567" width="2" height="8" fill="#50e8d0"/><rect x="231" y="541" width="2" height="8" fill="#ff8a14"/><rect x="225" y="540" width="2" height="4" fill="#ffb018"/><rect x="271" y="553" width="2" height="4" fill="#ffe020"/><rect x="308" y="575" width="2" height="3" fill="#ff9a18"/><rect x="244" y="538" width="2" height="9" fill="#60e8c8"/><rect x="227" y="568" width="2" height="8" fill="#e8f040"/><rect x="212" y="548" width="1" height="5" fill="#60e8c8"/><rect x="316" y="565" width="2" height="8" fill="#ff9a18"/><rect x="217" y="562" width="2" height="8" fill="#ffb018"/><rect x="283" y="543" width="1" height="5" fill="#50e8d0"/><rect x="254" y="561" width="1" height="8" fill="#ff8a14"/><rect x="263" y="573" width="1" height="8" fill="#e8f040"/><rect x="311" y="535" width="2" height="5" fill="#2050e0"/><rect x="241" y="564" width="1" height="5" fill="#ffb018"/><rect x="304" y="553" width="2" height="5" fill="#ff9a18"/><rect x="213" y="569" width="2" height="3" fill="#ffb018"/><rect x="306" y="534" width="2" height="9" fill="#ff8a14"/><rect x="269" y="552" width="1" height="7" fill="#e8f040"/><rect x="235" y="567" width="2" height="8" fill="#e8f040"/><rect x="312" y="553" width="1" height="3" fill="#50e8d0"/><rect x="252" y="564" width="2" height="7" fill="#ff8a14"/><rect x="312" y="558" width="2" height="5" fill="#ff9a18"/><rect x="272" y="560" width="2" height="9" fill="#ffe020"/><rect x="197" y="537" width="1" height="4" fill="#ffb018"/><rect x="279" y="561" width="1" height="4" fill="#50e8d0"/><rect x="214" y="565" width="1" height="6" fill="#e8f040"/><rect x="193" y="538" width="2" height="4" fill="#e8f040"/><rect x="302" y="551" width="1" height="3" fill="#ff8a14"/><rect x="203" y="537" width="2" height="8" fill="#ffb018"/><rect x="216" y="542" width="2" height="3" fill="#e8f040"/><rect x="261" y="540" width="1" height="4" fill="#e8f040"/><rect x="229" y="570" width="1" height="9" fill="#ffb018"/><rect x="278" y="568" width="2" height="3" fill="#ff9a18"/><rect x="213" y="559" width="2" height="3" fill="#ffb018"/><rect x="315" y="569" width="1" height="7" fill="#50e8d0"/><rect x="289" y="557" width="2" height="3" fill="#50e8d0"/><rect x="203" y="544" width="2" height="4" fill="#ff8a14"/><rect x="248" y="569" width="1" height="4" fill="#60e8c8"/><rect x="204" y="553" width="2" height="3" fill="#e8f040"/><rect x="206" y="544" width="2" height="9" fill="#ffb018"/><rect x="203" y="572" width="1" height="9" fill="#ffb018"/><rect x="224" y="568" width="2" height="6" fill="#e8f040"/><rect x="231" y="568" width="1" height="9" fill="#60e8c8"/><rect x="274" y="537" width="2" height="5" fill="#ff8a14"/><rect x="200" y="545" width="1" height="9" fill="#60e8c8"/><rect x="288" y="559" width="2" height="8" fill="#ff8a14"/><rect x="311" y="568" width="2" height="3" fill="#50e8d0"/><rect x="239" y="569" width="2" height="4" fill="#ff8a14"/><rect x="236" y="558" width="2" height="4" fill="#e8f040"/><rect x="226" y="562" width="1" height="6" fill="#ff8a14"/><rect x="245" y="573" width="2" height="8" fill="#ffb018"/><rect x="218" y="555" width="2" height="6" fill="#60e8c8"/><rect x="303" y="567" width="1" height="4" fill="#ff8a14"/><rect x="224" y="555" width="2" height="5" fill="#e8f040"/><rect x="274" y="550" width="2" height="7" fill="#50e8d0"/><rect x="330" y="556" width="2" height="3" fill="#50e8d0"/><rect x="315" y="537" width="2" height="7" fill="#ff9a18"/><rect x="227" y="553" width="1" height="4" fill="#e8f040"/><rect x="309" y="563" width="2" height="4" fill="#ff8a14"/><rect x="273" y="563" width="1" height="8" fill="#ffe020"/><rect x="232" y="564" width="2" height="8" fill="#60e8c8"/><rect x="200" y="558" width="1" height="8" fill="#ff8a14"/><rect x="196" y="551" width="2" height="7" fill="#e8f040"/><rect x="312" y="552" width="1" height="4" fill="#ff8a14"/><rect x="244" y="570" width="2" height="3" fill="#ffb018"/><rect x="215" y="563" width="1" height="8" fill="#60e8c8"/><rect x="206" y="557" width="2" height="8" fill="#ff8a14"/><rect x="234" y="560" width="2" height="6" fill="#60e8c8"/><rect x="297" y="542" width="1" height="5" fill="#ff8a14"/><rect x="202" y="568" width="2" height="3" fill="#e8f040"/><rect x="279" y="534" width="1" height="5" fill="#ffe020"/><rect x="321" y="571" width="1" height="8" fill="#ffe020"/><rect x="225" y="552" width="1" height="3" fill="#ff8a14"/><rect x="313" y="544" width="1" height="4" fill="#ff8a14"/><rect x="234" y="566" width="1" height="6" fill="#ffb018"/><rect x="324" y="548" width="2" height="8" fill="#50e8d0"/><rect x="244" y="568" width="2" height="4" fill="#60e8c8"/><rect x="243" y="548" width="1" height="9" fill="#ffb018"/><rect x="253" y="548" width="1" height="5" fill="#ffb018"/><rect x="203" y="573" width="2" height="7" fill="#60e8c8"/><rect x="279" y="555" width="1" height="6" fill="#ff8a14"/><rect x="217" y="568" width="1" height="5" fill="#60e8c8"/><rect x="320" y="542" width="1" height="8" fill="#2050e0"/><rect x="265" y="563" width="1" height="4" fill="#60e8c8"/><rect x="280" y="547" width="1" height="3" fill="#ff9a18"/><rect x="247" y="534" width="2" height="5" fill="#ff8a14"/><rect x="243" y="575" width="2" height="5" fill="#60e8c8"/><rect x="238" y="558" width="1" height="9" fill="#60e8c8"/><rect x="290" y="542" width="2" height="7" fill="#50e8d0"/><rect x="222" y="552" width="1" height="8" fill="#60e8c8"/><rect x="305" y="554" width="1" height="7" fill="#ffe020"/><rect x="286" y="548" width="1" height="3" fill="#ff8a14"/><rect x="199" y="559" width="1" height="4" fill="#60e8c8"/><rect x="242" y="545" width="2" height="8" fill="#ffb018"/><rect x="330" y="558" width="1" height="8" fill="#50e8d0"/><rect x="314" y="551" width="1" height="9" fill="#ff9a18"/><rect x="223" y="574" width="1" height="5" fill="#ff8a14"/><rect x="310" y="555" width="2" height="6" fill="#50e8d0"/><rect x="312" y="546" width="2" height="6" fill="#ff9a18"/><rect x="318" y="539" width="2" height="3" fill="#ffe020"/><rect x="325" y="564" width="1" height="9" fill="#ffe020"/><rect x="224" y="547" width="2" height="8" fill="#ff8a14"/><rect x="246" y="534" width="2" height="5" fill="#60e8c8"/><rect x="212" y="568" width="1" height="4" fill="#ff8a14"/><rect x="215" y="566" width="1" height="6" fill="#ff8a14"/><rect x="253" y="573" width="2" height="4" fill="#ff8a14"/><rect x="236" y="555" width="2" height="7" fill="#60e8c8"/><rect x="194" y="558" width="2" height="7" fill="#e8f040"/><rect x="282" y="560" width="1" height="8" fill="#ffe020"/><rect x="256" y="548" width="2" height="9" fill="#ff8a14"/><rect x="240" y="535" width="2" height="7" fill="#e8f040"/><rect x="234" y="558" width="1" height="7" fill="#60e8c8"/><rect x="210" y="573" width="1" height="5" fill="#e8f040"/><rect x="307" y="552" width="1" height="7" fill="#50e8d0"/><rect x="232" y="549" width="2" height="4" fill="#60e8c8"/><rect x="212" y="544" width="1" height="7" fill="#60e8c8"/><rect x="199" y="535" width="2" height="7" fill="#e8f040"/><rect x="230" y="558" width="2" height="8" fill="#e8f040"/><rect x="229" y="553" width="1" height="9" fill="#e8f040"/><rect x="261" y="542" width="1" height="4" fill="#60e8c8"/><rect x="240" y="542" width="2" height="7" fill="#e8f040"/><rect x="227" y="573" width="1" height="3" fill="#ff8a14"/><rect x="275" y="538" width="2" height="9" fill="#ffe020"/><rect x="323" y="539" width="1" height="5" fill="#ff9a18"/><rect x="215" y="539" width="1" height="7" fill="#ffb018"/><rect x="286" y="561" width="2" height="5" fill="#ff9a18"/><rect x="285" y="547" width="2" height="5" fill="#50e8d0"/><rect x="288" y="556" width="1" height="5" fill="#50e8d0"/><rect x="208" y="571" width="2" height="8" fill="#ffb018"/><rect x="249" y="549" width="2" height="3" fill="#ff8a14"/><rect x="314" y="552" width="2" height="6" fill="#2050e0"/><rect x="265" y="549" width="2" height="5" fill="#ff8a14"/><rect x="296" y="541" width="1" height="3" fill="#ff9a18"/><rect x="197" y="546" width="2" height="7" fill="#e8f040"/><rect x="273" y="563" width="2" height="3" fill="#ff8a14"/><rect x="312" y="542" width="2" height="5" fill="#2050e0"/><rect x="243" y="559" width="2" height="6" fill="#60e8c8"/><rect x="300" y="542" width="2" height="8" fill="#50e8d0"/><rect x="311" y="555" width="1" height="4" fill="#ff8a14"/><rect x="322" y="545" width="2" height="5" fill="#50e8d0"/><rect x="262" y="553" width="1" height="6" fill="#e8f040"/><rect x="289" y="546" width="1" height="6" fill="#ff9a18"/><rect x="317" y="537" width="1" height="8" fill="#ff9a18"/><rect x="317" y="565" width="1" height="9" fill="#ffe020"/><rect x="324" y="562" width="1" height="9" fill="#ff8a14"/><rect x="291" y="565" width="2" height="5" fill="#ff8a14"/><rect x="275" y="539" width="2" height="8" fill="#50e8d0"/><rect x="229" y="544" width="1" height="7" fill="#60e8c8"/><rect x="313" y="563" width="1" height="6" fill="#50e8d0"/><rect x="269" y="549" width="2" height="8" fill="#ff8a14"/><rect x="306" y="534" width="2" height="5" fill="#ff8a14"/><rect x="247" y="565" width="2" height="5" fill="#60e8c8"/><rect x="277" y="568" width="2" height="3" fill="#ff9a18"/><rect x="262" y="567" width="1" height="5" fill="#ff8a14"/><rect x="310" y="560" width="1" height="5" fill="#ff9a18"/><rect x="265" y="535" width="1" height="9" fill="#e8f040"/><rect x="267" y="539" width="1" height="8" fill="#ffb018"/><rect x="269" y="554" width="2" height="8" fill="#60e8c8"/><rect x="242" y="564" width="2" height="3" fill="#e8f040"/><rect x="243" y="565" width="2" height="6" fill="#ffb018"/><rect x="298" y="549" width="2" height="9" fill="#ff8a14"/><rect x="301" y="548" width="1" height="4" fill="#ffe020"/><rect x="294" y="542" width="2" height="7" fill="#ff8a14"/><rect x="240" y="569" width="2" height="8" fill="#e8f040"/><rect x="327" y="549" width="2" height="9" fill="#ffe020"/><rect x="246" y="563" width="2" height="3" fill="#ff8a14"/><rect x="253" y="556" width="1" height="3" fill="#ff8a14"/><rect x="329" y="549" width="2" height="9" fill="#2050e0"/><rect x="229" y="543" width="1" height="6" fill="#e8f040"/><rect x="267" y="566" width="2" height="8" fill="#e8f040"/><rect x="325" y="558" width="1" height="4" fill="#ff9a18"/><rect x="282" y="551" width="2" height="8" fill="#ff9a18"/><rect x="235" y="546" width="2" height="4" fill="#ffb018"/><rect x="227" y="555" width="1" height="9" fill="#ff8a14"/><rect x="276" y="550" width="2" height="4" fill="#ffe020"/><rect x="305" y="536" width="1" height="8" fill="#2050e0"/><rect x="306" y="559" width="1" height="3" fill="#50e8d0"/><rect x="276" y="564" width="1" height="6" fill="#ff8a14"/><rect x="302" y="553" width="1" height="9" fill="#ff9a18"/><rect x="196" y="543" width="2" height="3" fill="#ff8a14"/><rect x="194" y="552" width="2" height="6" fill="#ffb018"/><rect x="211" y="573" width="2" height="8" fill="#e8f040"/><rect x="286" y="553" width="2" height="9" fill="#50e8d0"/><rect x="197" y="553" width="1" height="9" fill="#60e8c8"/><rect x="325" y="535" width="1" height="4" fill="#ff9a18"/><rect x="317" y="545" width="1" height="8" fill="#50e8d0"/><rect x="224" y="555" width="2" height="3" fill="#ffb018"/><rect x="326" y="546" width="1" height="9" fill="#ffe020"/><rect x="193" y="546" width="1" height="6" fill="#ff8a14"/><rect x="257" y="542" width="2" height="3" fill="#e8f040"/><rect x="238" y="554" width="1" height="8" fill="#60e8c8"/><rect x="207" y="543" width="1" height="7" fill="#ff8a14"/><rect x="219" y="571" width="2" height="3" fill="#ffb018"/><rect x="316" y="575" width="1" height="9" fill="#ff9a18"/><rect x="234" y="541" width="2" height="4" fill="#e8f040"/><rect x="242" y="536" width="1" height="4" fill="#60e8c8"/><rect x="271" y="548" width="2" height="6" fill="#ff8a14"/><rect x="268" y="568" width="2" height="8" fill="#ff8a14"/><rect x="247" y="567" width="1" height="4" fill="#ffb018"/><rect x="279" y="539" width="2" height="3" fill="#ff8a14"/><rect x="215" y="544" width="2" height="3" fill="#ff8a14"/><rect x="230" y="565" width="2" height="7" fill="#60e8c8"/><rect x="271" y="564" width="1" height="5" fill="#ffe020"/><rect x="256" y="571" width="2" height="9" fill="#ffb018"/><rect x="271" y="559" width="1" height="6" fill="#ff8a14"/><rect x="262" y="556" width="2" height="8" fill="#ffb018"/><rect x="312" y="574" width="1" height="6" fill="#ff9a18"/><rect x="196" y="569" width="1" height="6" fill="#60e8c8"/>
<rect x="227" y="506" width="2" height="3" fill="#ff6a10"/>
<rect x="262" y="489" width="3" height="3" fill="#ff6a10"/>
<rect x="304" y="510" width="2" height="3" fill="#ff8414"/>
<rect x="229" y="504" width="3" height="2" fill="#ff8414"/>
<rect x="297" y="507" width="4" height="3" fill="#ff8414"/>
<rect x="319" y="527" width="3" height="4" fill="#ff8414"/>
<rect x="315" y="521" width="4" height="3" fill="#ff6a10"/>
<rect x="227" y="497" width="4" height="3" fill="#ff8414"/>
<rect x="285" y="502" width="3" height="3" fill="#ff6a10"/>
<rect x="305" y="512" width="2" height="2" fill="#ff6a10"/>
<rect x="253" y="489" width="3" height="4" fill="#ff8414"/>
<rect x="199" y="523" width="4" height="4" fill="#ff8414"/>
<rect x="305" y="515" width="4" height="3" fill="#ff6a10"/>
<rect x="316" y="522" width="2" height="3" fill="#ff6a10"/>
<rect x="302" y="509" width="2" height="3" fill="#ff6a10"/>
<rect x="314" y="523" width="2" height="2" fill="#ff8414"/>
<rect x="308" y="513" width="3" height="4" fill="#ff6a10"/>
<rect x="312" y="524" width="4" height="4" fill="#ff8414"/>
<rect x="241" y="492" width="4" height="4" fill="#ff8414"/>
<rect x="259" y="493" width="2" height="4" fill="#ff8414"/>
<rect x="196" y="529" width="2" height="4" fill="#ff6a10"/>
<rect x="216" y="509" width="4" height="2" fill="#ff8414"/>
<rect x="200" y="530" width="4" height="4" fill="#ff8414"/>
<rect x="229" y="500" width="4" height="3" fill="#ff8414"/>
<rect x="250" y="496" width="4" height="4" fill="#ff8414"/>
<rect x="270" y="495" width="2" height="3" fill="#ff6a10"/>
<rect x="318" y="531" width="2" height="2" fill="#ff8414"/>
<rect x="306" y="518" width="3" height="3" fill="#ff8414"/>
<rect x="296" y="503" width="2" height="4" fill="#ff8414"/>
<rect x="247" y="498" width="2" height="4" fill="#ff6a10"/>
<rect x="294" y="500" width="4" height="2" fill="#ff6a10"/>
<rect x="259" y="491" width="3" height="2" fill="#ff6a10"/>
<rect x="313" y="519" width="4" height="4" fill="#ff8414"/>
<rect x="245" y="495" width="4" height="4" fill="#ff6a10"/>
<rect x="220" y="506" width="2" height="3" fill="#ff8414"/>
<rect x="203" y="523" width="3" height="4" fill="#ff6a10"/>
<rect x="247" y="495" width="2" height="2" fill="#ff8414"/>
<rect x="233" y="499" width="2" height="4" fill="#ff8414"/>
<rect x="201" y="527" width="3" height="4" fill="#ff8414"/>
<rect x="320" y="527" width="2" height="4" fill="#ff8414"/>
<rect x="267" y="489" width="2" height="4" fill="#ff8414"/>
<rect x="201" y="523" width="3" height="4" fill="#ff6a10"/>
<rect x="317" y="520" width="2" height="2" fill="#ff6a10"/>
<rect x="210" y="511" width="2" height="3" fill="#ff6a10"/>
<rect x="299" y="503" width="3" height="2" fill="#ff8414"/>
<rect x="233" y="499" width="4" height="2" fill="#ff6a10"/>
<rect x="230" y="503" width="3" height="2" fill="#ff6a10"/>
<rect x="280" y="496" width="3" height="3" fill="#ff6a10"/>
<rect x="230" y="503" width="2" height="2" fill="#ff6a10"/>
<rect x="203" y="525" width="2" height="3" fill="#ff8414"/>
<rect x="250" y="496" width="3" height="4" fill="#ff6a10"/>
<rect x="246" y="490" width="3" height="2" fill="#ff8414"/>
<rect x="244" y="497" width="3" height="4" fill="#ff8414"/>
<rect x="242" y="493" width="3" height="2" fill="#ff8414"/>
<rect x="214" y="508" width="4" height="2" fill="#ff6a10"/>
<rect x="293" y="505" width="4" height="2" fill="#ff8414"/>
<rect x="278" y="500" width="4" height="2" fill="#ff6a10"/>
<rect x="273" y="499" width="2" height="3" fill="#ff6a10"/>
<rect x="299" y="506" width="2" height="2" fill="#ff6a10"/>
<rect x="253" y="495" width="4" height="4" fill="#ff8414"/>
<rect x="201" y="528" width="4" height="4" fill="#ff6a10"/>
<rect x="317" y="523" width="2" height="4" fill="#ff6a10"/>
<rect x="250" y="493" width="3" height="3" fill="#ff8414"/>
<rect x="234" y="497" width="2" height="4" fill="#ff6a10"/>
<rect x="298" y="507" width="3" height="3" fill="#ff8414"/>
<rect x="313" y="524" width="4" height="3" fill="#ff8414"/>
<rect x="217" y="503" width="3" height="3" fill="#ff8414"/>
<rect x="238" y="492" width="4" height="2" fill="#ff8414"/>
<rect x="268" y="620" width="3" height="1" fill="#e82010"/>
<rect x="316" y="590" width="2" height="1" fill="#e82010"/>
<rect x="208" y="601" width="1" height="3" fill="#e82010"/>
<rect x="240" y="616" width="2" height="2" fill="#e82010"/>
<rect x="321" y="580" width="2" height="1" fill="#e82010"/>
<rect x="321" y="588" width="1" height="3" fill="#e82010"/>
<rect x="195" y="567" width="3" height="2" fill="#e82010"/>
<rect x="195" y="561" width="3" height="2" fill="#e82010"/>
<rect x="310" y="601" width="1" height="2" fill="#e82010"/>
<rect x="255" y="619" width="1" height="1" fill="#e82010"/>
<rect x="193" y="580" width="2" height="3" fill="#e82010"/>
<rect x="228" y="613" width="2" height="2" fill="#e82010"/>
<rect x="323" y="562" width="3" height="3" fill="#e82010"/>
<rect x="240" y="615" width="3" height="1" fill="#e82010"/>
<rect x="298" y="612" width="3" height="2" fill="#e82010"/>
<rect x="325" y="581" width="1" height="3" fill="#e82010"/>
<rect x="277" y="617" width="2" height="3" fill="#e82010"/>
<rect x="218" y="607" width="3" height="3" fill="#e82010"/>
<rect x="329" y="572" width="3" height="1" fill="#e82010"/>
<rect x="220" y="604" width="3" height="2" fill="#e82010"/>
<rect x="221" y="606" width="1" height="2" fill="#e82010"/>
<rect x="276" y="618" width="2" height="3" fill="#e82010"/>
<rect x="210" y="602" width="1" height="2" fill="#e82010"/>
<rect x="309" y="601" width="1" height="1" fill="#e82010"/>
<rect x="272" y="622" width="3" height="1" fill="#e82010"/>
<rect x="196" y="587" width="2" height="2" fill="#e82010"/>
<rect x="295" y="617" width="1" height="3" fill="#e82010"/>
<rect x="203" y="586" width="1" height="3" fill="#e82010"/>
<rect x="226" y="609" width="1" height="2" fill="#e82010"/>
<rect x="241" y="622" width="3" height="3" fill="#e82010"/>
<rect x="278" y="619" width="3" height="1" fill="#e82010"/>
<rect x="206" y="595" width="3" height="1" fill="#e82010"/>
<rect x="328" y="574" width="2" height="3" fill="#e82010"/>
<rect x="210" y="601" width="1" height="2" fill="#e82010"/>
<rect x="249" y="617" width="2" height="3" fill="#e82010"/>
<rect x="322" y="586" width="1" height="2" fill="#e82010"/>
<rect x="262" y="623" width="2" height="1" fill="#e82010"/>
<rect x="269" y="624" width="3" height="2" fill="#e82010"/>
<rect x="324" y="583" width="2" height="3" fill="#e82010"/>
<rect x="326" y="566" width="1" height="1" fill="#e82010"/>
<rect x="197" y="579" width="2" height="2" fill="#e82010"/>
<rect x="285" y="612" width="1" height="1" fill="#e82010"/>
<rect x="192" y="583" width="2" height="1" fill="#e82010"/>
<rect x="225" y="609" width="1" height="2" fill="#e82010"/>
<rect x="314" y="589" width="1" height="2" fill="#e82010"/>
<rect x="236" y="618" width="2" height="3" fill="#e82010"/>
<rect x="321" y="579" width="2" height="3" fill="#e82010"/>
<rect x="285" y="612" width="2" height="2" fill="#e82010"/>
<rect x="293" y="614" width="1" height="2" fill="#e82010"/>
<rect x="199" y="588" width="1" height="2" fill="#e82010"/>
<path d="M248 549 L262 548 L268 556 L270 572 L258 576 L250 566Z" fill="#e81a10"/><rect x="249" y="566" width="6" height="4" fill="#801010"/><rect x="262" y="565" width="2" height="8" fill="#1040e0"/><rect x="300" y="538" width="2" height="7" fill="#2040e0"/><rect x="306" y="545" width="2" height="6" fill="#2040e0"/><rect x="292" y="548" width="2" height="5" fill="#2040e0"/>
<rect x="968" y="612" width="17" height="82" fill="#e81810"/>
<rect x="970" y="618" width="6" height="12" fill="#ffe020"/><rect x="975" y="632" width="7" height="35" fill="#ffe020"/><rect x="976" y="640" width="6" height="24" fill="#80e8a0"/><rect x="969" y="660" width="5" height="14" fill="#a01010"/><rect x="971" y="676" width="6" height="14" fill="#ffe020"/>
<rect x="154" y="690" width="1" height="4" fill="#ffee10"/><rect x="178" y="691" width="1" height="4" fill="#ffee10"/><rect x="181" y="683" width="1" height="7" fill="#ffee10"/><rect x="170" y="685" width="2" height="7" fill="#ffee10"/><rect x="148" y="669" width="3" height="2" fill="#ffee10"/><rect x="164" y="685" width="3" height="8" fill="#ffee10"/><rect x="163" y="688" width="1" height="7" fill="#ffee10"/><rect x="149" y="676" width="2" height="3" fill="#ffee10"/><rect x="147" y="677" width="1" height="6" fill="#ffee10"/><rect x="145" y="687" width="1" height="8" fill="#ffee10"/><rect x="150" y="681" width="1" height="6" fill="#ffee10"/><rect x="151" y="679" width="1" height="5" fill="#ffee10"/><rect x="149" y="671" width="1" height="7" fill="#ffee10"/><rect x="185" y="693" width="1" height="4" fill="#ffee10"/><rect x="181" y="683" width="1" height="7" fill="#ffee10"/><rect x="162" y="694" width="1" height="2" fill="#ffee10"/><rect x="178" y="686" width="3" height="6" fill="#ffee10"/><rect x="183" y="687" width="1" height="8" fill="#ffee10"/><rect x="168" y="690" width="3" height="4" fill="#ffee10"/><rect x="146" y="688" width="2" height="2" fill="#ffee10"/><rect x="151" y="683" width="1" height="6" fill="#ffee10"/><rect x="196" y="688" width="2" height="4" fill="#ffee10"/><rect x="160" y="693" width="2" height="6" fill="#ffee10"/><rect x="169" y="690" width="2" height="3" fill="#ffee10"/><rect x="148" y="693" width="1" height="4" fill="#ffee10"/><rect x="149" y="671" width="2" height="4" fill="#ffee10"/><rect x="185" y="693" width="2" height="4" fill="#ffee10"/><rect x="154" y="681" width="1" height="2" fill="#ffee10"/><rect x="153" y="677" width="1" height="7" fill="#ffee10"/><rect x="182" y="688" width="3" height="8" fill="#ffee10"/><rect x="156" y="686" width="3" height="6" fill="#ffee10"/><rect x="148" y="680" width="1" height="8" fill="#ffee10"/><rect x="146" y="670" width="2" height="6" fill="#ffee10"/><rect x="156" y="679" width="2" height="6" fill="#ffee10"/><rect x="149" y="684" width="3" height="6" fill="#ffee10"/><rect x="179" y="681" width="1" height="7" fill="#ffee10"/><rect x="182" y="693" width="1" height="7" fill="#ffee10"/><rect x="151" y="679" width="1" height="5" fill="#ffee10"/><rect x="161" y="678" width="2" height="8" fill="#ffee10"/><rect x="148" y="677" width="3" height="2" fill="#ffee10"/><rect x="150" y="666" width="1" height="2" fill="#ffee10"/><rect x="149" y="675" width="2" height="6" fill="#ffee10"/><rect x="153" y="692" width="1" height="4" fill="#ffee10"/><rect x="145" y="687" width="3" height="3" fill="#ffee10"/><rect x="146" y="672" width="3" height="2" fill="#ffee10"/><rect x="172" y="691" width="2" height="8" fill="#ffee10"/><rect x="165" y="690" width="3" height="2" fill="#ffee10"/><rect x="148" y="670" width="2" height="8" fill="#ffee10"/><rect x="145" y="693" width="2" height="8" fill="#ffee10"/><rect x="151" y="674" width="1" height="5" fill="#ffee10"/><rect x="168" y="689" width="2" height="5" fill="#ffee10"/><rect x="159" y="673" width="2" height="5" fill="#ffee10"/><rect x="156" y="681" width="1" height="3" fill="#ffee10"/><rect x="154" y="683" width="2" height="5" fill="#ffee10"/><rect x="170" y="685" width="2" height="2" fill="#ffee10"/><rect x="146" y="681" width="2" height="3" fill="#ffee10"/><rect x="151" y="686" width="2" height="6" fill="#ffee10"/><rect x="158" y="671" width="2" height="2" fill="#ffee10"/><rect x="151" y="675" width="3" height="2" fill="#ffee10"/><rect x="178" y="688" width="2" height="7" fill="#ffee10"/><rect x="183" y="690" width="3" height="7" fill="#ffee10"/><rect x="168" y="692" width="1" height="4" fill="#ffee10"/><rect x="157" y="670" width="2" height="7" fill="#ffee10"/><rect x="179" y="687" width="2" height="8" fill="#ffee10"/><rect x="151" y="673" width="3" height="5" fill="#ffee10"/><rect x="176" y="694" width="1" height="4" fill="#ffee10"/><rect x="155" y="685" width="3" height="6" fill="#ffee10"/><rect x="148" y="673" width="2" height="2" fill="#ffee10"/><rect x="172" y="680" width="3" height="6" fill="#ffee10"/><rect x="173" y="690" width="1" height="8" fill="#ffee10"/><rect x="149" y="688" width="2" height="5" fill="#ffee10"/><rect x="173" y="686" width="1" height="6" fill="#ffee10"/><rect x="151" y="670" width="3" height="2" fill="#ffee10"/><rect x="161" y="679" width="3" height="3" fill="#ffee10"/><rect x="159" y="694" width="1" height="2" fill="#ffee10"/><rect x="167" y="686" width="2" height="4" fill="#ffee10"/><rect x="175" y="685" width="2" height="3" fill="#ffee10"/><rect x="200" y="691" width="3" height="3" fill="#ffee10"/><rect x="186" y="688" width="3" height="5" fill="#ffee10"/><rect x="170" y="693" width="2" height="3" fill="#ffee10"/><rect x="164" y="679" width="1" height="8" fill="#ffee10"/><rect x="151" y="693" width="3" height="4" fill="#ffee10"/><rect x="161" y="683" width="2" height="6" fill="#ffee10"/><rect x="480" y="302" width="1" height="3" fill="#ee1c10"/><rect x="366" y="295" width="1" height="1" fill="#ee1c10"/><rect x="462" y="284" width="1" height="2" fill="#ee1c10"/><rect x="410" y="321" width="1" height="3" fill="#ee1c10"/><rect x="357" y="333" width="2" height="3" fill="#ee1c10"/><rect x="512" y="279" width="1" height="1" fill="#ee1c10"/><rect x="427" y="278" width="1" height="1" fill="#ee1c10"/><rect x="412" y="271" width="1" height="1" fill="#ee1c10"/><rect x="398" y="252" width="1" height="1" fill="#ee1c10"/><rect x="432" y="319" width="2" height="2" fill="#ee1c10"/><rect x="416" y="280" width="2" height="3" fill="#ee1c10"/><rect x="272" y="293" width="1" height="1" fill="#ee1c10"/><rect x="494" y="295" width="2" height="2" fill="#ee1c10"/><rect x="399" y="356" width="2" height="3" fill="#ee1c10"/><rect x="432" y="289" width="2" height="3" fill="#ee1c10"/><rect x="407" y="279" width="2" height="2" fill="#ee1c10"/><rect x="404" y="303" width="2" height="3" fill="#ee1c10"/><rect x="476" y="294" width="1" height="3" fill="#ee1c10"/><rect x="382" y="274" width="1" height="2" fill="#ee1c10"/><rect x="361" y="313" width="1" height="3" fill="#ee1c10"/><rect x="439" y="307" width="2" height="3" fill="#ee1c10"/><rect x="468" y="301" width="1" height="1" fill="#ee1c10"/><rect x="398" y="305" width="2" height="3" fill="#ee1c10"/><rect x="477" y="296" width="1" height="3" fill="#ee1c10"/><rect x="366" y="296" width="2" height="1" fill="#ee1c10"/><rect x="457" y="334" width="2" height="3" fill="#ee1c10"/><rect x="390" y="278" width="2" height="1" fill="#ee1c10"/><rect x="340" y="276" width="2" height="1" fill="#ee1c10"/><rect x="539" y="326" width="2" height="1" fill="#ee1c10"/><rect x="443" y="282" width="1" height="3" fill="#ee1c10"/><rect x="353" y="302" width="2" height="1" fill="#ee1c10"/><rect x="420" y="298" width="2" height="2" fill="#ee1c10"/><rect x="421" y="288" width="2" height="3" fill="#ee1c10"/><rect x="434" y="303" width="2" height="3" fill="#ee1c10"/><rect x="409" y="318" width="2" height="3" fill="#ee1c10"/><rect x="412" y="272" width="1" height="2" fill="#ee1c10"/><rect x="485" y="289" width="1" height="3" fill="#ee1c10"/><rect x="425" y="357" width="2" height="2" fill="#ee1c10"/><rect x="500" y="314" width="2" height="2" fill="#ee1c10"/><rect x="462" y="268" width="1" height="1" fill="#ee1c10"/><rect x="489" y="342" width="1" height="3" fill="#ee1c10"/><rect x="460" y="306" width="2" height="1" fill="#ee1c10"/><rect x="368" y="303" width="1" height="2" fill="#ee1c10"/><rect x="426" y="281" width="1" height="2" fill="#ee1c10"/><rect x="458" y="292" width="1" height="2" fill="#ee1c10"/><rect x="390" y="282" width="1" height="3" fill="#ee1c10"/><rect x="392" y="255" width="1" height="2" fill="#ee1c10"/><rect x="385" y="292" width="2" height="2" fill="#ee1c10"/><rect x="433" y="349" width="2" height="2" fill="#ee1c10"/><rect x="551" y="296" width="1" height="1" fill="#ee1c10"/><rect x="372" y="281" width="2" height="2" fill="#ee1c10"/><rect x="455" y="311" width="2" height="2" fill="#ee1c10"/><rect x="298" y="283" width="1" height="1" fill="#ee1c10"/><rect x="360" y="350" width="2" height="3" fill="#ee1c10"/><rect x="458" y="294" width="1" height="1" fill="#ee1c10"/><rect x="375" y="327" width="2" height="3" fill="#ee1c10"/><rect x="445" y="334" width="1" height="3" fill="#ee1c10"/><rect x="321" y="314" width="2" height="1" fill="#ee1c10"/><rect x="388" y="320" width="1" height="2" fill="#ee1c10"/><rect x="372" y="279" width="1" height="1" fill="#ee1c10"/><rect x="434" y="318" width="1" height="3" fill="#ee1c10"/><rect x="393" y="259" width="2" height="1" fill="#ee1c10"/><rect x="326" y="325" width="2" height="3" fill="#ee1c10"/><rect x="413" y="290" width="1" height="2" fill="#ee1c10"/><rect x="499" y="324" width="1" height="2" fill="#ee1c10"/><rect x="421" y="299" width="1" height="3" fill="#ee1c10"/><rect x="376" y="288" width="1" height="1" fill="#ee1c10"/><rect x="441" y="336" width="1" height="3" fill="#ee1c10"/><rect x="392" y="275" width="2" height="1" fill="#ee1c10"/><rect x="465" y="325" width="1" height="3" fill="#ee1c10"/><rect x="433" y="313" width="1" height="2" fill="#ee1c10"/><rect x="399" y="250" width="1" height="3" fill="#ee1c10"/><rect x="379" y="252" width="1" height="2" fill="#ee1c10"/><rect x="467" y="257" width="1" height="2" fill="#ee1c10"/><rect x="302" y="282" width="1" height="1" fill="#ee1c10"/><rect x="473" y="312" width="1" height="2" fill="#ee1c10"/><rect x="453" y="282" width="2" height="3" fill="#ee1c10"/><rect x="347" y="344" width="2" height="3" fill="#ee1c10"/><rect x="429" y="311" width="2" height="3" fill="#ee1c10"/><rect x="467" y="308" width="2" height="3" fill="#ee1c10"/><rect x="488" y="303" width="1" height="1" fill="#ee1c10"/><rect x="454" y="302" width="1" height="3" fill="#ee1c10"/><rect x="359" y="261" width="1" height="1" fill="#ee1c10"/><rect x="539" y="298" width="2" height="3" fill="#ee1c10"/><rect x="196" y="324" width="2" height="3" fill="#ee1c10"/><rect x="380" y="301" width="2" height="2" fill="#ee1c10"/><rect x="521" y="316" width="1" height="2" fill="#ee1c10"/><rect x="450" y="313" width="2" height="3" fill="#ee1c10"/><rect x="462" y="333" width="1" height="3" fill="#ee1c10"/><rect x="457" y="303" width="2" height="1" fill="#ee1c10"/><rect x="518" y="292" width="2" height="1" fill="#ee1c10"/><rect x="349" y="300" width="1" height="2" fill="#ee1c10"/><rect x="452" y="345" width="2" height="2" fill="#ee1c10"/><rect x="446" y="310" width="1" height="1" fill="#ee1c10"/><rect x="352" y="359" width="1" height="2" fill="#ee1c10"/><rect x="507" y="297" width="2" height="3" fill="#ee1c10"/><rect x="509" y="267" width="2" height="1" fill="#ee1c10"/><rect x="444" y="265" width="1" height="2" fill="#ee1c10"/><rect x="505" y="311" width="2" height="1" fill="#ee1c10"/><rect x="409" y="287" width="1" height="3" fill="#ee1c10"/><rect x="415" y="323" width="2" height="1" fill="#ee1c10"/><rect x="410" y="305" width="2" height="2" fill="#ee1c10"/><rect x="380" y="316" width="1" height="3" fill="#ee1c10"/><rect x="336" y="323" width="2" height="1" fill="#ee1c10"/><rect x="408" y="322" width="2" height="2" fill="#ee1c10"/><rect x="410" y="258" width="1" height="2" fill="#ee1c10"/><rect x="333" y="322" width="1" height="2" fill="#ee1c10"/><rect x="476" y="286" width="2" height="1" fill="#ee1c10"/><rect x="456" y="296" width="2" height="2" fill="#ee1c10"/><rect x="255" y="317" width="2" height="1" fill="#ee1c10"/><rect x="364" y="299" width="2" height="3" fill="#ee1c10"/><rect x="360" y="346" width="1" height="1" fill="#ee1c10"/><rect x="463" y="275" width="1" height="1" fill="#ee1c10"/><rect x="441" y="278" width="1" height="2" fill="#ee1c10"/><rect x="387" y="262" width="2" height="1" fill="#ee1c10"/><rect x="449" y="314" width="1" height="1" fill="#ee1c10"/><rect x="444" y="322" width="2" height="1" fill="#ee1c10"/><rect x="492" y="293" width="1" height="2" fill="#ee1c10"/><rect x="555" y="318" width="1" height="3" fill="#ee1c10"/><rect x="446" y="278" width="2" height="2" fill="#ee1c10"/><rect x="401" y="363" width="1" height="2" fill="#ee1c10"/><rect x="393" y="344" width="1" height="1" fill="#ee1c10"/><rect x="482" y="316" width="1" height="2" fill="#ee1c10"/><rect x="426" y="254" width="2" height="1" fill="#ee1c10"/><rect x="474" y="275" width="1" height="3" fill="#ee1c10"/><rect x="466" y="277" width="1" height="3" fill="#ee1c10"/><rect x="519" y="319" width="1" height="3" fill="#ee1c10"/><rect x="550" y="316" width="2" height="1" fill="#ee1c10"/><rect x="412" y="314" width="1" height="3" fill="#ee1c10"/><rect x="358" y="290" width="1" height="3" fill="#ee1c10"/><rect x="330" y="269" width="1" height="1" fill="#ee1c10"/><rect x="482" y="308" width="2" height="1" fill="#ee1c10"/><rect x="431" y="293" width="1" height="3" fill="#ee1c10"/><rect x="350" y="301" width="1" height="2" fill="#ee1c10"/><rect x="478" y="313" width="2" height="1" fill="#ee1c10"/><rect x="409" y="308" width="1" height="3" fill="#ee1c10"/><rect x="299" y="258" width="1" height="1" fill="#ee1c10"/><rect x="407" y="294" width="1" height="3" fill="#ee1c10"/><rect x="494" y="309" width="1" height="2" fill="#ee1c10"/><rect x="445" y="329" width="2" height="2" fill="#ee1c10"/><rect x="408" y="268" width="2" height="3" fill="#ee1c10"/><rect x="395" y="326" width="1" height="2" fill="#ee1c10"/><rect x="465" y="260" width="2" height="1" fill="#ee1c10"/><rect x="340" y="301" width="1" height="1" fill="#ee1c10"/><rect x="456" y="293" width="2" height="1" fill="#ee1c10"/><rect x="481" y="333" width="2" height="1" fill="#ee1c10"/><rect x="337" y="319" width="1" height="1" fill="#ee1c10"/><rect x="395" y="299" width="1" height="1" fill="#ee1c10"/><rect x="411" y="302" width="2" height="2" fill="#ee1c10"/><rect x="332" y="275" width="1" height="3" fill="#ee1c10"/><rect x="514" y="311" width="2" height="2" fill="#ee1c10"/><rect x="360" y="292" width="2" height="3" fill="#ee1c10"/><rect x="535" y="291" width="1" height="3" fill="#ee1c10"/><rect x="346" y="300" width="1" height="1" fill="#ee1c10"/><rect x="361" y="258" width="2" height="1" fill="#ee1c10"/><rect x="537" y="320" width="1" height="3" fill="#ee1c10"/><rect x="432" y="293" width="2" height="1" fill="#ee1c10"/><rect x="466" y="320" width="1" height="3" fill="#ee1c10"/><rect x="476" y="297" width="1" height="2" fill="#ee1c10"/><rect x="439" y="342" width="1" height="3" fill="#ee1c10"/><rect x="541" y="315" width="1" height="1" fill="#ee1c10"/><rect x="388" y="330" width="1" height="3" fill="#ee1c10"/><rect x="535" y="260" width="1" height="3" fill="#ee1c10"/><rect x="463" y="277" width="2" height="2" fill="#ee1c10"/><rect x="459" y="301" width="1" height="3" fill="#ee1c10"/><rect x="491" y="283" width="1" height="2" fill="#ee1c10"/><rect x="455" y="326" width="1" height="2" fill="#ee1c10"/><rect x="460" y="273" width="2" height="3" fill="#ee1c10"/><rect x="335" y="267" width="2" height="3" fill="#ee1c10"/><rect x="343" y="289" width="2" height="2" fill="#ee1c10"/><rect x="524" y="352" width="1" height="2" fill="#ee1c10"/><rect x="427" y="308" width="1" height="3" fill="#ee1c10"/><rect x="294" y="270" width="1" height="2" fill="#ee1c10"/><rect x="392" y="292" width="1" height="2" fill="#ee1c10"/><rect x="435" y="309" width="1" height="3" fill="#ee1c10"/><rect x="232" y="323" width="1" height="3" fill="#ee1c10"/><rect x="432" y="347" width="2" height="2" fill="#ee1c10"/><rect x="541" y="295" width="1" height="1" fill="#ee1c10"/><rect x="491" y="266" width="2" height="2" fill="#ee1c10"/><rect x="495" y="274" width="2" height="3" fill="#ee1c10"/><rect x="354" y="299" width="2" height="3" fill="#ee1c10"/><rect x="365" y="266" width="2" height="3" fill="#ee1c10"/><rect x="382" y="298" width="1" height="2" fill="#ee1c10"/><rect x="337" y="321" width="2" height="3" fill="#ee1c10"/><rect x="337" y="323" width="2" height="3" fill="#ee1c10"/><rect x="307" y="272" width="3" height="2" fill="#ee1c10"/><rect x="307" y="274" width="2" height="3" fill="#ee1c10"/><rect x="418" y="251" width="3" height="3" fill="#ee1c10"/><rect x="417" y="255" width="3" height="2" fill="#ee1c10"/><rect x="458" y="335" width="2" height="3" fill="#ee1c10"/><rect x="459" y="337" width="1" height="2" fill="#ee1c10"/><rect x="408" y="254" width="3" height="4" fill="#ee1c10"/><rect x="407" y="257" width="3" height="3" fill="#ee1c10"/><rect x="375" y="282" width="2" height="3" fill="#ee1c10"/><rect x="376" y="286" width="3" height="1" fill="#ee1c10"/><rect x="455" y="264" width="2" height="2" fill="#ee1c10"/><rect x="457" y="267" width="3" height="3" fill="#ee1c10"/><rect x="476" y="274" width="4" height="2" fill="#ee1c10"/><rect x="478" y="278" width="3" height="1" fill="#ee1c10"/><rect x="361" y="351" width="3" height="4" fill="#ee1c10"/><rect x="360" y="355" width="1" height="3" fill="#ee1c10"/><rect x="439" y="278" width="2" height="4" fill="#ee1c10"/><rect x="439" y="280" width="2" height="2" fill="#ee1c10"/><rect x="444" y="259" width="4" height="4" fill="#ee1c10"/><rect x="443" y="262" width="1" height="1" fill="#ee1c10"/><rect x="406" y="282" width="3" height="3" fill="#ee1c10"/><rect x="406" y="286" width="3" height="1" fill="#ee1c10"/><rect x="404" y="294" width="3" height="2" fill="#ee1c10"/><rect x="403" y="298" width="3" height="1" fill="#ee1c10"/><rect x="442" y="252" width="3" height="3" fill="#ee1c10"/><rect x="442" y="256" width="1" height="3" fill="#ee1c10"/><rect x="423" y="256" width="3" height="2" fill="#ee1c10"/><rect x="422" y="260" width="3" height="1" fill="#ee1c10"/><rect x="418" y="344" width="2" height="2" fill="#ee1c10"/><rect x="417" y="347" width="3" height="2" fill="#ee1c10"/><rect x="354" y="331" width="2" height="2" fill="#ee1c10"/><rect x="354" y="334" width="2" height="3" fill="#ee1c10"/><rect x="464" y="387" width="3" height="4" fill="#ee1c10"/><rect x="466" y="389" width="1" height="1" fill="#ee1c10"/><rect x="536" y="346" width="4" height="3" fill="#ee1c10"/><rect x="536" y="350" width="2" height="1" fill="#ee1c10"/><rect x="420" y="337" width="4" height="4" fill="#ee1c10"/><rect x="422" y="340" width="2" height="3" fill="#ee1c10"/><rect x="429" y="350" width="2" height="3" fill="#ee1c10"/><rect x="429" y="352" width="3" height="2" fill="#ee1c10"/><rect x="416" y="344" width="4" height="3" fill="#ee1c10"/><rect x="415" y="346" width="3" height="1" fill="#ee1c10"/><rect x="454" y="250" width="3" height="3" fill="#ee1c10"/><rect x="455" y="254" width="1" height="2" fill="#ee1c10"/><rect x="369" y="275" width="4" height="3" fill="#ee1c10"/><rect x="371" y="279" width="2" height="2" fill="#ee1c10"/><rect x="455" y="327" width="4" height="3" fill="#ee1c10"/><rect x="455" y="329" width="3" height="3" fill="#ee1c10"/><rect x="419" y="271" width="4" height="2" fill="#ee1c10"/><rect x="419" y="274" width="2" height="1" fill="#ee1c10"/><rect x="438" y="257" width="2" height="3" fill="#ee1c10"/><rect x="437" y="260" width="1" height="2" fill="#ee1c10"/><rect x="446" y="340" width="3" height="4" fill="#ee1c10"/><rect x="447" y="344" width="1" height="2" fill="#ee1c10"/><rect x="445" y="257" width="4" height="4" fill="#ee1c10"/><rect x="446" y="261" width="2" height="1" fill="#ee1c10"/><rect x="484" y="285" width="2" height="2" fill="#ee1c10"/><rect x="485" y="287" width="3" height="3" fill="#ee1c10"/><rect x="489" y="263" width="4" height="2" fill="#ee1c10"/><rect x="489" y="265" width="2" height="1" fill="#ee1c10"/><rect x="397" y="269" width="3" height="2" fill="#ee1c10"/><rect x="399" y="272" width="1" height="1" fill="#ee1c10"/><rect x="502" y="279" width="3" height="3" fill="#ee1c10"/><rect x="503" y="283" width="1" height="1" fill="#ee1c10"/><rect x="349" y="329" width="3" height="2" fill="#ee1c10"/><rect x="348" y="333" width="3" height="2" fill="#ee1c10"/><rect x="300" y="282" width="4" height="4" fill="#ee1c10"/><rect x="301" y="286" width="2" height="2" fill="#ee1c10"/><rect x="457" y="297" width="4" height="4" fill="#ee1c10"/><rect x="459" y="301" width="1" height="1" fill="#ee1c10"/><rect x="359" y="330" width="2" height="3" fill="#ee1c10"/><rect x="360" y="334" width="1" height="2" fill="#ee1c10"/><rect x="372" y="325" width="2" height="4" fill="#ee1c10"/><rect x="374" y="329" width="3" height="3" fill="#ee1c10"/><rect x="531" y="281" width="2" height="2" fill="#ee1c10"/><rect x="531" y="284" width="3" height="3" fill="#ee1c10"/><rect x="336" y="350" width="4" height="3" fill="#ee1c10"/><rect x="338" y="354" width="1" height="1" fill="#ee1c10"/><rect x="449" y="335" width="4" height="2" fill="#ee1c10"/><rect x="449" y="337" width="3" height="1" fill="#ee1c10"/><rect x="511" y="266" width="3" height="4" fill="#ee1c10"/><rect x="513" y="269" width="2" height="2" fill="#ee1c10"/><rect x="415" y="274" width="2" height="4" fill="#ee1c10"/><rect x="414" y="278" width="2" height="2" fill="#ee1c10"/><rect x="327" y="333" width="3" height="4" fill="#ee1c10"/><rect x="328" y="335" width="3" height="1" fill="#ee1c10"/><rect x="510" y="507" width="2" height="2" fill="#ee1c10"/><rect x="398" y="448" width="2" height="3" fill="#ee1c10"/><rect x="379" y="480" width="1" height="2" fill="#ee1c10"/><rect x="409" y="456" width="2" height="1" fill="#ee1c10"/><rect x="402" y="543" width="1" height="2" fill="#ee1c10"/><rect x="336" y="523" width="2" height="1" fill="#ee1c10"/><rect x="375" y="496" width="2" height="2" fill="#ee1c10"/><rect x="337" y="467" width="1" height="3" fill="#ee1c10"/><rect x="374" y="433" width="1" height="2" fill="#ee1c10"/><rect x="390" y="458" width="1" height="2" fill="#ee1c10"/><rect x="341" y="469" width="2" height="3" fill="#ee1c10"/><rect x="451" y="473" width="1" height="2" fill="#ee1c10"/><rect x="528" y="481" width="2" height="2" fill="#ee1c10"/><rect x="384" y="421" width="2" height="3" fill="#ee1c10"/><rect x="471" y="502" width="2" height="2" fill="#ee1c10"/><rect x="530" y="485" width="1" height="1" fill="#ee1c10"/><rect x="356" y="441" width="2" height="1" fill="#ee1c10"/><rect x="392" y="524" width="2" height="2" fill="#ee1c10"/><rect x="422" y="493" width="1" height="1" fill="#ee1c10"/><rect x="440" y="427" width="2" height="3" fill="#ee1c10"/><rect x="332" y="415" width="2" height="3" fill="#ee1c10"/><rect x="376" y="472" width="1" height="2" fill="#ee1c10"/><rect x="435" y="524" width="2" height="1" fill="#ee1c10"/><rect x="406" y="492" width="2" height="1" fill="#ee1c10"/><rect x="507" y="454" width="2" height="1" fill="#ee1c10"/><rect x="473" y="509" width="2" height="1" fill="#ee1c10"/><rect x="513" y="434" width="1" height="2" fill="#ee1c10"/><rect x="472" y="491" width="2" height="1" fill="#ee1c10"/><rect x="443" y="440" width="1" height="2" fill="#ee1c10"/><rect x="524" y="499" width="2" height="1" fill="#ee1c10"/><rect x="462" y="486" width="2" height="2" fill="#ee1c10"/><rect x="405" y="448" width="2" height="3" fill="#ee1c10"/><rect x="472" y="542" width="1" height="1" fill="#ee1c10"/><rect x="394" y="482" width="1" height="3" fill="#ee1c10"/><rect x="359" y="458" width="2" height="1" fill="#ee1c10"/><rect x="469" y="441" width="2" height="2" fill="#ee1c10"/><rect x="444" y="540" width="2" height="3" fill="#ee1c10"/><rect x="433" y="521" width="2" height="2" fill="#ee1c10"/><rect x="511" y="488" width="1" height="3" fill="#ee1c10"/><rect x="428" y="510" width="1" height="2" fill="#ee1c10"/><rect x="423" y="454" width="1" height="3" fill="#ee1c10"/><rect x="341" y="510" width="1" height="2" fill="#ee1c10"/><rect x="462" y="418" width="1" height="3" fill="#ee1c10"/><rect x="419" y="507" width="1" height="2" fill="#ee1c10"/><rect x="393" y="483" width="1" height="3" fill="#ee1c10"/><rect x="413" y="475" width="1" height="3" fill="#ee1c10"/><rect x="470" y="434" width="1" height="3" fill="#ee1c10"/><rect x="494" y="497" width="2" height="3" fill="#ee1c10"/><rect x="336" y="522" width="2" height="3" fill="#ee1c10"/><rect x="525" y="444" width="2" height="3" fill="#ee1c10"/><rect x="487" y="467" width="1" height="1" fill="#ee1c10"/><rect x="515" y="417" width="2" height="2" fill="#ee1c10"/><rect x="492" y="439" width="2" height="3" fill="#ee1c10"/><rect x="461" y="422" width="2" height="3" fill="#ee1c10"/><rect x="384" y="508" width="2" height="1" fill="#ee1c10"/><rect x="429" y="543" width="1" height="2" fill="#ee1c10"/><rect x="445" y="458" width="1" height="1" fill="#ee1c10"/><rect x="393" y="530" width="2" height="3" fill="#ee1c10"/><rect x="420" y="539" width="1" height="3" fill="#ee1c10"/><rect x="446" y="533" width="2" height="2" fill="#ee1c10"/><rect x="471" y="533" width="2" height="1" fill="#ee1c10"/><rect x="382" y="486" width="2" height="3" fill="#ee1c10"/><rect x="514" y="532" width="2" height="2" fill="#ee1c10"/><rect x="502" y="545" width="2" height="2" fill="#ee1c10"/><rect x="382" y="460" width="1" height="2" fill="#ee1c10"/><rect x="400" y="499" width="2" height="1" fill="#ee1c10"/><rect x="341" y="491" width="1" height="1" fill="#ee1c10"/><rect x="413" y="445" width="2" height="2" fill="#ee1c10"/><rect x="443" y="529" width="2" height="2" fill="#ee1c10"/><rect x="473" y="439" width="2" height="2" fill="#ee1c10"/><rect x="328" y="126" width="3" height="4" fill="#ee1c10"/><rect x="303" y="121" width="1" height="4" fill="#ee1c10"/><rect x="308" y="121" width="2" height="3" fill="#ee1c10"/><rect x="295" y="125" width="1" height="3" fill="#ee1c10"/><rect x="279" y="123" width="2" height="2" fill="#ee1c10"/><rect x="319" y="121" width="2" height="2" fill="#ee1c10"/><rect x="276" y="125" width="1" height="4" fill="#ee1c10"/><rect x="325" y="125" width="3" height="4" fill="#ee1c10"/><rect x="276" y="123" width="3" height="3" fill="#ee1c10"/><rect x="321" y="121" width="3" height="3" fill="#ee1c10"/><rect x="332" y="124" width="3" height="4" fill="#ee1c10"/><rect x="286" y="125" width="3" height="3" fill="#ee1c10"/><rect x="320" y="120" width="3" height="2" fill="#ee1c10"/><rect x="332" y="121" width="1" height="3" fill="#ee1c10"/><rect x="451" y="125" width="1" height="5" fill="#ffd810"/><rect x="460" y="127" width="1" height="4" fill="#ffd810"/><rect x="441" y="122" width="1" height="3" fill="#ffe810"/><rect x="443" y="124" width="1" height="5" fill="#ffd810"/><rect x="440" y="125" width="1" height="4" fill="#ffe810"/><rect x="420" y="123" width="1" height="3" fill="#ffd810"/><rect x="456" y="124" width="1" height="4" fill="#ffe810"/><rect x="424" y="123" width="1" height="2" fill="#ffd810"/><rect x="459" y="123" width="1" height="5" fill="#ffe810"/><rect x="430" y="128" width="1" height="5" fill="#ffd810"/><rect x="437" y="124" width="1" height="3" fill="#ffe810"/><rect x="456" y="120" width="1" height="5" fill="#ffe810"/><rect x="452" y="127" width="1" height="5" fill="#ffd810"/><rect x="458" y="125" width="1" height="5" fill="#ffd810"/><rect x="454" y="126" width="1" height="2" fill="#ffd810"/><rect x="437" y="125" width="1" height="2" fill="#ffe810"/><rect x="450" y="128" width="1" height="5" fill="#ffe810"/><rect x="449" y="123" width="1" height="4" fill="#ffd810"/><rect x="460" y="125" width="1" height="2" fill="#ffd810"/><rect x="456" y="124" width="1" height="2" fill="#ffe810"/><rect x="437" y="122" width="1" height="2" fill="#ffe810"/><rect x="449" y="126" width="1" height="5" fill="#ffe810"/><rect x="438" y="126" width="1" height="3" fill="#ffd810"/><rect x="428" y="127" width="1" height="3" fill="#ffd810"/><rect x="450" y="121" width="1" height="2" fill="#ffe810"/><rect x="462" y="125" width="1" height="4" fill="#ffd810"/><rect x="455" y="119" width="1" height="5" fill="#ffe810"/><rect x="426" y="119" width="1" height="3" fill="#ffd810"/><rect x="450" y="120" width="1" height="4" fill="#ffd810"/><rect x="447" y="127" width="1" height="3" fill="#ffd810"/><rect x="460" y="122" width="1" height="3" fill="#ffd810"/><rect x="450" y="124" width="1" height="5" fill="#ffd810"/><rect x="445" y="123" width="1" height="4" fill="#ffe810"/><rect x="454" y="122" width="1" height="5" fill="#ffe810"/><rect x="442" y="126" width="1" height="4" fill="#ffe810"/><rect x="456" y="125" width="1" height="5" fill="#ffd810"/><rect x="429" y="125" width="1" height="2" fill="#ffd810"/><rect x="430" y="127" width="1" height="3" fill="#ffe810"/><rect x="443" y="120" width="1" height="2" fill="#ffd810"/><rect x="436" y="126" width="1" height="4" fill="#ffe810"/><rect x="493" y="125" width="1" height="1" fill="#ee1c10"/><rect x="486" y="122" width="2" height="2" fill="#ee1c10"/><rect x="481" y="122" width="3" height="1" fill="#ee1c10"/><rect x="517" y="122" width="2" height="3" fill="#ee1c10"/><rect x="509" y="123" width="2" height="3" fill="#ee1c10"/><rect x="489" y="123" width="1" height="2" fill="#ee1c10"/><rect x="501" y="125" width="2" height="2" fill="#ee1c10"/><rect x="492" y="121" width="1" height="3" fill="#ee1c10"/><rect x="491" y="124" width="3" height="2" fill="#ee1c10"/><rect x="517" y="123" width="1" height="1" fill="#ee1c10"/><rect x="482" y="125" width="3" height="2" fill="#ee1c10"/><rect x="520" y="125" width="2" height="4" fill="#ee1c10"/><rect x="501" y="126" width="3" height="3" fill="#ee1c10"/><rect x="479" y="123" width="1" height="4" fill="#ee1c10"/><rect x="824" y="126" width="1" height="6" fill="#ffd810"/><rect x="809" y="121" width="1" height="6" fill="#ffd810"/><rect x="812" y="122" width="1" height="6" fill="#ffd810"/><rect x="784" y="126" width="1" height="6" fill="#ffd810"/><rect x="815" y="123" width="1" height="6" fill="#ffd810"/><rect x="793" y="127" width="1" height="4" fill="#ffd810"/><rect x="822" y="123" width="1" height="4" fill="#ffd810"/><rect x="814" y="122" width="1" height="4" fill="#ffd810"/><rect x="815" y="122" width="1" height="3" fill="#ffd810"/><rect x="821" y="124" width="1" height="4" fill="#ffd810"/><rect x="797" y="125" width="1" height="5" fill="#ffd810"/><rect x="836" y="124" width="1" height="3" fill="#ffd810"/><rect x="803" y="124" width="1" height="6" fill="#ffd810"/><rect x="834" y="125" width="1" height="5" fill="#ffd810"/><rect x="823" y="126" width="1" height="6" fill="#ffd810"/><rect x="794" y="123" width="1" height="3" fill="#ffd810"/><rect x="818" y="124" width="1" height="4" fill="#ffd810"/><rect x="803" y="127" width="1" height="3" fill="#ffd810"/><rect x="806" y="124" width="1" height="4" fill="#ffd810"/><rect x="812" y="125" width="1" height="3" fill="#ffd810"/><rect x="809" y="121" width="1" height="5" fill="#ffd810"/><rect x="825" y="127" width="1" height="3" fill="#ffd810"/><rect x="835" y="124" width="1" height="4" fill="#ffd810"/><rect x="805" y="126" width="1" height="5" fill="#ffd810"/><rect x="811" y="122" width="1" height="3" fill="#ffd810"/><rect x="839" y="121" width="1" height="6" fill="#ffd810"/><rect x="798" y="127" width="1" height="4" fill="#ffd810"/><rect x="829" y="125" width="1" height="4" fill="#ffd810"/><rect x="806" y="125" width="1" height="4" fill="#ffd810"/><rect x="828" y="124" width="1" height="4" fill="#ffd810"/><rect x="827" y="128" width="1" height="5" fill="#ffd810"/><rect x="836" y="125" width="1" height="5" fill="#ffd810"/><rect x="818" y="124" width="1" height="4" fill="#ffd810"/><rect x="831" y="127" width="1" height="5" fill="#ffd810"/><rect x="781" y="125" width="1" height="3" fill="#ffd810"/><rect x="799" y="127" width="1" height="6" fill="#ffd810"/><rect x="831" y="125" width="1" height="3" fill="#ffd810"/><rect x="833" y="126" width="1" height="3" fill="#ffd810"/><rect x="836" y="124" width="1" height="3" fill="#ffd810"/><rect x="799" y="126" width="1" height="5" fill="#ffd810"/><rect x="838" y="128" width="1" height="6" fill="#ffd810"/><rect x="814" y="123" width="1" height="5" fill="#ffd810"/><rect x="833" y="122" width="1" height="5" fill="#ffd810"/><rect x="816" y="122" width="1" height="3" fill="#ffd810"/><rect x="797" y="123" width="1" height="3" fill="#ffd810"/><rect x="834" y="124" width="1" height="6" fill="#ffd810"/><rect x="822" y="122" width="1" height="3" fill="#ffd810"/><rect x="837" y="126" width="1" height="3" fill="#ffd810"/><rect x="819" y="128" width="1" height="4" fill="#ffd810"/><rect x="803" y="126" width="1" height="6" fill="#ffd810"/><rect x="632" y="287" width="1" height="1" fill="#60f0b0"/><rect x="547" y="470" width="1" height="1" fill="#60f0b0"/><rect x="560" y="309" width="1" height="1" fill="#60f0b0"/><rect x="440" y="406" width="1" height="1" fill="#60f0b0"/><rect x="731" y="653" width="1" height="1" fill="#60f0b0"/><rect x="799" y="485" width="1" height="1" fill="#60f0b0"/><rect x="894" y="422" width="1" height="1" fill="#ffe010"/><rect x="603" y="448" width="1" height="1" fill="#ffe010"/><rect x="501" y="502" width="1" height="1" fill="#ffe010"/><rect x="906" y="620" width="1" height="1" fill="#ffe010"/><rect x="271" y="503" width="1" height="1" fill="#60f0b0"/><rect x="382" y="440" width="1" height="1" fill="#ffe010"/><rect x="347" y="237" width="1" height="1" fill="#ffe010"/><rect x="217" y="544" width="1" height="1" fill="#60f0b0"/><rect x="253" y="561" width="1" height="1" fill="#ffe010"/><rect x="463" y="573" width="1" height="1" fill="#60f0b0"/><rect x="179" y="237" width="1" height="1" fill="#60f0b0"/><rect x="292" y="539" width="1" height="1" fill="#60f0b0"/><rect x="950" y="413" width="1" height="1" fill="#60f0b0"/><rect x="380" y="293" width="1" height="1" fill="#60f0b0"/><rect x="152" y="675" width="1" height="1" fill="#60f0b0"/><rect x="763" y="651" width="1" height="1" fill="#60f0b0"/><rect x="810" y="213" width="1" height="1" fill="#ffe010"/><rect x="531" y="308" width="1" height="1" fill="#60f0b0"/><rect x="296" y="279" width="1" height="1" fill="#60f0b0"/><rect x="241" y="227" width="1" height="1" fill="#60f0b0"/><rect x="961" y="473" width="1" height="1" fill="#ffe010"/><rect x="650" y="677" width="1" height="1" fill="#60f0b0"/><rect x="555" y="445" width="1" height="1" fill="#60f0b0"/><rect x="850" y="671" width="1" height="1" fill="#ffe010"/>
<rect x="372" y="523" width="6" height="9" fill="#a01010"/><rect x="396" y="515" width="4" height="14" fill="#c01010"/><rect x="550" y="520" width="3" height="10" fill="#a01010"/>
<rect x="145" y="451.5" width="835" height="2" fill="#e4e4e4" opacity="0.9"/><path d="M145 452.5H980" stroke="#ffffff" stroke-width="1" stroke-dasharray="6 4" opacity="0.8"/>
<g shape-rendering="auto"><rect x="520.8" y="385.8" width="222.4" height="201.4" fill="none" stroke="#111" stroke-width="1.6"/><rect x="523.3" y="388.3" width="217.4" height="196.4" fill="none" stroke="#1a1a1a" stroke-width="1.1" stroke-dasharray="2.5 2"/><rect x="525.6" y="390.6" width="212.8" height="191.8" fill="none" stroke="#111" stroke-width="1.3"/></g>
</svg>
<div class="a" style="left:1022px;top:119px;width:21px;height:608px;background:#ededed"></div>
<div class="a" style="left:1022px;top:336px;width:21px;height:369px;background:#c9c9c9"></div>
<div class="a" style="left:145px;top:727px;width:898px;height:21px;background:#ededed"></div>
<div class="a" style="left:292px;top:727px;width:710px;height:21px;background:#c9c9c9"></div>
<svg class="a" style="left:0;top:0" width="1611" height="880"><path d="M1028 136 L1033 131 L1038 136" stroke="#9a9a9a" stroke-width="1.5" fill="none"/><path d="M1028 713 L1033 718 L1038 713" stroke="#9a9a9a" stroke-width="1.5" fill="none"/><path d="M160 732 L155.5 737 L160 742" stroke="#9a9a9a" stroke-width="1.5" fill="none"/><path d="M1011 732 L1015.5 737 L1011 742" stroke="#9a9a9a" stroke-width="1.5" fill="none"/></svg>
<svg style="position:absolute;left:0;top:0" width="1611" height="880">
<path d="M145.70 112.9V119 M152.15 106.4V119 M158.60 112.9V119 M165.05 112.9V119 M171.50 112.9V119 M177.95 112.9V119 M184.40 98.4V119 M190.85 112.9V119 M197.30 112.9V119 M203.75 112.9V119 M210.20 112.9V119 M216.65 106.4V119 M223.10 112.9V119 M229.54 112.9V119 M235.99 112.9V119 M242.44 112.9V119 M248.89 98.4V119 M255.34 112.9V119 M261.79 112.9V119 M268.24 112.9V119 M274.69 112.9V119 M281.14 106.4V119 M287.59 112.9V119 M294.04 112.9V119 M300.49 112.9V119 M306.93 112.9V119 M313.38 98.4V119 M319.83 112.9V119 M326.28 112.9V119 M332.73 112.9V119 M339.18 112.9V119 M345.63 106.4V119 M352.08 112.9V119 M358.53 112.9V119 M364.98 112.9V119 M371.43 112.9V119 M377.88 98.4V119 M384.33 112.9V119 M390.77 112.9V119 M397.22 112.9V119 M403.67 112.9V119 M410.12 106.4V119 M416.57 112.9V119 M423.02 112.9V119 M429.47 112.9V119 M435.92 112.9V119 M442.37 98.4V119 M448.82 112.9V119 M455.27 112.9V119 M461.72 112.9V119 M468.16 112.9V119 M474.61 106.4V119 M481.06 112.9V119 M487.51 112.9V119 M493.96 112.9V119 M500.41 112.9V119 M506.86 98.4V119 M513.31 112.9V119 M519.76 112.9V119 M526.21 112.9V119 M532.66 112.9V119 M539.11 106.4V119 M545.56 112.9V119 M552.00 112.9V119 M558.45 112.9V119 M564.90 112.9V119 M571.35 98.4V119 M577.80 112.9V119 M584.25 112.9V119 M590.70 112.9V119 M597.15 112.9V119 M603.60 106.4V119 M610.05 112.9V119 M616.50 112.9V119 M622.95 112.9V119 M629.39 112.9V119 M635.84 98.4V119 M642.29 112.9V119 M648.74 112.9V119 M655.19 112.9V119 M661.64 112.9V119 M668.09 106.4V119 M674.54 112.9V119 M680.99 112.9V119 M687.44 112.9V119 M693.89 112.9V119 M700.34 98.4V119 M706.79 112.9V119 M713.23 112.9V119 M719.68 112.9V119 M726.13 112.9V119 M732.58 106.4V119 M739.03 112.9V119 M745.48 112.9V119 M751.93 112.9V119 M758.38 112.9V119 M764.83 98.4V119 M771.28 112.9V119 M777.73 112.9V119 M784.18 112.9V119 M790.62 112.9V119 M797.07 106.4V119 M803.52 112.9V119 M809.97 112.9V119 M816.42 112.9V119 M822.87 112.9V119 M829.32 98.4V119 M835.77 112.9V119 M842.22 112.9V119 M848.67 112.9V119 M855.12 112.9V119 M861.57 106.4V119 M868.02 112.9V119 M874.46 112.9V119 M880.91 112.9V119 M887.36 112.9V119 M893.81 98.4V119 M900.26 112.9V119 M906.71 112.9V119 M913.16 112.9V119 M919.61 112.9V119 M926.06 106.4V119 M932.51 112.9V119 M938.96 112.9V119 M945.41 112.9V119 M951.85 112.9V119 M958.30 98.4V119 M964.75 112.9V119 M971.20 112.9V119 M977.65 112.9V119 M984.10 112.9V119 M990.55 106.4V119 M997.00 112.9V119 M1003.45 112.9V119 M1009.90 112.9V119 M1016.35 112.9V119" stroke="#202020" stroke-width="1.3" fill="none"/>
<clipPath id="ctop_r"><rect x="140" y="78" width="882.3" height="20"/></clipPath><g clip-path="url(#ctop_r)">
<text transform="translate(184.4 93.5) scale(1 1.075)" text-anchor="middle">60</text>
<text transform="translate(248.9 93.5) scale(1 1.075)" text-anchor="middle">80</text>
<text transform="translate(313.4 93.5) scale(1 1.075)" text-anchor="middle">100</text>
<text transform="translate(377.9 93.5) scale(1 1.075)" text-anchor="middle">120</text>
<text transform="translate(442.4 93.5) scale(1 1.075)" text-anchor="middle">140</text>
<text transform="translate(506.9 93.5) scale(1 1.075)" text-anchor="middle">160</text>
<text transform="translate(571.4 93.5) scale(1 1.075)" text-anchor="middle">180</text>
<text transform="translate(635.8 93.5) scale(1 1.075)" text-anchor="middle">200</text>
<text transform="translate(700.3 93.5) scale(1 1.075)" text-anchor="middle">220</text>
<text transform="translate(764.8 93.5) scale(1 1.075)" text-anchor="middle">240</text>
<text transform="translate(829.3 93.5) scale(1 1.075)" text-anchor="middle">260</text>
<text transform="translate(893.8 93.5) scale(1 1.075)" text-anchor="middle">280</text>
<text transform="translate(958.3 93.5) scale(1 1.075)" text-anchor="middle">300</text>
<text transform="translate(1022.8 93.5) scale(1 1.075)" text-anchor="middle">320</text>
</g>
<path d="M140.5 118.83H145.5 M140.5 122.05H145.5 M135 125.28H145.5 M140.5 128.50H145.5 M140.5 131.73H145.5 M140.5 134.95H145.5 M140.5 138.18H145.5 M127 141.40H145.5 M140.5 144.62H145.5 M140.5 147.85H145.5 M140.5 151.07H145.5 M140.5 154.30H145.5 M135 157.52H145.5 M140.5 160.75H145.5 M140.5 163.97H145.5 M140.5 167.20H145.5 M140.5 170.42H145.5 M127 173.65H145.5 M140.5 176.87H145.5 M140.5 180.10H145.5 M140.5 183.32H145.5 M140.5 186.54H145.5 M135 189.77H145.5 M140.5 192.99H145.5 M140.5 196.22H145.5 M140.5 199.44H145.5 M140.5 202.67H145.5 M127 205.89H145.5 M140.5 209.12H145.5 M140.5 212.34H145.5 M140.5 215.57H145.5 M140.5 218.79H145.5 M135 222.02H145.5 M140.5 225.24H145.5 M140.5 228.46H145.5 M140.5 231.69H145.5 M140.5 234.91H145.5 M127 238.14H145.5 M140.5 241.36H145.5 M140.5 244.59H145.5 M140.5 247.81H145.5 M140.5 251.04H145.5 M135 254.26H145.5 M140.5 257.49H145.5 M140.5 260.71H145.5 M140.5 263.93H145.5 M140.5 267.16H145.5 M127 270.38H145.5 M140.5 273.61H145.5 M140.5 276.83H145.5 M140.5 280.06H145.5 M140.5 283.28H145.5 M135 286.51H145.5 M140.5 289.73H145.5 M140.5 292.96H145.5 M140.5 296.18H145.5 M140.5 299.41H145.5 M127 302.63H145.5 M140.5 305.85H145.5 M140.5 309.08H145.5 M140.5 312.30H145.5 M140.5 315.53H145.5 M135 318.75H145.5 M140.5 321.98H145.5 M140.5 325.20H145.5 M140.5 328.43H145.5 M140.5 331.65H145.5 M127 334.88H145.5 M140.5 338.10H145.5 M140.5 341.33H145.5 M140.5 344.55H145.5 M140.5 347.77H145.5 M135 351.00H145.5 M140.5 354.22H145.5 M140.5 357.45H145.5 M140.5 360.67H145.5 M140.5 363.90H145.5 M127 367.12H145.5 M140.5 370.35H145.5 M140.5 373.57H145.5 M140.5 376.80H145.5 M140.5 380.02H145.5 M135 383.25H145.5 M140.5 386.47H145.5 M140.5 389.69H145.5 M140.5 392.92H145.5 M140.5 396.14H145.5 M127 399.37H145.5 M140.5 402.59H145.5 M140.5 405.82H145.5 M140.5 409.04H145.5 M140.5 412.27H145.5 M135 415.49H145.5 M140.5 418.72H145.5 M140.5 421.94H145.5 M140.5 425.16H145.5 M140.5 428.39H145.5 M127 431.61H145.5 M140.5 434.84H145.5 M140.5 438.06H145.5 M140.5 441.29H145.5 M140.5 444.51H145.5 M135 447.74H145.5 M140.5 450.96H145.5 M140.5 454.19H145.5 M140.5 457.41H145.5 M140.5 460.64H145.5 M127 463.86H145.5 M140.5 467.08H145.5 M140.5 470.31H145.5 M140.5 473.53H145.5 M140.5 476.76H145.5 M135 479.98H145.5 M140.5 483.21H145.5 M140.5 486.43H145.5 M140.5 489.66H145.5 M140.5 492.88H145.5 M127 496.11H145.5 M140.5 499.33H145.5 M140.5 502.56H145.5 M140.5 505.78H145.5 M140.5 509.00H145.5 M135 512.23H145.5 M140.5 515.45H145.5 M140.5 518.68H145.5 M140.5 521.90H145.5 M140.5 525.13H145.5 M127 528.35H145.5 M140.5 531.58H145.5 M140.5 534.80H145.5 M140.5 538.03H145.5 M140.5 541.25H145.5 M135 544.48H145.5 M140.5 547.70H145.5 M140.5 550.92H145.5 M140.5 554.15H145.5 M140.5 557.37H145.5 M127 560.60H145.5 M140.5 563.82H145.5 M140.5 567.05H145.5 M140.5 570.27H145.5 M140.5 573.50H145.5 M135 576.72H145.5 M140.5 579.95H145.5 M140.5 583.17H145.5 M140.5 586.39H145.5 M140.5 589.62H145.5 M127 592.84H145.5 M140.5 596.07H145.5 M140.5 599.29H145.5 M140.5 602.52H145.5 M140.5 605.74H145.5 M135 608.97H145.5 M140.5 612.19H145.5 M140.5 615.42H145.5 M140.5 618.64H145.5 M140.5 621.87H145.5 M127 625.09H145.5 M140.5 628.31H145.5 M140.5 631.54H145.5 M140.5 634.76H145.5 M140.5 637.99H145.5 M135 641.21H145.5 M140.5 644.44H145.5 M140.5 647.66H145.5 M140.5 650.89H145.5 M140.5 654.11H145.5 M127 657.34H145.5 M140.5 660.56H145.5 M140.5 663.79H145.5 M140.5 667.01H145.5 M140.5 670.23H145.5 M135 673.46H145.5 M140.5 676.68H145.5 M140.5 679.91H145.5 M140.5 683.13H145.5 M140.5 686.36H145.5 M127 689.58H145.5 M140.5 692.81H145.5 M140.5 696.03H145.5 M140.5 699.26H145.5 M140.5 702.48H145.5 M135 705.71H145.5 M140.5 708.93H145.5 M140.5 712.15H145.5 M140.5 715.38H145.5 M140.5 718.60H145.5 M127 721.83H145.5 M140.5 725.05H145.5 M140.5 728.28H145.5 M140.5 731.50H145.5 M140.5 734.73H145.5 M135 737.95H145.5 M140.5 741.18H145.5 M140.5 744.40H145.5" stroke="#202020" stroke-width="1.3" fill="none"/>
<text transform="translate(125.5 148.0) scale(1 1.075)" text-anchor="end">100</text>
<text transform="translate(125.5 180.2) scale(1 1.075)" text-anchor="end">110</text>
<text transform="translate(125.5 212.5) scale(1 1.075)" text-anchor="end">120</text>
<text transform="translate(125.5 244.7) scale(1 1.075)" text-anchor="end">130</text>
<text transform="translate(125.5 277.0) scale(1 1.075)" text-anchor="end">140</text>
<text transform="translate(125.5 309.2) scale(1 1.075)" text-anchor="end">150</text>
<text transform="translate(125.5 341.5) scale(1 1.075)" text-anchor="end">160</text>
<text transform="translate(125.5 373.7) scale(1 1.075)" text-anchor="end">170</text>
<text transform="translate(125.5 406.0) scale(1 1.075)" text-anchor="end">180</text>
<text transform="translate(125.5 438.2) scale(1 1.075)" text-anchor="end">190</text>
<text transform="translate(125.5 470.5) scale(1 1.075)" text-anchor="end">200</text>
<text transform="translate(125.5 502.7) scale(1 1.075)" text-anchor="end">210</text>
<text transform="translate(125.5 535.0) scale(1 1.075)" text-anchor="end">220</text>
<text transform="translate(125.5 567.2) scale(1 1.075)" text-anchor="end">230</text>
<text transform="translate(125.5 599.4) scale(1 1.075)" text-anchor="end">240</text>
<text transform="translate(125.5 631.7) scale(1 1.075)" text-anchor="end">250</text>
<text transform="translate(125.5 663.9) scale(1 1.075)" text-anchor="end">260</text>
<text transform="translate(125.5 696.2) scale(1 1.075)" text-anchor="end">270</text>
<text transform="translate(125.5 728.4) scale(1 1.075)" text-anchor="end">280</text>
<path d="M147.46 748V753.7 M153.91 748V753.7 M160.36 748V753.7 M166.80 748V753.7 M173.25 748V759 M179.70 748V753.7 M186.15 748V753.7 M192.60 748V753.7 M199.05 748V753.7 M205.50 748V766.4 M211.95 748V753.7 M218.40 748V753.7 M224.85 748V753.7 M231.30 748V753.7 M237.75 748V759 M244.20 748V753.7 M250.64 748V753.7 M257.09 748V753.7 M263.54 748V753.7 M269.99 748V766.4 M276.44 748V753.7 M282.89 748V753.7 M289.34 748V753.7 M295.79 748V753.7 M302.24 748V759 M308.69 748V753.7 M315.14 748V753.7 M321.59 748V753.7 M328.03 748V753.7 M334.48 748V766.4 M340.93 748V753.7 M347.38 748V753.7 M353.83 748V753.7 M360.28 748V753.7 M366.73 748V759 M373.18 748V753.7 M379.63 748V753.7 M386.08 748V753.7 M392.53 748V753.7 M398.98 748V766.4 M405.43 748V753.7 M411.87 748V753.7 M418.32 748V753.7 M424.77 748V753.7 M431.22 748V759 M437.67 748V753.7 M444.12 748V753.7 M450.57 748V753.7 M457.02 748V753.7 M463.47 748V766.4 M469.92 748V753.7 M476.37 748V753.7 M482.82 748V753.7 M489.26 748V753.7 M495.71 748V759 M502.16 748V753.7 M508.61 748V753.7 M515.06 748V753.7 M521.51 748V753.7 M527.96 748V766.4 M534.41 748V753.7 M540.86 748V753.7 M547.31 748V753.7 M553.76 748V753.7 M560.21 748V759 M566.66 748V753.7 M573.10 748V753.7 M579.55 748V753.7 M586.00 748V753.7 M592.45 748V766.4 M598.90 748V753.7 M605.35 748V753.7 M611.80 748V753.7 M618.25 748V753.7 M624.70 748V759 M631.15 748V753.7 M637.60 748V753.7 M644.05 748V753.7 M650.49 748V753.7 M656.94 748V766.4 M663.39 748V753.7 M669.84 748V753.7 M676.29 748V753.7 M682.74 748V753.7 M689.19 748V759 M695.64 748V753.7 M702.09 748V753.7 M708.54 748V753.7 M714.99 748V753.7 M721.44 748V766.4 M727.89 748V753.7 M734.33 748V753.7 M740.78 748V753.7 M747.23 748V753.7 M753.68 748V759 M760.13 748V753.7 M766.58 748V753.7 M773.03 748V753.7 M779.48 748V753.7 M785.93 748V766.4 M792.38 748V753.7 M798.83 748V753.7 M805.28 748V753.7 M811.72 748V753.7 M818.17 748V759 M824.62 748V753.7 M831.07 748V753.7 M837.52 748V753.7 M843.97 748V753.7 M850.42 748V766.4 M856.87 748V753.7 M863.32 748V753.7 M869.77 748V753.7 M876.22 748V753.7 M882.67 748V759 M889.12 748V753.7 M895.56 748V753.7 M902.01 748V753.7 M908.46 748V753.7 M914.91 748V766.4 M921.36 748V753.7 M927.81 748V753.7 M934.26 748V753.7 M940.71 748V753.7 M947.16 748V759 M953.61 748V753.7 M960.06 748V753.7 M966.51 748V753.7 M972.95 748V753.7 M979.40 748V766.4 M985.85 748V753.7 M992.30 748V753.7 M998.75 748V753.7 M1005.20 748V753.7 M1011.65 748V759 M1018.10 748V753.7 M1024.55 748V753.7 M1031.00 748V753.7 M1037.45 748V753.7" stroke="#202020" stroke-width="1.3" fill="none"/>
<clipPath id="cbot"><rect x="145" y="765" width="898" height="30"/></clipPath><g clip-path="url(#cbot)">
<text transform="translate(141.0 783.7) scale(1 1.075)" text-anchor="middle">40</text>
<text transform="translate(205.5 783.7) scale(1 1.075)" text-anchor="middle">60</text>
<text transform="translate(270.0 783.7) scale(1 1.075)" text-anchor="middle">80</text>
<text transform="translate(334.5 783.7) scale(1 1.075)" text-anchor="middle">100</text>
<text transform="translate(399.0 783.7) scale(1 1.075)" text-anchor="middle">120</text>
<text transform="translate(463.5 783.7) scale(1 1.075)" text-anchor="middle">140</text>
<text transform="translate(528.0 783.7) scale(1 1.075)" text-anchor="middle">160</text>
<text transform="translate(592.5 783.7) scale(1 1.075)" text-anchor="middle">180</text>
<text transform="translate(656.9 783.7) scale(1 1.075)" text-anchor="middle">200</text>
<text transform="translate(721.4 783.7) scale(1 1.075)" text-anchor="middle">220</text>
<text transform="translate(785.9 783.7) scale(1 1.075)" text-anchor="middle">240</text>
<text transform="translate(850.4 783.7) scale(1 1.075)" text-anchor="middle">260</text>
<text transform="translate(914.9 783.7) scale(1 1.075)" text-anchor="middle">280</text>
<text transform="translate(979.4 783.7) scale(1 1.075)" text-anchor="middle">300</text>
<text transform="translate(1043.9 783.7) scale(1 1.075)" text-anchor="middle">320</text>
<text transform="translate(1108.4 783.7) scale(1 1.075)" text-anchor="middle">340</text>
</g>
<path d="M1044 120.30H1062 M1044 123.52H1049.6 M1044 126.75H1049.6 M1044 129.97H1049.6 M1044 133.20H1049.6 M1044 136.42H1055 M1044 139.65H1049.6 M1044 142.87H1049.6 M1044 146.10H1049.6 M1044 149.32H1049.6 M1044 152.55H1062 M1044 155.77H1049.6 M1044 159.00H1049.6 M1044 162.22H1049.6 M1044 165.44H1049.6 M1044 168.67H1055 M1044 171.89H1049.6 M1044 175.12H1049.6 M1044 178.34H1049.6 M1044 181.57H1049.6 M1044 184.79H1062 M1044 188.02H1049.6 M1044 191.24H1049.6 M1044 194.47H1049.6 M1044 197.69H1049.6 M1044 200.92H1055 M1044 204.14H1049.6 M1044 207.36H1049.6 M1044 210.59H1049.6 M1044 213.81H1049.6 M1044 217.04H1062 M1044 220.26H1049.6 M1044 223.49H1049.6 M1044 226.71H1049.6 M1044 229.94H1049.6 M1044 233.16H1055 M1044 236.39H1049.6 M1044 239.61H1049.6 M1044 242.83H1049.6 M1044 246.06H1049.6 M1044 249.28H1062 M1044 252.51H1049.6 M1044 255.73H1049.6 M1044 258.96H1049.6 M1044 262.18H1049.6 M1044 265.41H1055 M1044 268.63H1049.6 M1044 271.86H1049.6 M1044 275.08H1049.6 M1044 278.31H1049.6 M1044 281.53H1062 M1044 284.75H1049.6 M1044 287.98H1049.6 M1044 291.20H1049.6 M1044 294.43H1049.6 M1044 297.65H1055 M1044 300.88H1049.6 M1044 304.10H1049.6 M1044 307.33H1049.6 M1044 310.55H1049.6 M1044 313.78H1062 M1044 317.00H1049.6 M1044 320.23H1049.6 M1044 323.45H1049.6 M1044 326.67H1049.6 M1044 329.90H1055 M1044 333.12H1049.6 M1044 336.35H1049.6 M1044 339.57H1049.6 M1044 342.80H1049.6 M1044 346.02H1062 M1044 349.25H1049.6 M1044 352.47H1049.6 M1044 355.70H1049.6 M1044 358.92H1049.6 M1044 362.14H1055 M1044 365.37H1049.6 M1044 368.59H1049.6 M1044 371.82H1049.6 M1044 375.04H1049.6 M1044 378.27H1062 M1044 381.49H1049.6 M1044 384.72H1049.6 M1044 387.94H1049.6 M1044 391.17H1049.6 M1044 394.39H1055 M1044 397.62H1049.6 M1044 400.84H1049.6 M1044 404.06H1049.6 M1044 407.29H1049.6 M1044 410.51H1062 M1044 413.74H1049.6 M1044 416.96H1049.6 M1044 420.19H1049.6 M1044 423.41H1049.6 M1044 426.64H1055 M1044 429.86H1049.6 M1044 433.09H1049.6 M1044 436.31H1049.6 M1044 439.54H1049.6 M1044 442.76H1062 M1044 445.98H1049.6 M1044 449.21H1049.6 M1044 452.43H1049.6 M1044 455.66H1049.6 M1044 458.88H1055 M1044 462.11H1049.6 M1044 465.33H1049.6 M1044 468.56H1049.6 M1044 471.78H1049.6 M1044 475.01H1062 M1044 478.23H1049.6 M1044 481.46H1049.6 M1044 484.68H1049.6 M1044 487.90H1049.6 M1044 491.13H1055 M1044 494.35H1049.6 M1044 497.58H1049.6 M1044 500.80H1049.6 M1044 504.03H1049.6 M1044 507.25H1062 M1044 510.48H1049.6 M1044 513.70H1049.6 M1044 516.93H1049.6 M1044 520.15H1049.6 M1044 523.38H1055 M1044 526.60H1049.6 M1044 529.82H1049.6 M1044 533.05H1049.6 M1044 536.27H1049.6 M1044 539.50H1062 M1044 542.72H1049.6 M1044 545.95H1049.6 M1044 549.17H1049.6 M1044 552.40H1049.6 M1044 555.62H1055 M1044 558.85H1049.6 M1044 562.07H1049.6 M1044 565.29H1049.6 M1044 568.52H1049.6 M1044 571.74H1062 M1044 574.97H1049.6 M1044 578.19H1049.6 M1044 581.42H1049.6 M1044 584.64H1049.6 M1044 587.87H1055 M1044 591.09H1049.6 M1044 594.32H1049.6 M1044 597.54H1049.6 M1044 600.77H1049.6 M1044 603.99H1062 M1044 607.21H1049.6 M1044 610.44H1049.6 M1044 613.66H1049.6 M1044 616.89H1049.6 M1044 620.11H1055 M1044 623.34H1049.6 M1044 626.56H1049.6 M1044 629.79H1049.6 M1044 633.01H1049.6 M1044 636.24H1062 M1044 639.46H1049.6 M1044 642.69H1049.6 M1044 645.91H1049.6 M1044 649.13H1049.6 M1044 652.36H1055 M1044 655.58H1049.6 M1044 658.81H1049.6 M1044 662.03H1049.6 M1044 665.26H1049.6 M1044 668.48H1062 M1044 671.71H1049.6 M1044 674.93H1049.6 M1044 678.16H1049.6 M1044 681.38H1049.6 M1044 684.61H1055 M1044 687.83H1049.6 M1044 691.05H1049.6 M1044 694.28H1049.6 M1044 697.50H1049.6 M1044 700.73H1062 M1044 703.95H1049.6 M1044 707.18H1049.6 M1044 710.40H1049.6 M1044 713.63H1049.6 M1044 716.85H1055 M1044 720.08H1049.6 M1044 723.30H1049.6" stroke="#202020" stroke-width="1.3" fill="none"/>
<clipPath id="cright"><rect x="1040" y="118" width="50" height="640"/></clipPath><g clip-path="url(#cright)">
<text transform="translate(1064 125.8) scale(1 1.075)">100</text>
<text transform="translate(1064 158.0) scale(1 1.075)">110</text>
<text transform="translate(1064 190.3) scale(1 1.075)">120</text>
<text transform="translate(1064 222.5) scale(1 1.075)">130</text>
<text transform="translate(1064 254.8) scale(1 1.075)">140</text>
<text transform="translate(1064 287.0) scale(1 1.075)">150</text>
<text transform="translate(1064 319.3) scale(1 1.075)">160</text>
<text transform="translate(1064 351.5) scale(1 1.075)">170</text>
<text transform="translate(1064 383.8) scale(1 1.075)">180</text>
<text transform="translate(1064 416.0) scale(1 1.075)">190</text>
<text transform="translate(1064 448.3) scale(1 1.075)">200</text>
<text transform="translate(1064 480.5) scale(1 1.075)">210</text>
<text transform="translate(1064 512.8) scale(1 1.075)">220</text>
<text transform="translate(1064 545.0) scale(1 1.075)">230</text>
<text transform="translate(1064 577.2) scale(1 1.075)">240</text>
<text transform="translate(1064 609.5) scale(1 1.075)">250</text>
<text transform="translate(1064 641.7) scale(1 1.075)">260</text>
<text transform="translate(1064 674.0) scale(1 1.075)">270</text>
<text transform="translate(1064 706.2) scale(1 1.075)">280</text>
</g>
<path d="M1132 156.21H1136 M1132 164.02H1136 M1132 171.83H1136 M1132 179.64H1136 M1132 187.45H1139.5 M1132 195.26H1136 M1132 203.07H1136 M1132 210.88H1136 M1132 218.69H1136 M1132 234.31H1136 M1132 242.12H1136 M1132 249.93H1136 M1132 257.74H1136 M1132 265.55H1139.5 M1132 273.36H1136 M1132 281.17H1136 M1132 288.98H1136 M1132 296.79H1136 M1132 312.41H1136 M1132 320.22H1136 M1132 328.03H1136 M1132 335.84H1136 M1132 343.65H1139.5 M1132 351.46H1136 M1132 359.27H1136 M1132 367.08H1136 M1132 374.89H1136 M1132 390.51H1136 M1132 398.32H1136 M1132 406.13H1136 M1132 413.94H1136 M1132 421.75H1139.5 M1132 429.56H1136 M1132 437.37H1136 M1132 445.18H1136 M1132 452.99H1136 M1132 468.61H1136 M1132 476.42H1136 M1132 484.23H1136 M1132 492.04H1136 M1132 499.85H1139.5 M1132 507.66H1136 M1132 515.47H1136 M1132 523.28H1136 M1132 531.09H1136 M1132 546.71H1136 M1132 554.52H1136 M1132 562.33H1136 M1132 570.14H1136 M1132 577.95H1139.5 M1132 585.76H1136 M1132 593.57H1136 M1132 601.38H1136 M1132 609.19H1136 M1132 624.81H1136 M1132 632.62H1136 M1132 640.43H1136 M1132 648.24H1136 M1132 656.05H1139.5 M1132 663.86H1136 M1132 671.67H1136 M1132 679.48H1136 M1132 687.29H1136 M1132 702.91H1136 M1132 710.72H1136 M1132 718.53H1136" stroke="#202020" stroke-width="1.5" fill="none"/>
<path d="M1132 226.50H1144 M1132 304.60H1144 M1132 382.70H1144 M1132 460.80H1144 M1132 538.90H1144 M1132 617.00H1144 M1132 695.10H1144" stroke="#202020" stroke-width="2" fill="none"/>
<path d="M1132 148.4H1144" stroke="#777" stroke-width="1"/>
<text transform="translate(1145.5 153.9) scale(1 1.075)">0</text>
<text transform="translate(1145.5 232.0) scale(1 1.075)">1</text>
<text transform="translate(1145.5 310.1) scale(1 1.075)">2</text>
<text transform="translate(1145.5 388.2) scale(1 1.075)">3</text>
<text transform="translate(1145.5 466.3) scale(1 1.075)">4</text>
<text transform="translate(1145.5 544.4) scale(1 1.075)">5</text>
<text transform="translate(1145.5 622.5) scale(1 1.075)">6</text>
<text transform="translate(1145.5 700.6) scale(1 1.075)">7</text>
<text x="1141" y="100" style="font-size:13.5px;font-weight:bold">mm</text>
</svg>
<div class="a" style="left:1090px;top:117px;width:40px;height:636px;background:linear-gradient(to bottom,#7a0000 0px,#7a0000 51px,#800000 51px,#ff0000 109px,#ffff00 225px,#00ffff 341px,#0000ff 457px,#000080 515px,#000080 636px)"></div>
<div class="a" style="left:1089px;top:137px;width:42px;height:32px;box-sizing:border-box;border:2px solid #f0955a;border-radius:4px;background:linear-gradient(#fcfcfc,#e4e4e4)"><svg width="38" height="28" style="position:absolute;left:0;top:0"><path d="M7.5 5.3H29.8 M7.5 11.2H29.8 M7.5 17.8H29.8 M7.5 23.6H29.8" stroke="#f0955a" stroke-width="2.3"/></svg></div>
<div class="a" style="left:1089px;top:627px;width:42px;height:32px;box-sizing:border-box;border:2px solid #f0955a;border-radius:4px;background:linear-gradient(#fcfcfc,#e4e4e4)"><svg width="38" height="28" style="position:absolute;left:0;top:0"><path d="M7.5 5.3H29.8 M7.5 11.2H29.8 M7.5 17.8H29.8 M7.5 23.6H29.8" stroke="#f0955a" stroke-width="2.3"/></svg></div>
<div class="a" style="left:743px;top:587px;width:117px;height:87px;background:#f6f6f6;border-radius:8px;font-size:14px;line-height:20px;color:#111"><div class="a" style="left:3px;top:4px">Id:</div><div class="a" style="left:23px;top:4px">Rect 1</div><div class="a" style="left:3px;top:24px">H:</div><div class="a" style="left:24px;top:24px">61.50mm</div><div class="a" style="left:3px;top:44px">W:</div><div class="a" style="left:24px;top:44px">68.00mm</div><div class="a" style="left:3px;top:64px">A:</div><div class="a" style="left:24px;top:64px">4,182.00 mm²</div></div>
<div class="a" style="left:97px;top:833px;width:1111px;height:1px;background:#b8b8b8"></div>
<div class="lbl" style="left:103px;top:845px;font-size:15px;font-weight:bold;letter-spacing:0.25px;color:#333">Velocity [m/s]: 3070</div>
<div class="lbl" style="left:880px;top:845px;font-size:15px;font-weight:bold;letter-spacing:0.28px;color:#333">Applied normalization: Amp:</div>
<div class="lbl" style="left:1137px;top:845px;font-size:15px;font-weight:bold;letter-spacing:-0.8px;color:#333">ToF:</div>
<div class="a" style="left:1107px;top:844px;width:16px;height:16px;box-sizing:border-box;border:1px solid #bdbdbd;background:#ececec"><svg width="14" height="14" style="position:absolute;left:0;top:0"><path d="M3 7 L6 10.5 L11.5 2.5" stroke="#9a9a9a" stroke-width="1.5" fill="none"/></svg></div>
<div class="a" style="left:1179px;top:844px;width:16px;height:16px;box-sizing:border-box;border:1px solid #bdbdbd;background:#ececec"><svg width="14" height="14" style="position:absolute;left:0;top:0"><path d="M3 7 L6 10.5 L11.5 2.5" stroke="#9a9a9a" stroke-width="1.5" fill="none"/></svg></div>
<div style="position:absolute;left:1361px;top:15px;width:50px;height:50px;background:#231f20;border-radius:5px;"><svg width="50" height="50" viewBox="0 0 50 50" style="position:absolute;left:0;top:0"><path d="M25 6.5V39.5" stroke="#fff" stroke-width="2.6"/><path d="M11.5 27.5 L25 39.5 L38.5 27.5" stroke="#fff" stroke-width="2.6" fill="none"/><path d="M8.5 44.5H41" stroke="#c5e59c" stroke-width="2.6"/></svg></div>
<div style="position:absolute;left:1423px;top:15px;width:50px;height:50px;background:#231f20;border-radius:5px;"><svg width="50" height="50" viewBox="0 0 50 50" style="position:absolute;left:0;top:0"><rect x="9.5" y="8.8" width="32.5" height="31.8" rx="2" stroke="#c5e59c" stroke-width="1.8" fill="none"/><rect x="29.8" y="12" width="7.3" height="3.6" fill="#fff"/><circle cx="25.3" cy="28.8" r="7.5" fill="#9c9c9c"/></svg></div>
<div style="position:absolute;left:1486px;top:15px;width:50px;height:50px;background:#231f20;border-radius:5px;"><svg width="50" height="50" viewBox="0 0 50 50" style="position:absolute;left:0;top:0"><path d="M7 9 L11 5 L42 5 L42 45.5 L7 45.5Z" fill="#fff"/><path d="M7 9 L11 5 L40 5 L38 9Z" fill="#c0c0c0"/><rect x="10" y="11" width="7" height="8" fill="#9a9a9a"/><rect x="20.5" y="11" width="7" height="8" fill="#9a9a9a"/><rect x="31" y="11" width="7" height="8" fill="#9a9a9a"/><path d="M11 18.5 L13.5 14 L16 18.5Z M21.5 18.5 L24 14 L26.5 18.5Z M32 18.5 L34.5 14 L37 18.5Z" fill="#fff"/><path d="M10 22.5H17 M20.5 22.5H28 M31 22.5H38 M10 25H17 M20.5 25H28 M31 25H38 M10 28H17 M20.5 28H28 M31 28H38" stroke="#a8a8a8" stroke-width="0.6"/><path d="M10 30.5H25 M27 30.5H41 M10 32.8H25 M27 32.8H41 M10 35H25 M27 35H40 M10 37.5H25 M10 39.8H25" stroke="#9a9a9a" stroke-width="1.1"/><circle cx="39.6" cy="8.7" r="6.9" fill="#c5e59c"/><path d="M35.8 8.7H43.4 M39.6 4.9V12.5" stroke="#222" stroke-width="1.3"/></svg></div>
<div style="position:absolute;left:1548px;top:15px;width:50px;height:50px;background:#231f20;border-radius:5px;"><svg width="50" height="50" viewBox="0 0 50 50" style="position:absolute;left:0;top:0"><rect x="9.5" y="8.5" width="31.5" height="32" rx="3" fill="#9c9c9c" stroke="#f7a81b" stroke-width="2"/><path d="M18 31.5 L37 12.8 M17.6 12.8H37.2V31.7" stroke="#fff" stroke-width="1.8" fill="none"/></svg></div>
<div style="position:absolute;left:1236px;top:73px;width:50px;height:50px;background:#231f20;border-radius:5px;"><svg width="50" height="50" viewBox="0 0 50 50" style="position:absolute;left:0;top:0"><circle cx="24.5" cy="25.3" r="16" stroke="#79c9ee" stroke-width="1.8" fill="none"/><path d="M24.5 7.5V12 M24.5 38.5V43 M6.8 25.3H11.3 M37.7 25.3H42.2" stroke="#79c9ee" stroke-width="1.5"/><path d="M20 25.3H29 M24.5 20.8V29.8" stroke="#fff" stroke-width="1.3"/></svg></div>
<div style="position:absolute;left:1298px;top:73px;width:50px;height:50px;background:#231f20;border-radius:5px;"><svg width="50" height="50" viewBox="0 0 50 50" style="position:absolute;left:0;top:0"><path d="M2.70 18.80 A4.6 4.6 0 1 1 11.90 18.80 Q11.40 21.30 7.30 28.50 Q3.20 21.30 2.70 18.80Z" fill="#fff"/><path d="M38.60 18.80 A4.6 4.6 0 1 1 47.80 18.80 Q47.30 21.30 43.20 28.50 Q39.10 21.30 38.60 18.80Z" fill="#fff"/><path d="M12 25V28.5 M15.3 25V28.5 M18.6 25V28.5 M22 25V28.5 M25.3 22V28.5 M28.6 25V28.5 M32 25V28.5 M35.3 25V28.5 M38.6 25V28.5" stroke="#ddd" stroke-width="1"/><path d="M7 34.5H43" stroke="#79c9ee" stroke-width="1.4"/></svg></div>
<div style="position:absolute;left:1361px;top:73px;width:50px;height:50px;background:#231f20;border-radius:5px;"><svg width="50" height="50" viewBox="0 0 50 50" style="position:absolute;left:0;top:0"><circle cx="25" cy="25.3" r="18.6" fill="#7cc8ec"/><path d="M3.00 18.80 A4.6 4.6 0 1 1 12.20 18.80 Q11.70 21.30 7.60 28.60 Q3.50 21.30 3.00 18.80Z" fill="#fff"/><path d="M37.80 18.80 A4.6 4.6 0 1 1 47.00 18.80 Q46.50 21.30 42.40 28.60 Q38.30 21.30 37.80 18.80Z" fill="#fff"/><path d="M12.5 25V28.5 M15.8 25V28.5 M19.1 25V28.5 M22.4 25V28.5 M25.5 22V28.5 M28.8 25V28.5 M32 25V28.5 M35.3 25V28.5 M38.6 25V28.5" stroke="#fff" stroke-width="1"/></svg></div>
<div class="a" style="left:1423px;top:73px;width:50px;height:50px;box-sizing:border-box;border:2px solid #f0955a;border-radius:2px;box-shadow:0 0 3px rgba(240,149,90,0.6)"><svg width="46" height="46" viewBox="2 2 46 46" style="position:absolute;left:0;top:0"><rect x="11" y="17" width="28.5" height="27.5" rx="1" fill="#7cc8ec"/><path d="M15 41 L37 20" stroke="#fff" stroke-width="1.5" stroke-dasharray="1.2 2.2" opacity="0.8"/><path d="M7.90 35.60 A4.6 4.6 0 1 1 17.10 35.60 Q16.60 38.10 12.50 44.70 Q8.40 38.10 7.90 35.60Z" fill="#231f20"/><path d="M33.60 9.70 A4.6 4.6 0 1 1 42.80 9.70 Q42.30 12.20 38.20 19.20 Q34.10 12.20 33.60 9.70Z" fill="#231f20"/></svg></div>
<div style="position:absolute;left:1486px;top:73px;width:50px;height:50px;background:#231f20;border-radius:5px;"><svg width="50" height="50" viewBox="0 0 50 50" style="position:absolute;left:0;top:0"><path d="M4.10 10.60 A4.6 4.6 0 1 1 13.30 10.60 Q12.80 13.10 8.70 20.00 Q4.60 13.10 4.10 10.60Z" fill="#fff"/><path d="M15.80 14.60 A4.6 4.6 0 1 1 25.00 14.60 Q24.50 17.10 20.40 24.00 Q16.30 17.10 15.80 14.60Z" fill="#fff"/><path d="M28.00 10.60 A4.6 4.6 0 1 1 37.20 10.60 Q36.70 13.10 32.60 20.00 Q28.50 13.10 28.00 10.60Z" fill="#fff"/><path d="M8.7 23 V26 L7.699999999999999 27 L10.7 28 L5.699999999999999 30 L11.7 32 L6.699999999999999 34 L10.7 36 L6.699999999999999 38 L10.7 40 L6.699999999999999 42 L9.7 43 L8.7 44 V48" stroke="#fff" stroke-width="1" fill="none"/><path d="M20.4 27 V30 L19.4 31 L22.4 32 L17.4 34 L23.4 36 L18.4 38 L22.4 40 L18.4 42 L22.4 44 L18.4 46 L21.4 47 L20.4 48 V48" stroke="#fff" stroke-width="1" fill="none"/><path d="M32.6 23 V26 L31.6 27 L34.6 28 L29.6 30 L35.6 32 L30.6 34 L34.6 36 L30.6 38 L34.6 40 L30.6 42 L33.6 43 L32.6 44 V48" stroke="#fff" stroke-width="1" fill="none"/><path d="M39.8 21.5V46.7" stroke="#79c9ee" stroke-width="2.2"/><path d="M43 22.5H45 M43 25.8H45 M43 29H45 M43 32.3H45 M43 35.6H45 M43 38.9H45 M43 42.2H45 M43 45.5H45" stroke="#999" stroke-width="1.5"/></svg></div>
<div style="position:absolute;left:1548px;top:73px;width:50px;height:50px;background:#231f20;border-radius:5px;"><svg width="50" height="50" viewBox="0 0 50 50" style="position:absolute;left:0;top:0"><path d="M14.60 8.60 A4.6 4.6 0 1 1 23.80 8.60 Q23.30 11.10 19.20 17.50 Q15.10 11.10 14.60 8.60Z" fill="#fff"/><ellipse cx="19.2" cy="20.4" rx="12" ry="7.3" stroke="#ddd" stroke-width="1.5" fill="none"/><path d="M16.5 18 L22 23 M22 18 L16.5 23" stroke="#fff" stroke-width="2"/><path d="M19.2 24 V27 L18.2 28 L21.2 29 L16.2 31 L22.2 33 L17.2 35 L21.2 37 L17.2 39 L21.2 41 L17.2 43 L20.2 44 L19.2 45 V46" stroke="#fff" stroke-width="1" fill="none"/><path d="M37.8 21V46" stroke="#79c9ee" stroke-width="2.2"/><path d="M41 22H43 M41 25.3H43 M41 28.6H43 M41 31.9H43 M41 35.2H43 M41 38.5H43 M41 41.8H43 M41 45H43" stroke="#999" stroke-width="1.5"/></svg></div>
<div class="a" style="left:1230px;top:232px;width:374px;height:648px;background:#f2f3f5;border-left:1px solid #b9bcbf;box-sizing:border-box"></div>
<div class="a" style="left:1604px;top:281px;width:7px;height:552px;background:#dfe2e4"></div>
<div class="a" style="left:1230px;top:232px;width:374px;height:49px;background:#231f20;border-radius:4px 4px 2px 2px"></div>
<svg class="a" style="left:1230px;top:232px" width="375" height="49"><path d="M115.7 36.7 L186.3 11.2 L256.6 36.7Z" fill="#fff"/></svg>
<div class="a" style="left:1230px;top:833px;width:375px;height:47px;background:#231f20;border-radius:5px 5px 0 0"></div>
<svg class="a" style="left:1230px;top:833px" width="375" height="47"><path d="M115.7 11.8 L257 11.8 L186 37.2Z" fill="#fff"/></svg>
<div class="lbl" style="left:1240px;top:287px;">Name</div>
<div class="lbl" style="left:1417px;top:287px;">Color</div>
<div class="box" style="left:1240px;top:305px;width:171px;height:27px;background:#fff"></div>
<div class="lbl" style="left:1244px;top:306px;font-size:14px">Rect 1</div>
<div class="box" style="left:1421px;top:305px;width:167px;height:27px;background:#fff"></div>
<div class="a" style="left:1565px;top:305px;width:23px;height:27px;box-sizing:border-box;background:#dcdcdc;border:1px solid #8a8a8a"><svg width="21" height="25"><path d="M5.5 11 L10.5 14.5 L15.5 11 L15.5 13 L10.5 17 L5.5 13Z" fill="#111"/></svg></div>
<div class="a" style="left:1427px;top:311px;width:25px;height:15px;background:#000"></div>
<div class="lbl" style="left:1457px;top:310px;font-size:14px">Black</div>
<div class="lbl" style="left:1240px;top:333px;">Height (mm)</div>
<div class="lbl" style="left:1423px;top:333px;">Width (mm)</div>
<div class="sp" style="left:1241px;top:350px;width:56px;height:38px;line-height:38px;font-weight:bold">-</div><div class="a" style="left:1297px;top:350px;width:57px;height:38px;box-sizing:border-box;border-top:1px solid #c8c8c8;border-bottom:1px solid #c8c8c8;background:#fff;font-size:17.5px;text-align:right;line-height:37px;padding-right:3px;color:#111">61.50</div><div class="sp" style="left:1353px;top:350px;width:57px;height:38px;line-height:36px">+</div>
<div class="sp" style="left:1421px;top:350px;width:56px;height:38px;line-height:38px;font-weight:bold">-</div><div class="a" style="left:1477px;top:350px;width:57px;height:38px;box-sizing:border-box;border-top:1px solid #c8c8c8;border-bottom:1px solid #c8c8c8;background:#fff;font-size:17.5px;text-align:right;line-height:37px;padding-right:3px;color:#111">68.00</div><div class="sp" style="left:1533px;top:350px;width:57px;height:38px;line-height:36px">+</div>
<div class="lbl" style="left:1240px;top:395px;">Area</div>
<div class="lbl" style="left:1417px;top:395px;">Signal To Reference</div>
<div class="box" style="left:1240px;top:418px;width:175px;height:28px"></div>
<div class="lbl" style="left:1243px;top:424px;">4,182.00 mm²</div>
<div class="box" style="left:1420px;top:418px;width:175px;height:28px"></div>
<div class="lbl" style="left:1423px;top:424px;">NaN dB</div>
<div class="dbtn" style="left:1240px;top:458px;width:143px;height:31px;border-radius:5px;font-size:16px;line-height:31px">Capture reference</div>
<div class="lbl" style="left:1395px;top:464px;font-size:14.2px">Reference:</div>
<div class="box" style="left:1468px;top:458px;width:51px;height:28px"></div>
<div class="lbl" style="left:1472px;top:464px;font-size:14px">0.00 %</div>
<div class="dbtn" style="left:1524px;top:458px;width:58px;height:28px;border-radius:5px;font-size:16px;line-height:28px">Clear</div>
<div class="a" style="left:1236px;top:509px;width:7px;height:1px;background:#d3dbe2"></div>
<div class="lbl" style="left:1245px;top:500px;font-weight:bold;font-size:14px;letter-spacing:0.25px">Statistics (combined gates)</div>
<div class="a" style="left:1440px;top:509px;width:158px;height:1px;background:#d3dbe2"></div>
<div class="lbl" style="left:1240px;top:526px;">Mean:</div>
<div class="lbl" style="left:1325px;top:526px;">2.33 mm</div>
<div class="lbl" style="left:1411px;top:526px;">Std. Deviation:</div>
<div class="lbl" style="left:1508px;top:526px;">0.55 mm</div>
<div class="lbl" style="left:1240px;top:550px;">Median:</div>
<div class="lbl" style="left:1325px;top:550px;">2.46 mm</div>
<div class="lbl" style="left:1411px;top:550px;">Maximum:</div>
<div class="lbl" style="left:1508px;top:550px;">5.83 mm</div>
<div class="lbl" style="left:1240px;top:574px;">Mode:</div>
<div class="lbl" style="left:1325px;top:574px;">2.64 mm</div>
<div class="lbl" style="left:1411px;top:574px;">Minimum:</div>
<div class="lbl" style="left:1508px;top:574px;">0.31 mm</div>
<div class="a" style="left:1236px;top:609px;width:7px;height:1px;background:#d3dbe2"></div>
<div class="lbl" style="left:1245px;top:600px;font-weight:bold;font-size:14px;letter-spacing:0.42px">Histogram (combined gates)</div>
<div class="a" style="left:1452px;top:609px;width:146px;height:1px;background:#d3dbe2"></div>
<div class="lbl" style="left:1240px;top:621px;">Histogram Bars</div>
<div class="sp" style="left:1241px;top:639px;width:56px;height:37px;line-height:37px;font-weight:bold">-</div><div class="a" style="left:1297px;top:639px;width:57px;height:37px;box-sizing:border-box;border-top:1px solid #c8c8c8;border-bottom:1px solid #c8c8c8;background:#f4f5f7;font-size:17.5px;text-align:right;line-height:36px;padding-right:3px;color:#111">50</div><div class="sp" style="left:1353px;top:639px;width:57px;height:37px;line-height:35px">+</div>
<div class="dbtn" style="left:1423px;top:639px;width:171px;height:37px;border-radius:5px;font-size:16.5px;line-height:37px"><span style="position:absolute;left:60px;top:0">Pop up</span><svg width="32" height="32" style="position:absolute;left:135px;top:4px"><rect x="4.5" y="7.5" width="19.5" height="18.5" rx="3.5" stroke="#9a9a9a" stroke-width="1.6" fill="none"/><rect x="9.3" y="5" width="19" height="16" fill="#231f20"/><rect x="10.6" y="6.5" width="16.5" height="13.4" rx="1.2" fill="#fff"/></svg></div>
<svg class="a" style="left:1230px;top:675px" width="375" height="130"><rect x="55.5" y="8.5" width="309" height="98.5" fill="#fff" stroke="#9d9d9d" stroke-width="1.3"/><path d="M55.5 52.299999999999955H364.5" stroke="#8a8a8a" stroke-width="1.2"/><path d="M49.5 52.299999999999955H55.5 M49.5 107H55.5" stroke="#222" stroke-width="1.5"/><rect x="67.67" y="106.17" width="4.7" height="0.83" fill="#957b62"/><rect x="91.94" y="104.95" width="4.7" height="2.05" fill="#957b62"/><rect x="99.22" y="103.01" width="4.7" height="3.99" fill="#957b62"/><rect x="105.29" y="106.17" width="4.7" height="0.83" fill="#957b62"/><rect x="111.36" y="104.95" width="4.7" height="2.05" fill="#957b62"/><rect x="117.43" y="95.00" width="4.7" height="12.00" fill="#957b62"/><rect x="123.98" y="95.97" width="4.7" height="11.03" fill="#957b62"/><rect x="130.29" y="83.11" width="4.7" height="23.89" fill="#957b62"/><rect x="136.12" y="28.98" width="4.7" height="78.02" fill="#957b62"/><rect x="142.18" y="88.93" width="4.7" height="18.07" fill="#957b62"/><rect x="147.77" y="95.00" width="4.7" height="12.00" fill="#957b62"/><rect x="154.32" y="78.98" width="4.7" height="28.02" fill="#957b62"/><rect x="160.39" y="18.79" width="4.7" height="88.21" fill="#957b62"/><rect x="166.46" y="58.83" width="4.7" height="48.17" fill="#957b62"/><rect x="172.52" y="94.03" width="4.7" height="12.97" fill="#957b62"/><rect x="178.83" y="98.16" width="4.7" height="8.84" fill="#957b62"/><rect x="185.39" y="100.10" width="4.7" height="6.90" fill="#957b62"/><rect x="191.46" y="104.95" width="4.7" height="2.05" fill="#957b62"/><rect x="197.52" y="106.17" width="4.7" height="0.83" fill="#957b62"/><rect x="203.59" y="105.92" width="4.7" height="1.08" fill="#957b62"/><rect x="209.66" y="104.95" width="4.7" height="2.05" fill="#957b62"/><rect x="216.21" y="106.17" width="4.7" height="0.83" fill="#957b62"/><rect x="222.52" y="106.17" width="4.7" height="0.83" fill="#957b62"/><rect x="252.86" y="106.17" width="4.7" height="0.83" fill="#957b62"/><rect x="258.93" y="106.17" width="4.7" height="0.83" fill="#957b62"/><rect x="290.49" y="106.17" width="4.7" height="0.83" fill="#957b62"/><rect x="296.31" y="106.17" width="4.7" height="0.83" fill="#957b62"/><path d="M55.50 107V111" stroke="#222" stroke-width="1.5"/><text x="55.50" y="125.5" text-anchor="middle" style="font-size:14px">0</text><path d="M97.63 107V111" stroke="#222" stroke-width="1.5"/><text x="97.63" y="125.5" text-anchor="middle" style="font-size:14px">1</text><path d="M139.76 107V111" stroke="#222" stroke-width="1.5"/><text x="139.76" y="125.5" text-anchor="middle" style="font-size:14px">2</text><path d="M181.89 107V111" stroke="#222" stroke-width="1.5"/><text x="181.89" y="125.5" text-anchor="middle" style="font-size:14px">3</text><path d="M224.02 107V111" stroke="#222" stroke-width="1.5"/><text x="224.02" y="125.5" text-anchor="middle" style="font-size:14px">4</text><path d="M266.15 107V111" stroke="#222" stroke-width="1.5"/><text x="266.15" y="125.5" text-anchor="middle" style="font-size:14px">5</text><path d="M308.28 107V111" stroke="#222" stroke-width="1.5"/><text x="308.28" y="125.5" text-anchor="middle" style="font-size:14px">6</text><path d="M350.41 107V111" stroke="#222" stroke-width="1.5"/><text x="350.41" y="125.5" text-anchor="middle" style="font-size:14px">7</text><text x="49.5" y="56" text-anchor="end" style="font-size:14px">10000</text><text x="49.5" y="112" text-anchor="end" style="font-size:14px">0</text></svg>
<div class="lbl" style="left:1240px;top:812px;font-weight:bold;font-size:14px;letter-spacing:0.5px">Visibility of measurement information</div>
<div class="a" style="left:1581px;top:830px;width:13px;height:3px;background:#e8e8e8;border:1px solid #c8c8c8;border-bottom:none"></div>
</body></html>
